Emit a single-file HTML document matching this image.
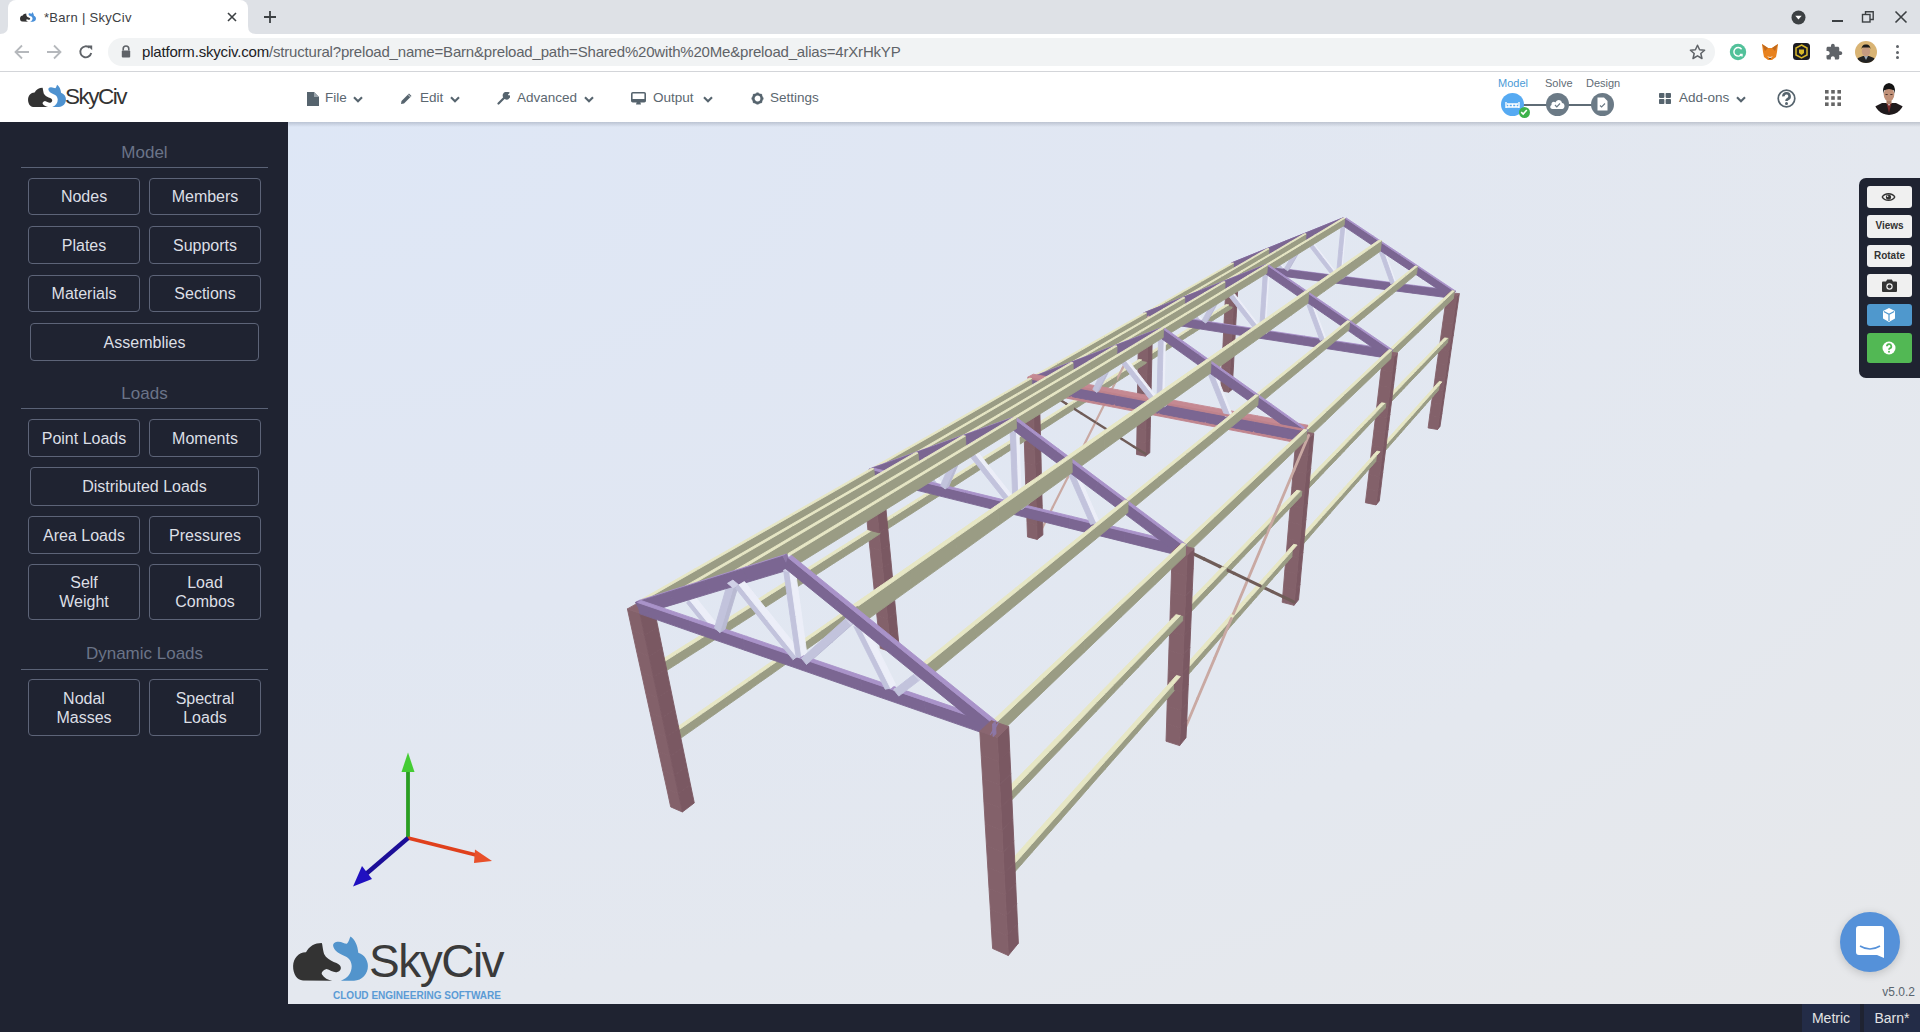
<!DOCTYPE html>
<html><head><meta charset="utf-8"><title>*Barn | SkyCiv</title>
<style>
*{box-sizing:border-box;margin:0;padding:0}
html,body{width:1920px;height:1032px;overflow:hidden;font-family:"Liberation Sans", sans-serif;background:#fff;position:relative}
.abs{position:absolute}
#tabbar{position:absolute;left:0;top:0;width:1920px;height:34px;background:#dee1e6}
#tab{position:absolute;left:8px;top:0;width:240px;height:34px;background:#fff;border-radius:8px 8px 0 0}
#addr{position:absolute;left:0;top:34px;width:1920px;height:37px;background:#fff}
#omni{position:absolute;left:108px;top:38px;width:1607px;height:28px;background:#f1f3f4;border-radius:14px}
#sep{position:absolute;left:0;top:71px;width:1920px;height:1px;background:#d3d5d9}
#hdr{position:absolute;left:0;top:72px;width:1920px;height:50px;background:#fff}
.menu{position:absolute;top:89px;font-size:13.5px;color:#5b6770;line-height:18px;white-space:nowrap}
#side{position:absolute;left:0;top:122px;width:288px;height:882px;background:#1f2331}
.sht{position:absolute;left:21px;width:247px;text-align:center;color:#6b7488;font-size:17px;line-height:22px}
.shl{position:absolute;left:21px;width:247px;height:1px;background:#5a6276}
.btn{position:absolute;border:1px solid #5d6478;border-radius:4px;color:#dcdfe5;font-size:16px;text-align:center;display:flex;align-items:center;justify-content:center;line-height:19px}
#canvas{position:absolute;left:288px;top:122px;width:1632px;height:882px;overflow:hidden;background:radial-gradient(ellipse 2300px 1250px at 0px 0px,#dee7f6 0%,#e1e7f2 40%,#e4e8ef 70%,#e7e8ea 100%)}
#status{position:absolute;left:0;top:1004px;width:1920px;height:28px;background:#1f2331}
.tb{position:absolute;left:1867px;width:45px;background:#f0f0f0;border-radius:3px;font-size:10px;font-weight:bold;color:#333;text-align:center}
</style></head><body>
<div id="tabbar"></div>
<div id="tab"></div>
<svg class="abs" style="left:0;top:26px" width="8" height="8"><path d="M0 8 Q8 8 8 0 L8 8 Z" fill="#fff"/></svg>
<svg class="abs" style="left:248px;top:26px" width="8" height="8"><path d="M8 8 Q0 8 0 0 L0 8 Z" fill="#fff"/></svg>
<!-- favicon --><svg class="abs" style="left:20px;top:12px" width="16" height="10" viewBox="0 0 75 46"><path d="M10,44.5 C4,44.5 0,38 0.1,30.1 C0.3,22 6,16 13,16.2 C16,10 22,7 28.7,6.9 C29.5,8 29.5,12 31.1,18 C33,22 37,24 40.7,25.9 C49,28 50,34 44.3,36.1 C41,37 37,34 33.5,33.1 C30,34 28,37 29,38.5 C31,42 35,44 39.5,44.8 Z" fill="#333"/><path d="M40.1,9.6 C40,7 43,5.5 45.5,5.7 C49,5.8 51,7.5 53.9,7.8 C56,6 56.5,2 57.5,0.6 C62,4 64.5,9 65.3,16.8 C72,19 75,25 74.9,30.1 C75,38 69,44.5 61.1,44.8 L47.9,44.8 C55,42 58.7,37 58.7,30.1 C58.5,24 55,21 50.5,19.4 C45,17.5 40.5,14 40.1,9.6 Z" fill="#4a90d9"/></svg>
<div class="abs" style="left:44px;top:10px;font-size:13px;color:#3c4043;line-height:16px;white-space:nowrap;letter-spacing:0.3px">*Barn | SkyCiv</div>
<svg class="abs" style="left:226px;top:11px" width="12" height="12" viewBox="0 0 12 12"><path d="M2 2 L10 10 M10 2 L2 10" stroke="#3c4043" stroke-width="1.6"/></svg>
<svg class="abs" style="left:263px;top:10px" width="14" height="14" viewBox="0 0 14 14"><path d="M7 1 V13 M1 7 H13" stroke="#3c4043" stroke-width="1.8"/></svg>
<svg class="abs" style="left:1791px;top:10px" width="15" height="15" viewBox="0 0 15 15"><circle cx="7.5" cy="7.5" r="7" fill="#3c4043"/><path d="M4.3 5.8 H10.7 L7.5 9.6 Z" fill="#fff"/></svg>
<div class="abs" style="left:1832px;top:20px;width:11px;height:1.6px;background:#3c4043"></div>
<svg class="abs" style="left:1861px;top:10px" width="14" height="14" viewBox="0 0 14 14"><rect x="1.5" y="4.5" width="7.5" height="7.5" fill="none" stroke="#3c4043" stroke-width="1.4"/><path d="M4.5 4.5 V1.8 H12.2 V9.5 H9" fill="none" stroke="#3c4043" stroke-width="1.4"/></svg>
<svg class="abs" style="left:1894px;top:10px" width="14" height="14" viewBox="0 0 14 14"><path d="M1.5 1.5 L12.5 12.5 M12.5 1.5 L1.5 12.5" stroke="#3c4043" stroke-width="1.6"/></svg>

<div id="addr"></div>
<svg class="abs" style="left:14px;top:44px" width="16" height="16" viewBox="0 0 16 16"><path d="M15 8 H2 M8 1.5 L1.5 8 L8 14.5" fill="none" stroke="#b5b8bc" stroke-width="1.8"/></svg>
<svg class="abs" style="left:46px;top:44px" width="16" height="16" viewBox="0 0 16 16"><path d="M1 8 H14 M8 1.5 L14.5 8 L8 14.5" fill="none" stroke="#b5b8bc" stroke-width="1.8"/></svg>
<svg class="abs" style="left:78px;top:44px" width="16" height="16" viewBox="0 0 16 16"><path d="M13.2 9 A5.5 5.5 0 1 1 11.6 3.8" fill="none" stroke="#5f6368" stroke-width="1.9"/><path d="M9.5 1.5 H14.2 V6.2 Z" fill="#5f6368"/></svg>
<div id="omni"></div>
<svg class="abs" style="left:121px;top:45px" width="10" height="13" viewBox="0 0 10 13"><path d="M2.2 5.5 V3.8 A2.8 2.8 0 0 1 7.8 3.8 V5.5" fill="none" stroke="#5f6368" stroke-width="1.6"/><rect x="0.8" y="5.5" width="8.4" height="7" rx="1" fill="#5f6368"/></svg>
<div class="abs" style="left:142px;top:42px;font-size:15px;line-height:20px;color:#5f6368;white-space:nowrap;letter-spacing:-0.19px"><span style="color:#202124">platform.skyciv.com</span>/structural?preload_name=Barn&amp;preload_path=Shared%20with%20Me&amp;preload_alias=4rXrHkYP</div>
<svg class="abs" style="left:1689px;top:44px" width="17" height="16" viewBox="0 0 17 16"><path d="M8.5 1.2 L10.6 5.8 L15.6 6.2 L11.8 9.5 L13 14.5 L8.5 11.8 L4 14.5 L5.2 9.5 L1.4 6.2 L6.4 5.8 Z" fill="none" stroke="#5f6368" stroke-width="1.5" stroke-linejoin="round"/></svg>
<svg class="abs" style="left:1729px;top:43px" width="18" height="18" viewBox="0 0 18 18"><circle cx="9" cy="9" r="8.2" fill="#52c19a"/><path d="M12.6 6.2 A4.3 4.3 0 1 0 12.8 11.2 M10.8 11.4 H13 V13.5" fill="none" stroke="#fff" stroke-width="1.4"/></svg>
<svg class="abs" style="left:1761px;top:43px" width="18" height="18" viewBox="0 0 18 18"><path d="M1 1 L7 5 H11 L17 1 L16 9 L15 14 L11 17 H7 L3 14 L2 9 Z" fill="#e8821e"/><path d="M1 1 L7 5 L4 8 Z M17 1 L11 5 L14 8 Z" fill="#c0691c"/><path d="M6 13 L9 16 L12 13 L9 14 Z" fill="#f0d8c0"/><path d="M8 15 H10 L9 16.5 Z" fill="#222"/></svg>
<svg class="abs" style="left:1793px;top:43px" width="17" height="17" viewBox="0 0 17 17"><rect x="0" y="0" width="17" height="17" rx="3.5" fill="#1b1c22"/><path d="M8.5 2 L14 5 V12 L8.5 15 L3 12 V5 Z" fill="none" stroke="#d8b82a" stroke-width="1.5"/><path d="M6 6.5 H11 V10 L8.5 12 L6 10 Z" fill="#d8b82a"/></svg>
<svg class="abs" style="left:1825px;top:43px" width="18" height="18" viewBox="0 0 24 24"><path d="M20.5 11H19V7c0-1.1-.9-2-2-2h-4V3.5C13 2.12 11.88 1 10.5 1S8 2.12 8 3.5V5H4c-1.1 0-1.99.9-1.99 2v3.8H3.5c1.49 0 2.7 1.21 2.7 2.7s-1.21 2.7-2.7 2.7H2V20c0 1.1.9 2 2 2h3.8v-1.5c0-1.49 1.21-2.7 2.7-2.7 1.49 0 2.7 1.21 2.7 2.7V22H17c1.1 0 2-.9 2-2v-4h1.5c1.38 0 2.5-1.12 2.5-2.5S21.88 11 20.5 11z" fill="#5f6368"/></svg>
<svg class="abs" style="left:1855px;top:41px" width="22" height="22" viewBox="0 0 22 22"><defs><clipPath id="av1"><circle cx="11" cy="11" r="11"/></clipPath></defs><g clip-path="url(#av1)"><rect width="22" height="22" fill="#d9b474"/><path d="M0 22 L3 17 L8 15 L14 15 L19 17 L22 22 Z" fill="#222"/><path d="M9 15 L11 19 L13 15 Z" fill="#9ab"/><ellipse cx="11" cy="10.5" rx="4.2" ry="5" fill="#c49a80"/><path d="M6.5 8 Q7 3 11 3.5 Q15 3 15.5 8 L14.5 6.5 L7.5 6.5 Z" fill="#1a1a1a"/></g></svg>
<div class="abs" style="left:1896px;top:45px;width:3px;height:3px;border-radius:50%;background:#5f6368"></div>
<div class="abs" style="left:1896px;top:50.5px;width:3px;height:3px;border-radius:50%;background:#5f6368"></div>
<div class="abs" style="left:1896px;top:56px;width:3px;height:3px;border-radius:50%;background:#5f6368"></div>
<div id="sep"></div>

<div id="hdr"></div>
<svg class="abs" style="left:28px;top:84px" width="38" height="24" viewBox="0 0 75 46"><path d="M10,44.5 C4,44.5 0,38 0.1,30.1 C0.3,22 6,16 13,16.2 C16,10 22,7 28.7,6.9 C29.5,8 29.5,12 31.1,18 C33,22 37,24 40.7,25.9 C49,28 50,34 44.3,36.1 C41,37 37,34 33.5,33.1 C30,34 28,37 29,38.5 C31,42 35,44 39.5,44.8 Z" fill="#333"/><path d="M40.1,9.6 C40,7 43,5.5 45.5,5.7 C49,5.8 51,7.5 53.9,7.8 C56,6 56.5,2 57.5,0.6 C62,4 64.5,9 65.3,16.8 C72,19 75,25 74.9,30.1 C75,38 69,44.5 61.1,44.8 L47.9,44.8 C55,42 58.7,37 58.7,30.1 C58.5,24 55,21 50.5,19.4 C45,17.5 40.5,14 40.1,9.6 Z" fill="#4e92d0"/></svg>
<div class="abs" style="left:65px;top:83px;font-size:22.5px;color:#333;line-height:28px;letter-spacing:-1.5px">SkyCiv</div>

<svg class="abs" style="left:307px;top:92px" width="12" height="14" viewBox="0 0 12 14"><path d="M0 0 H7 L12 5 V14 H0 Z" fill="#56646e"/><path d="M7 0 V5 H12" fill="#9aa4ab"/></svg>
<div class="menu" style="left:325px">File</div><svg class="abs" style="left:353px;top:96px" width="10" height="7" viewBox="0 0 10 7"><path d="M1 1.2 L5 5.2 L9 1.2" fill="none" stroke="#56646e" stroke-width="2.1"/></svg>
<svg class="abs" style="left:400px;top:92px" width="13" height="13" viewBox="0 0 13 13"><path d="M1 12 L1.5 9 L9 1.5 L11.5 4 L4 11.5 Z" fill="#56646e"/><path d="M8 2.5 L10.5 5" stroke="#fff" stroke-width="0.8"/></svg>
<div class="menu" style="left:420px">Edit</div><svg class="abs" style="left:450px;top:96px" width="10" height="7" viewBox="0 0 10 7"><path d="M1 1.2 L5 5.2 L9 1.2" fill="none" stroke="#56646e" stroke-width="2.1"/></svg>
<svg class="abs" style="left:497px;top:92px" width="13" height="13" viewBox="0 0 13 13"><path d="M1.5 11.5 L6.5 6.5 M7 2.5 A3 3 0 0 0 10.5 6.5 L12.5 4.5 L10.5 4 L9.5 2.5 L11 1 A3 3 0 0 0 7 2.5" fill="#56646e" stroke="#56646e" stroke-width="2.2" stroke-linecap="round"/></svg>
<div class="menu" style="left:517px">Advanced</div><svg class="abs" style="left:584px;top:96px" width="10" height="7" viewBox="0 0 10 7"><path d="M1 1.2 L5 5.2 L9 1.2" fill="none" stroke="#56646e" stroke-width="2.1"/></svg>
<svg class="abs" style="left:631px;top:92px" width="15" height="13" viewBox="0 0 15 13"><rect x="0.8" y="0.8" width="13.4" height="9" rx="1" fill="none" stroke="#56646e" stroke-width="1.6"/><rect x="0.8" y="7" width="13.4" height="2.8" fill="#56646e"/><path d="M5 12.5 H10 L9.2 9.8 H5.8 Z" fill="#56646e"/></svg>
<div class="menu" style="left:653px">Output</div><svg class="abs" style="left:703px;top:96px" width="10" height="7" viewBox="0 0 10 7"><path d="M1 1.2 L5 5.2 L9 1.2" fill="none" stroke="#56646e" stroke-width="2.1"/></svg>
<svg class="abs" style="left:751px;top:92px" width="13" height="13" viewBox="0 0 13 13"><circle cx="6.5" cy="6.5" r="4.2" fill="none" stroke="#56646e" stroke-width="2.6"/><path d="M6.5 0.5 V3 M6.5 10 V12.5 M0.5 6.5 H3 M10 6.5 H12.5 M2.3 2.3 L4 4 M9 9 L10.7 10.7 M2.3 10.7 L4 9 M9 4 L10.7 2.3" stroke="#56646e" stroke-width="2.2"/></svg>
<div class="menu" style="left:770px">Settings</div>

<div class="abs" style="left:1498px;top:77px;font-size:11px;color:#4a9ad6;line-height:13px">Model</div>
<div class="abs" style="left:1545px;top:77px;font-size:11px;color:#5f6c76;line-height:13px">Solve</div>
<div class="abs" style="left:1586px;top:77px;font-size:11px;color:#5f6c76;line-height:13px">Design</div>
<div class="abs" style="left:1520px;top:103.5px;width:80px;height:2px;background:#5f6c76"></div>
<div class="abs" style="left:1500.5px;top:93px;width:23px;height:23px;border-radius:50%;background:#56aaf2"></div>
<svg class="abs" style="left:1505px;top:99px" width="15" height="11" viewBox="0 0 15 11"><path d="M1 3 V9 M14 3 V9 M1 8 H14 M2 5 H13 M4 5 V8 M7.5 5 V8 M11 5 V8" stroke="#fff" stroke-width="1.4"/></svg>
<div class="abs" style="left:1518.5px;top:106.5px;width:11px;height:11px;border-radius:50%;background:#3cb24a"></div>
<svg class="abs" style="left:1520px;top:108px" width="8" height="8" viewBox="0 0 8 8"><path d="M1.2 4.2 L3.2 6 L6.8 2" fill="none" stroke="#fff" stroke-width="1.6"/></svg>
<div class="abs" style="left:1546px;top:93px;width:23px;height:23px;border-radius:50%;background:#6b7a86"></div>
<svg class="abs" style="left:1549px;top:98px" width="17" height="12" viewBox="0 0 17 12"><path d="M3.5 11 C1 11 0.5 8 2.5 7 C2 4 5 3 6.5 4.5 C7.5 1 12.5 1 13 5 C16 5 16.5 10 13.5 11 Z" fill="#fff"/><path d="M6 7 L7.8 8.8 L11 5.5" fill="none" stroke="#6b7a86" stroke-width="1.2"/></svg>
<div class="abs" style="left:1591px;top:93px;width:23px;height:23px;border-radius:50%;background:#6b7a86"></div>
<svg class="abs" style="left:1597px;top:97px" width="11" height="14" viewBox="0 0 11 14"><path d="M0.5 0.5 H7 L10.5 4 V13.5 H0.5 Z" fill="#fff"/><path d="M3 8.5 L4.6 10 L8 6.5" fill="none" stroke="#6b7a86" stroke-width="1.1"/></svg>

<svg class="abs" style="left:1659px;top:93px" width="12" height="11" viewBox="0 0 12 11"><rect x="0" y="0" width="5.4" height="4.9" rx="0.8" fill="#56646e"/><rect x="6.6" y="0" width="5.4" height="4.9" rx="0.8" fill="#56646e"/><rect x="0" y="6.1" width="5.4" height="4.9" rx="0.8" fill="#56646e"/><rect x="6.6" y="6.1" width="5.4" height="4.9" rx="0.8" fill="#56646e"/></svg>
<div class="menu" style="left:1679px">Add-ons</div><svg class="abs" style="left:1736px;top:96px" width="10" height="7" viewBox="0 0 10 7"><path d="M1 1.2 L5 5.2 L9 1.2" fill="none" stroke="#56646e" stroke-width="2.1"/></svg>
<svg class="abs" style="left:1777px;top:89px" width="19" height="19" viewBox="0 0 19 19"><circle cx="9.5" cy="9.5" r="8.3" fill="none" stroke="#56646e" stroke-width="1.7"/><path d="M6.4 7.4 A3.1 3.1 0 1 1 10.6 10.2 C9.8 10.6 9.5 11 9.5 12" fill="none" stroke="#56646e" stroke-width="2.6"/><circle cx="9.5" cy="14.6" r="1.5" fill="#56646e"/></svg>
<svg class="abs" style="left:1825px;top:90px" width="16" height="16" viewBox="0 0 16 16"><g fill="#666"><rect x="0" y="0" width="3.6" height="3.6"/><rect x="6.2" y="0" width="3.6" height="3.6"/><rect x="12.4" y="0" width="3.6" height="3.6"/><rect x="0" y="6.2" width="3.6" height="3.6"/><rect x="6.2" y="6.2" width="3.6" height="3.6"/><rect x="12.4" y="6.2" width="3.6" height="3.6"/><rect x="0" y="12.4" width="3.6" height="3.6"/><rect x="6.2" y="12.4" width="3.6" height="3.6"/><rect x="12.4" y="12.4" width="3.6" height="3.6"/></g></svg>
<svg class="abs" style="left:1874px;top:82px" width="30" height="33" viewBox="0 0 30 33"><defs><clipPath id="av2"><path d="M0 0 H30 V18 A15 15 0 0 1 0 18 Z"/></clipPath></defs><g clip-path="url(#av2)"><path d="M-1 33 L0 25 L8 21 L22 21 L30 25 L31 33 Z" fill="#1f1a1c"/><path d="M12.5 21 L15 31 L17.5 21 Z" fill="#7a2a2a"/><path d="M13.5 21 L15 24 L16.5 21 Z" fill="#ddd"/><rect x="12.5" y="17" width="5" height="5" fill="#a87c66"/><ellipse cx="15" cy="12.5" rx="5.3" ry="6.8" fill="#c09078"/><path d="M9 12 Q8 1.5 15 1 Q22 1.5 21 12 L20 8.5 Q15 5.5 10 8.5 Z" fill="#141414"/><path d="M11.5 12.5 h2.2 M16.3 12.5 h2.2" stroke="#3a2a24" stroke-width="0.9"/></g></svg>

<div id="side">
</div>
<div class="sht" style="top:142px">Model</div><div class="shl" style="top:167px"></div>
<div class="btn" style="left:28px;top:178px;width:112px;height:37px">Nodes</div>
<div class="btn" style="left:149px;top:178px;width:112px;height:37px">Members</div>
<div class="btn" style="left:28px;top:226px;width:112px;height:38px">Plates</div>
<div class="btn" style="left:149px;top:226px;width:112px;height:38px">Supports</div>
<div class="btn" style="left:28px;top:275px;width:112px;height:37px">Materials</div>
<div class="btn" style="left:149px;top:275px;width:112px;height:37px">Sections</div>
<div class="btn" style="left:30px;top:323px;width:229px;height:38px">Assemblies</div>
<div class="sht" style="top:383px">Loads</div><div class="shl" style="top:408px"></div>
<div class="btn" style="left:28px;top:419px;width:112px;height:38px">Point Loads</div>
<div class="btn" style="left:149px;top:419px;width:112px;height:38px">Moments</div>
<div class="btn" style="left:30px;top:467px;width:229px;height:39px">Distributed Loads</div>
<div class="btn" style="left:28px;top:516px;width:112px;height:38px">Area Loads</div>
<div class="btn" style="left:149px;top:516px;width:112px;height:38px">Pressures</div>
<div class="btn" style="left:28px;top:564px;width:112px;height:56px">Self<br>Weight</div>
<div class="btn" style="left:149px;top:564px;width:112px;height:56px">Load<br>Combos</div>
<div class="sht" style="top:643px">Dynamic Loads</div><div class="shl" style="top:669px"></div>
<div class="btn" style="left:28px;top:679px;width:112px;height:57px">Nodal<br>Masses</div>
<div class="btn" style="left:149px;top:679px;width:112px;height:57px">Spectral<br>Loads</div>

<div id="canvas"><div style="position:absolute;left:0;top:0;width:1632px;height:5px;background:linear-gradient(rgba(60,70,90,0.22),rgba(60,70,90,0))"></div>
<svg width="1632" height="882" viewBox="288 122 1632 882" style="position:absolute;left:0;top:0">
<polygon points="1232.1,389.5 1232.8,377.7 1229.3,380.3 1228.7,392.2" fill="#7a5862" stroke="#7a5862" stroke-width="0.9" stroke-linejoin="round"/>
<polygon points="1228.7,392.2 1229.3,380.3 1221.2,378.9 1220.6,390.7" fill="#83616a" stroke="#83616a" stroke-width="0.9" stroke-linejoin="round"/>
<polygon points="1232.8,377.7 1233.5,365.7 1230.0,368.3 1229.3,380.3" fill="#7a5862" stroke="#7a5862" stroke-width="0.9" stroke-linejoin="round"/>
<polygon points="1229.3,380.3 1230.0,368.3 1221.8,366.9 1221.2,378.9" fill="#83616a" stroke="#83616a" stroke-width="0.9" stroke-linejoin="round"/>
<polygon points="1233.5,365.7 1234.1,353.6 1230.6,356.1 1230.0,368.3" fill="#7a5862" stroke="#7a5862" stroke-width="0.9" stroke-linejoin="round"/>
<polygon points="1230.0,368.3 1230.6,356.1 1222.5,354.8 1221.8,366.9" fill="#83616a" stroke="#83616a" stroke-width="0.9" stroke-linejoin="round"/>
<polygon points="1234.1,353.6 1234.8,341.4 1231.3,343.9 1230.6,356.1" fill="#7a5862" stroke="#7a5862" stroke-width="0.9" stroke-linejoin="round"/>
<polygon points="1230.6,356.1 1231.3,343.9 1223.1,342.6 1222.5,354.8" fill="#83616a" stroke="#83616a" stroke-width="0.9" stroke-linejoin="round"/>
<polygon points="1226.0,353.6 1229.7,351.0 1230.0,345.5 1226.3,348.1" fill="#9a9c84" stroke="#9a9c84" stroke-width="0.9" stroke-linejoin="round"/>
<polygon points="1226.3,348.1 1230.0,345.5 1227.6,345.2 1224.0,347.7" fill="#e7e7c5" stroke="#e7e7c5" stroke-width="0.9" stroke-linejoin="round"/>
<polygon points="1234.8,341.4 1235.5,329.1 1232.0,331.5 1231.3,343.9" fill="#7a5862" stroke="#7a5862" stroke-width="0.9" stroke-linejoin="round"/>
<polygon points="1231.3,343.9 1232.0,331.5 1223.7,330.2 1223.1,342.6" fill="#83616a" stroke="#83616a" stroke-width="0.9" stroke-linejoin="round"/>
<polygon points="1235.5,329.1 1236.2,316.6 1232.6,319.0 1232.0,331.5" fill="#7a5862" stroke="#7a5862" stroke-width="0.9" stroke-linejoin="round"/>
<polygon points="1232.0,331.5 1232.6,319.0 1224.3,317.7 1223.7,330.2" fill="#83616a" stroke="#83616a" stroke-width="0.9" stroke-linejoin="round"/>
<polygon points="1222.3,356.2 1226.0,353.6 1226.3,348.1 1222.6,350.7" fill="#9a9c84" stroke="#9a9c84" stroke-width="0.9" stroke-linejoin="round"/>
<polygon points="1222.6,350.7 1226.3,348.1 1224.0,347.7 1220.3,350.3" fill="#e7e7c5" stroke="#e7e7c5" stroke-width="0.9" stroke-linejoin="round"/>
<polygon points="1236.2,316.6 1236.9,304.0 1233.3,306.3 1232.6,319.0" fill="#7a5862" stroke="#7a5862" stroke-width="0.9" stroke-linejoin="round"/>
<polygon points="1232.6,319.0 1233.3,306.3 1225.0,305.1 1224.3,317.7" fill="#83616a" stroke="#83616a" stroke-width="0.9" stroke-linejoin="round"/>
<polygon points="1236.9,304.0 1237.6,291.3 1234.0,293.6 1233.3,306.3" fill="#7a5862" stroke="#7a5862" stroke-width="0.9" stroke-linejoin="round"/>
<polygon points="1228.3,310.6 1232.0,308.2 1232.3,302.5 1228.6,304.9" fill="#9a9c84" stroke="#9a9c84" stroke-width="0.9" stroke-linejoin="round"/>
<polygon points="1228.6,304.9 1232.3,302.5 1229.9,302.2 1226.2,304.5" fill="#e7e7c5" stroke="#e7e7c5" stroke-width="0.9" stroke-linejoin="round"/>
<polygon points="1233.3,306.3 1234.0,293.6 1225.6,292.4 1225.0,305.1" fill="#83616a" stroke="#83616a" stroke-width="0.9" stroke-linejoin="round"/>
<polygon points="1237.6,291.3 1238.3,278.5 1234.7,280.6 1234.0,293.6" fill="#7a5862" stroke="#7a5862" stroke-width="0.9" stroke-linejoin="round"/>
<polygon points="1218.6,358.8 1222.3,356.2 1222.6,350.7 1218.9,353.3" fill="#9a9c84" stroke="#9a9c84" stroke-width="0.9" stroke-linejoin="round"/>
<polygon points="1218.9,353.3 1222.6,350.7 1220.3,350.3 1216.5,352.9" fill="#e7e7c5" stroke="#e7e7c5" stroke-width="0.9" stroke-linejoin="round"/>
<polygon points="1234.0,293.6 1234.7,280.6 1226.3,279.5 1225.6,292.4" fill="#83616a" stroke="#83616a" stroke-width="0.9" stroke-linejoin="round"/>
<polygon points="1239.1,265.5 1235.4,267.6 1227.0,266.5 1230.6,264.4" fill="#8a6670" stroke="#8a6670" stroke-width="0.9" stroke-linejoin="round"/>
<polygon points="1238.3,278.5 1239.1,265.5 1235.4,267.6 1234.7,280.6" fill="#7a5862" stroke="#7a5862" stroke-width="0.9" stroke-linejoin="round"/>
<polygon points="1224.5,313.0 1228.3,310.6 1228.6,304.9 1224.8,307.2" fill="#9a9c84" stroke="#9a9c84" stroke-width="0.9" stroke-linejoin="round"/>
<polygon points="1234.7,280.6 1235.4,267.6 1227.0,266.5 1226.3,279.5" fill="#83616a" stroke="#83616a" stroke-width="0.9" stroke-linejoin="round"/>
<polygon points="1224.8,307.2 1228.6,304.9 1226.2,304.5 1222.4,306.9" fill="#e7e7c5" stroke="#e7e7c5" stroke-width="0.9" stroke-linejoin="round"/>
<polygon points="1214.9,361.5 1218.6,358.8 1218.9,353.3 1215.1,355.9" fill="#9a9c84" stroke="#9a9c84" stroke-width="0.9" stroke-linejoin="round"/>
<polygon points="1215.1,355.9 1218.9,353.3 1216.5,352.9 1212.8,355.5" fill="#e7e7c5" stroke="#e7e7c5" stroke-width="0.9" stroke-linejoin="round"/>
<polygon points="1232.2,262.5 1258.7,251.8 1257.7,252.4 1231.3,263.1" fill="#a993c9" stroke="#a993c9" stroke-width="0.9" stroke-linejoin="round"/>
<polygon points="1233.7,262.3 1267.9,266.7 1267.0,267.2 1232.7,262.9" fill="#a993c9" stroke="#a993c9" stroke-width="0.9" stroke-linejoin="round"/>
<polygon points="1232.7,262.9 1267.0,267.2 1266.5,274.1 1232.4,269.7" fill="#7b6692" stroke="#7b6692" stroke-width="0.9" stroke-linejoin="round"/>
<polygon points="1231.3,263.1 1257.7,252.4 1260.2,258.9 1233.8,269.5" fill="#7b6692" stroke="#7b6692" stroke-width="0.9" stroke-linejoin="round"/>
<polygon points="1220.8,315.4 1224.5,313.0 1224.8,307.2 1221.1,309.6" fill="#9a9c84" stroke="#9a9c84" stroke-width="0.9" stroke-linejoin="round"/>
<polygon points="1221.1,309.6 1224.8,307.2 1222.4,306.9 1218.6,309.3" fill="#e7e7c5" stroke="#e7e7c5" stroke-width="0.9" stroke-linejoin="round"/>
<polygon points="1211.1,364.2 1214.9,361.5 1215.1,355.9 1211.3,358.5" fill="#9a9c84" stroke="#9a9c84" stroke-width="0.9" stroke-linejoin="round"/>
<polygon points="1211.3,358.5 1215.1,355.9 1212.8,355.5 1208.9,358.1" fill="#e7e7c5" stroke="#e7e7c5" stroke-width="0.9" stroke-linejoin="round"/>
<polygon points="1217.4,278.8 1233.1,269.7 1233.5,263.2 1217.8,272.1" fill="#9a9c84" stroke="#9a9c84" stroke-width="0.9" stroke-linejoin="round"/>
<polygon points="1216.9,317.9 1220.8,315.4 1221.1,309.6 1217.2,312.0" fill="#9a9c84" stroke="#9a9c84" stroke-width="0.9" stroke-linejoin="round"/>
<polygon points="1284.1,267.8 1282.8,268.6 1280.1,270.9 1281.4,270.1" fill="#d0d0e6" stroke="#d0d0e6" stroke-width="0.9" stroke-linejoin="round"/>
<polygon points="1217.2,312.0 1221.1,309.6 1218.6,309.3 1214.8,311.7" fill="#e7e7c5" stroke="#e7e7c5" stroke-width="0.9" stroke-linejoin="round"/>
<polygon points="1273.0,253.5 1284.1,267.8 1282.8,268.6 1271.6,254.3" fill="#eceef8" stroke="#eceef8" stroke-width="0.9" stroke-linejoin="round"/>
<polygon points="1217.8,272.1 1233.5,263.2 1231.8,263.0 1216.0,271.9" fill="#e7e7c5" stroke="#e7e7c5" stroke-width="0.9" stroke-linejoin="round"/>
<polygon points="1258.7,251.8 1285.9,240.8 1285.0,241.3 1257.7,252.4" fill="#a993c9" stroke="#a993c9" stroke-width="0.9" stroke-linejoin="round"/>
<polygon points="1267.9,266.7 1303.0,271.2 1302.2,271.7 1267.0,267.2" fill="#a993c9" stroke="#a993c9" stroke-width="0.9" stroke-linejoin="round"/>
<polygon points="1271.6,254.3 1282.8,268.6 1280.1,270.9 1269.0,256.7" fill="#c2c3dc" stroke="#c2c3dc" stroke-width="0.9" stroke-linejoin="round"/>
<polygon points="1267.0,267.2 1302.2,271.7 1301.6,278.7 1266.5,274.1" fill="#7b6692" stroke="#7b6692" stroke-width="0.9" stroke-linejoin="round"/>
<polygon points="1257.7,252.4 1285.0,241.3 1287.6,248.0 1260.2,258.9" fill="#7b6692" stroke="#7b6692" stroke-width="0.9" stroke-linejoin="round"/>
<polygon points="1207.2,366.9 1211.1,364.2 1211.3,358.5 1207.5,361.2" fill="#9a9c84" stroke="#9a9c84" stroke-width="0.9" stroke-linejoin="round"/>
<polygon points="1207.5,361.2 1211.3,358.5 1208.9,358.1 1205.1,360.8" fill="#e7e7c5" stroke="#e7e7c5" stroke-width="0.9" stroke-linejoin="round"/>
<polygon points="1440.0,426.4 1441.9,413.8 1439.3,416.9 1437.5,429.5" fill="#7a5862" stroke="#7a5862" stroke-width="0.9" stroke-linejoin="round"/>
<polygon points="1213.1,320.3 1216.9,317.9 1217.2,312.0 1213.4,314.5" fill="#9a9c84" stroke="#9a9c84" stroke-width="0.9" stroke-linejoin="round"/>
<polygon points="1304.2,242.0 1287.5,270.6 1288.9,269.8 1305.5,241.2" fill="#b9bad2" stroke="#b9bad2" stroke-width="0.9" stroke-linejoin="round"/>
<polygon points="1213.4,314.5 1217.2,312.0 1214.8,311.7 1210.9,314.1" fill="#e7e7c5" stroke="#e7e7c5" stroke-width="0.9" stroke-linejoin="round"/>
<polygon points="1301.1,239.9 1284.5,268.6 1287.5,270.6 1304.2,242.0" fill="#c2c3dc" stroke="#c2c3dc" stroke-width="0.9" stroke-linejoin="round"/>
<polygon points="1437.5,429.5 1439.3,416.9 1429.8,415.2 1428.1,427.9" fill="#83616a" stroke="#83616a" stroke-width="0.9" stroke-linejoin="round"/>
<polygon points="1203.3,369.6 1207.2,366.9 1207.5,361.2 1203.6,364.0" fill="#9a9c84" stroke="#9a9c84" stroke-width="0.9" stroke-linejoin="round"/>
<polygon points="1203.6,364.0 1207.5,361.2 1205.1,360.8 1201.1,363.5" fill="#e7e7c5" stroke="#e7e7c5" stroke-width="0.9" stroke-linejoin="round"/>
<polygon points="1441.9,413.8 1443.7,401.0 1441.2,404.0 1439.3,416.9" fill="#7a5862" stroke="#7a5862" stroke-width="0.9" stroke-linejoin="round"/>
<polygon points="1303.0,271.2 1339.2,275.8 1338.4,276.3 1302.2,271.7" fill="#a993c9" stroke="#a993c9" stroke-width="0.9" stroke-linejoin="round"/>
<polygon points="1302.2,271.7 1338.4,276.3 1337.7,283.4 1301.6,278.7" fill="#7b6692" stroke="#7b6692" stroke-width="0.9" stroke-linejoin="round"/>
<polygon points="1285.9,240.8 1314.1,229.5 1313.2,230.0 1285.0,241.3" fill="#a993c9" stroke="#a993c9" stroke-width="0.9" stroke-linejoin="round"/>
<polygon points="1302.4,239.1 1301.1,239.9 1304.2,242.0 1305.5,241.2" fill="#d0d0e6" stroke="#d0d0e6" stroke-width="0.9" stroke-linejoin="round"/>
<polygon points="1285.0,241.3 1313.2,230.0 1315.7,236.8 1287.6,248.0" fill="#7b6692" stroke="#7b6692" stroke-width="0.9" stroke-linejoin="round"/>
<polygon points="1439.3,416.9 1441.2,404.0 1431.6,402.4 1429.8,415.2" fill="#83616a" stroke="#83616a" stroke-width="0.9" stroke-linejoin="round"/>
<polygon points="1443.7,401.0 1445.6,388.1 1443.0,391.1 1441.2,404.0" fill="#7a5862" stroke="#7a5862" stroke-width="0.9" stroke-linejoin="round"/>
<polygon points="1209.2,322.8 1213.1,320.3 1213.4,314.5 1209.4,317.0" fill="#9a9c84" stroke="#9a9c84" stroke-width="0.9" stroke-linejoin="round"/>
<polygon points="1310.1,238.7 1324.0,256.6 1322.7,257.5 1308.8,239.5" fill="#eceef8" stroke="#eceef8" stroke-width="0.9" stroke-linejoin="round"/>
<polygon points="1209.4,317.0 1213.4,314.5 1210.9,314.1 1207.0,316.6" fill="#e7e7c5" stroke="#e7e7c5" stroke-width="0.9" stroke-linejoin="round"/>
<polygon points="1337.9,274.6 1336.6,275.5 1333.8,277.8 1335.1,276.9" fill="#d0d0e6" stroke="#d0d0e6" stroke-width="0.9" stroke-linejoin="round"/>
<polygon points="1253.4,264.5 1268.6,255.6 1269.0,248.8 1253.9,257.6" fill="#9a9c84" stroke="#9a9c84" stroke-width="0.9" stroke-linejoin="round"/>
<polygon points="1308.8,239.5 1322.7,257.5 1319.9,259.9 1306.0,241.9" fill="#c2c3dc" stroke="#c2c3dc" stroke-width="0.9" stroke-linejoin="round"/>
<polygon points="1324.0,256.6 1337.9,274.6 1336.6,275.5 1322.7,257.5" fill="#eceef8" stroke="#eceef8" stroke-width="0.9" stroke-linejoin="round"/>
<polygon points="1253.9,257.6 1269.0,248.8 1267.2,248.6 1252.1,257.4" fill="#e7e7c5" stroke="#e7e7c5" stroke-width="0.9" stroke-linejoin="round"/>
<polygon points="1322.7,257.5 1336.6,275.5 1333.8,277.8 1319.9,259.9" fill="#c2c3dc" stroke="#c2c3dc" stroke-width="0.9" stroke-linejoin="round"/>
<polygon points="1199.4,372.4 1203.3,369.6 1203.6,364.0 1199.6,366.7" fill="#9a9c84" stroke="#9a9c84" stroke-width="0.9" stroke-linejoin="round"/>
<polygon points="1199.6,366.7 1203.6,364.0 1201.1,363.5 1197.2,366.3" fill="#e7e7c5" stroke="#e7e7c5" stroke-width="0.9" stroke-linejoin="round"/>
<polygon points="1441.2,404.0 1443.0,391.1 1433.5,389.5 1431.6,402.4" fill="#83616a" stroke="#83616a" stroke-width="0.9" stroke-linejoin="round"/>
<polygon points="1445.6,388.1 1447.5,375.1 1444.9,378.0 1443.0,391.1" fill="#7a5862" stroke="#7a5862" stroke-width="0.9" stroke-linejoin="round"/>
<polygon points="1343.7,250.6 1341.3,275.1 1340.1,276.0 1342.4,251.5" fill="#eceef8" stroke="#eceef8" stroke-width="0.9" stroke-linejoin="round"/>
<polygon points="1342.4,251.5 1340.1,276.0 1336.4,275.6 1338.7,251.0" fill="#c2c3dc" stroke="#c2c3dc" stroke-width="0.9" stroke-linejoin="round"/>
<polygon points="1342.2,278.9 1359.4,264.7 1360.7,263.8 1343.4,278.0" fill="#b9bad2" stroke="#b9bad2" stroke-width="0.9" stroke-linejoin="round"/>
<polygon points="1339.2,275.8 1376.3,280.5 1375.6,281.1 1338.4,276.3" fill="#a993c9" stroke="#a993c9" stroke-width="0.9" stroke-linejoin="round"/>
<polygon points="1438.5,390.1 1441.2,387.1 1441.9,381.9 1439.3,384.9" fill="#9a9c84" stroke="#9a9c84" stroke-width="0.9" stroke-linejoin="round"/>
<polygon points="1338.4,276.3 1375.6,281.1 1374.8,288.2 1337.7,283.4" fill="#7b6692" stroke="#7b6692" stroke-width="0.9" stroke-linejoin="round"/>
<polygon points="1443.0,391.1 1444.9,378.0 1435.3,376.4 1433.5,389.5" fill="#83616a" stroke="#83616a" stroke-width="0.9" stroke-linejoin="round"/>
<polygon points="1439.3,384.9 1441.9,381.9 1439.2,381.4 1436.5,384.4" fill="#e7e7c5" stroke="#e7e7c5" stroke-width="0.9" stroke-linejoin="round"/>
<polygon points="1205.2,325.4 1209.2,322.8 1209.4,317.0 1205.5,319.5" fill="#9a9c84" stroke="#9a9c84" stroke-width="0.9" stroke-linejoin="round"/>
<polygon points="1339.8,275.9 1357.1,261.7 1359.4,264.7 1342.2,278.9" fill="#c2c3dc" stroke="#c2c3dc" stroke-width="0.9" stroke-linejoin="round"/>
<polygon points="1447.5,375.1 1449.4,361.9 1446.8,364.7 1444.9,378.0" fill="#7a5862" stroke="#7a5862" stroke-width="0.9" stroke-linejoin="round"/>
<polygon points="1205.5,319.5 1209.4,317.0 1207.0,316.6 1203.0,319.1" fill="#e7e7c5" stroke="#e7e7c5" stroke-width="0.9" stroke-linejoin="round"/>
<polygon points="1314.1,229.5 1343.2,217.7 1342.4,218.2 1313.2,230.0" fill="#a993c9" stroke="#a993c9" stroke-width="0.9" stroke-linejoin="round"/>
<polygon points="1313.2,230.0 1342.4,218.2 1344.9,225.1 1315.7,236.8" fill="#7b6692" stroke="#7b6692" stroke-width="0.9" stroke-linejoin="round"/>
<polygon points="1195.4,375.2 1199.4,372.4 1199.6,366.7 1195.6,369.5" fill="#9a9c84" stroke="#9a9c84" stroke-width="0.9" stroke-linejoin="round"/>
<polygon points="1195.6,369.5 1199.6,366.7 1197.2,366.3 1193.2,369.1" fill="#e7e7c5" stroke="#e7e7c5" stroke-width="0.9" stroke-linejoin="round"/>
<polygon points="1346.1,225.6 1343.7,250.6 1342.4,251.5 1344.8,226.4" fill="#eceef8" stroke="#eceef8" stroke-width="0.9" stroke-linejoin="round"/>
<polygon points="1444.9,378.0 1446.8,364.7 1437.1,363.2 1435.3,376.4" fill="#83616a" stroke="#83616a" stroke-width="0.9" stroke-linejoin="round"/>
<polygon points="1344.8,226.4 1342.4,251.5 1338.7,251.0 1341.1,226.0" fill="#c2c3dc" stroke="#c2c3dc" stroke-width="0.9" stroke-linejoin="round"/>
<polygon points="1449.4,361.9 1451.3,348.6 1448.8,351.3 1446.8,364.7" fill="#7a5862" stroke="#7a5862" stroke-width="0.9" stroke-linejoin="round"/>
<polygon points="1346.1,225.6 1344.8,226.4 1341.1,226.0 1342.4,225.2" fill="#d0d0e6" stroke="#d0d0e6" stroke-width="0.9" stroke-linejoin="round"/>
<polygon points="1343.2,217.7 1342.4,218.2 1344.9,225.1 1345.7,224.6" fill="#8c77a6" stroke="#8c77a6" stroke-width="0.9" stroke-linejoin="round"/>
<polygon points="1359.4,264.7 1377.1,250.2 1378.3,249.3 1360.7,263.8" fill="#b9bad2" stroke="#b9bad2" stroke-width="0.9" stroke-linejoin="round"/>
<polygon points="1435.9,393.1 1438.5,390.1 1439.3,384.9 1436.6,387.9" fill="#9a9c84" stroke="#9a9c84" stroke-width="0.9" stroke-linejoin="round"/>
<polygon points="1446.8,364.7 1448.8,351.3 1439.0,349.9 1437.1,363.2" fill="#83616a" stroke="#83616a" stroke-width="0.9" stroke-linejoin="round"/>
<polygon points="1201.2,327.9 1205.2,325.4 1205.5,319.5 1201.5,322.0" fill="#9a9c84" stroke="#9a9c84" stroke-width="0.9" stroke-linejoin="round"/>
<polygon points="1436.6,387.9 1439.3,384.9 1436.5,384.4 1433.8,387.4" fill="#e7e7c5" stroke="#e7e7c5" stroke-width="0.9" stroke-linejoin="round"/>
<polygon points="1357.1,261.7 1374.7,247.1 1377.1,250.2 1359.4,264.7" fill="#c2c3dc" stroke="#c2c3dc" stroke-width="0.9" stroke-linejoin="round"/>
<polygon points="1451.3,348.6 1453.3,335.1 1450.7,337.8 1448.8,351.3" fill="#7a5862" stroke="#7a5862" stroke-width="0.9" stroke-linejoin="round"/>
<polygon points="1201.5,322.0 1205.5,319.5 1203.0,319.1 1199.0,321.6" fill="#e7e7c5" stroke="#e7e7c5" stroke-width="0.9" stroke-linejoin="round"/>
<polygon points="1376.3,280.5 1414.6,285.4 1413.8,286.0 1375.6,281.1" fill="#a993c9" stroke="#a993c9" stroke-width="0.9" stroke-linejoin="round"/>
<polygon points="1375.6,281.1 1413.8,286.0 1412.9,293.2 1374.8,288.2" fill="#7b6692" stroke="#7b6692" stroke-width="0.9" stroke-linejoin="round"/>
<polygon points="1201.0,288.4 1217.4,278.8 1217.8,272.1 1201.3,281.6" fill="#9a9c84" stroke="#9a9c84" stroke-width="0.9" stroke-linejoin="round"/>
<polygon points="1345.5,218.5 1372.4,236.5 1368.5,242.8 1341.7,224.8" fill="#7b6692" stroke="#7b6692" stroke-width="0.9" stroke-linejoin="round"/>
<polygon points="1346.3,218.0 1373.2,236.0 1372.4,236.5 1345.5,218.5" fill="#a993c9" stroke="#a993c9" stroke-width="0.9" stroke-linejoin="round"/>
<polygon points="1291.0,249.6 1305.5,240.8 1306.1,233.9 1291.6,242.5" fill="#9a9c84" stroke="#9a9c84" stroke-width="0.9" stroke-linejoin="round"/>
<polygon points="1201.3,281.6 1217.8,272.1 1216.0,271.9 1199.5,281.3" fill="#e7e7c5" stroke="#e7e7c5" stroke-width="0.9" stroke-linejoin="round"/>
<polygon points="1291.6,242.5 1306.1,233.9 1304.3,233.7 1289.7,242.3" fill="#e7e7c5" stroke="#e7e7c5" stroke-width="0.9" stroke-linejoin="round"/>
<polygon points="1191.3,378.1 1195.4,375.2 1195.6,369.5 1191.6,372.3" fill="#9a9c84" stroke="#9a9c84" stroke-width="0.9" stroke-linejoin="round"/>
<polygon points="1375.9,246.2 1374.7,247.1 1377.1,250.2 1378.3,249.3" fill="#d0d0e6" stroke="#d0d0e6" stroke-width="0.9" stroke-linejoin="round"/>
<polygon points="1383.8,248.5 1395.5,281.6 1394.3,282.5 1382.6,249.3" fill="#eceef8" stroke="#eceef8" stroke-width="0.9" stroke-linejoin="round"/>
<polygon points="1191.6,372.3 1195.6,369.5 1193.2,369.1 1189.1,371.9" fill="#e7e7c5" stroke="#e7e7c5" stroke-width="0.9" stroke-linejoin="round"/>
<polygon points="1383.8,248.5 1382.6,249.3 1378.9,250.7 1380.1,249.8" fill="#d0d0e6" stroke="#d0d0e6" stroke-width="0.9" stroke-linejoin="round"/>
<polygon points="1448.8,351.3 1450.7,337.8 1440.9,336.4 1439.0,349.9" fill="#83616a" stroke="#83616a" stroke-width="0.9" stroke-linejoin="round"/>
<polygon points="1382.6,249.3 1394.3,282.5 1390.7,283.8 1378.9,250.7" fill="#c2c3dc" stroke="#c2c3dc" stroke-width="0.9" stroke-linejoin="round"/>
<polygon points="1453.3,335.1 1455.3,321.5 1452.7,324.1 1450.7,337.8" fill="#7a5862" stroke="#7a5862" stroke-width="0.9" stroke-linejoin="round"/>
<polygon points="1397.3,282.1 1412.1,270.4 1411.0,271.3 1396.1,283.1" fill="#eceef8" stroke="#eceef8" stroke-width="0.9" stroke-linejoin="round"/>
<polygon points="1444.9,345.5 1447.5,342.7 1448.3,337.3 1445.7,340.0" fill="#9a9c84" stroke="#9a9c84" stroke-width="0.9" stroke-linejoin="round"/>
<polygon points="1445.7,340.0 1448.3,337.3 1445.5,336.9 1442.9,339.6" fill="#e7e7c5" stroke="#e7e7c5" stroke-width="0.9" stroke-linejoin="round"/>
<polygon points="1372.4,236.5 1399.6,254.7 1395.6,260.9 1368.5,242.8" fill="#7b6692" stroke="#7b6692" stroke-width="0.9" stroke-linejoin="round"/>
<polygon points="1373.2,236.0 1400.4,254.1 1399.6,254.7 1372.4,236.5" fill="#a993c9" stroke="#a993c9" stroke-width="0.9" stroke-linejoin="round"/>
<polygon points="1396.1,283.1 1411.0,271.3 1413.4,274.5 1398.5,286.1" fill="#c2c3dc" stroke="#c2c3dc" stroke-width="0.9" stroke-linejoin="round"/>
<polygon points="1412.1,270.4 1411.0,271.3 1413.4,274.5 1414.5,273.5" fill="#d0d0e6" stroke="#d0d0e6" stroke-width="0.9" stroke-linejoin="round"/>
<polygon points="1450.7,337.8 1452.7,324.1 1442.8,322.7 1440.9,336.4" fill="#83616a" stroke="#83616a" stroke-width="0.9" stroke-linejoin="round"/>
<polygon points="1455.3,321.5 1457.3,307.7 1454.7,310.2 1452.7,324.1" fill="#7a5862" stroke="#7a5862" stroke-width="0.9" stroke-linejoin="round"/>
<polygon points="1433.2,396.2 1435.9,393.1 1436.6,387.9 1433.9,390.9" fill="#9a9c84" stroke="#9a9c84" stroke-width="0.9" stroke-linejoin="round"/>
<polygon points="1197.2,330.5 1201.2,327.9 1201.5,322.0 1197.4,324.6" fill="#9a9c84" stroke="#9a9c84" stroke-width="0.9" stroke-linejoin="round"/>
<polygon points="1197.4,324.6 1201.5,322.0 1199.0,321.6 1194.9,324.2" fill="#e7e7c5" stroke="#e7e7c5" stroke-width="0.9" stroke-linejoin="round"/>
<polygon points="1433.9,390.9 1436.6,387.9 1433.8,387.4 1431.1,390.5" fill="#e7e7c5" stroke="#e7e7c5" stroke-width="0.9" stroke-linejoin="round"/>
<polygon points="1414.6,285.4 1453.9,290.4 1453.2,291.0 1413.8,286.0" fill="#a993c9" stroke="#a993c9" stroke-width="0.9" stroke-linejoin="round"/>
<polygon points="1399.6,254.7 1427.1,273.1 1423.0,279.2 1395.6,260.9" fill="#7b6692" stroke="#7b6692" stroke-width="0.9" stroke-linejoin="round"/>
<polygon points="1400.4,254.1 1427.8,272.5 1427.1,273.1 1399.6,254.7" fill="#a993c9" stroke="#a993c9" stroke-width="0.9" stroke-linejoin="round"/>
<polygon points="1413.8,286.0 1453.2,291.0 1452.2,298.3 1412.9,293.2" fill="#7b6692" stroke="#7b6692" stroke-width="0.9" stroke-linejoin="round"/>
<polygon points="1187.3,381.0 1191.3,378.1 1191.6,372.3 1187.5,375.2" fill="#9a9c84" stroke="#9a9c84" stroke-width="0.9" stroke-linejoin="round"/>
<polygon points="1187.5,375.2 1191.6,372.3 1189.1,371.9 1185.0,374.7" fill="#e7e7c5" stroke="#e7e7c5" stroke-width="0.9" stroke-linejoin="round"/>
<polygon points="1452.7,324.1 1454.7,310.2 1444.8,308.9 1442.8,322.7" fill="#83616a" stroke="#83616a" stroke-width="0.9" stroke-linejoin="round"/>
<polygon points="1457.3,307.7 1459.3,293.7 1456.8,296.2 1454.7,310.2" fill="#7a5862" stroke="#7a5862" stroke-width="0.9" stroke-linejoin="round"/>
<polygon points="1427.1,273.1 1454.8,291.6 1450.6,297.7 1423.0,279.2" fill="#7b6692" stroke="#7b6692" stroke-width="0.9" stroke-linejoin="round"/>
<polygon points="1427.8,272.5 1455.5,291.0 1454.8,291.6 1427.1,273.1" fill="#a993c9" stroke="#a993c9" stroke-width="0.9" stroke-linejoin="round"/>
<polygon points="1459.3,293.7 1456.8,296.2 1446.7,294.9 1449.4,292.5" fill="#8a6670" stroke="#8a6670" stroke-width="0.9" stroke-linejoin="round"/>
<polygon points="1455.5,291.0 1454.8,291.6 1450.6,297.7 1451.2,297.1" fill="#8c77a6" stroke="#8c77a6" stroke-width="0.9" stroke-linejoin="round"/>
<polygon points="1453.9,290.4 1453.2,291.0 1452.2,298.3 1452.8,297.7" fill="#8c77a6" stroke="#8c77a6" stroke-width="0.9" stroke-linejoin="round"/>
<polygon points="1442.2,348.3 1444.9,345.5 1445.7,340.0 1443.0,342.8" fill="#9a9c84" stroke="#9a9c84" stroke-width="0.9" stroke-linejoin="round"/>
<polygon points="1443.0,342.8 1445.7,340.0 1442.9,339.6 1440.2,342.4" fill="#e7e7c5" stroke="#e7e7c5" stroke-width="0.9" stroke-linejoin="round"/>
<polygon points="1454.7,310.2 1456.8,296.2 1446.7,294.9 1444.8,308.9" fill="#83616a" stroke="#83616a" stroke-width="0.9" stroke-linejoin="round"/>
<polygon points="1193.1,333.2 1197.2,330.5 1197.4,324.6 1193.3,327.2" fill="#9a9c84" stroke="#9a9c84" stroke-width="0.9" stroke-linejoin="round"/>
<polygon points="1193.3,327.2 1197.4,324.6 1194.9,324.2 1190.8,326.8" fill="#e7e7c5" stroke="#e7e7c5" stroke-width="0.9" stroke-linejoin="round"/>
<polygon points="1430.4,399.3 1433.2,396.2 1433.9,390.9 1431.2,394.0" fill="#9a9c84" stroke="#9a9c84" stroke-width="0.9" stroke-linejoin="round"/>
<polygon points="1330.3,233.9 1344.1,225.4 1344.8,218.3 1331.0,226.7" fill="#9a9c84" stroke="#9a9c84" stroke-width="0.9" stroke-linejoin="round"/>
<polygon points="1431.2,394.0 1433.9,390.9 1431.1,390.5 1428.4,393.5" fill="#e7e7c5" stroke="#e7e7c5" stroke-width="0.9" stroke-linejoin="round"/>
<polygon points="1331.0,226.7 1344.8,218.3 1342.9,218.1 1329.0,226.5" fill="#e7e7c5" stroke="#e7e7c5" stroke-width="0.9" stroke-linejoin="round"/>
<polygon points="1183.1,383.9 1187.3,381.0 1187.5,375.2 1183.3,378.1" fill="#9a9c84" stroke="#9a9c84" stroke-width="0.9" stroke-linejoin="round"/>
<polygon points="1183.3,378.1 1187.5,375.2 1185.0,374.7 1180.9,377.6" fill="#e7e7c5" stroke="#e7e7c5" stroke-width="0.9" stroke-linejoin="round"/>
<polygon points="1237.5,273.9 1253.4,264.5 1253.9,257.6 1237.9,266.9" fill="#9a9c84" stroke="#9a9c84" stroke-width="0.9" stroke-linejoin="round"/>
<polygon points="1237.9,266.9 1253.9,257.6 1252.1,257.4 1236.1,266.7" fill="#e7e7c5" stroke="#e7e7c5" stroke-width="0.9" stroke-linejoin="round"/>
<polygon points="1439.5,351.1 1442.2,348.3 1443.0,342.8 1440.3,345.6" fill="#9a9c84" stroke="#9a9c84" stroke-width="0.9" stroke-linejoin="round"/>
<polygon points="1440.3,345.6 1443.0,342.8 1440.2,342.4 1437.4,345.2" fill="#e7e7c5" stroke="#e7e7c5" stroke-width="0.9" stroke-linejoin="round"/>
<polygon points="1367.3,260.5 1380.3,251.2 1381.5,240.6 1368.5,249.6" fill="#9a9c84" stroke="#9a9c84" stroke-width="0.9" stroke-linejoin="round"/>
<polygon points="1368.5,249.6 1381.5,240.6 1378.6,240.3 1365.5,249.3" fill="#e7e7c5" stroke="#e7e7c5" stroke-width="0.9" stroke-linejoin="round"/>
<polygon points="1188.9,335.8 1193.1,333.2 1193.3,327.2 1189.1,329.8" fill="#9a9c84" stroke="#9a9c84" stroke-width="0.9" stroke-linejoin="round"/>
<polygon points="1189.1,329.8 1193.3,327.2 1190.8,326.8 1186.6,329.4" fill="#e7e7c5" stroke="#e7e7c5" stroke-width="0.9" stroke-linejoin="round"/>
<polygon points="1427.6,402.5 1430.4,399.3 1431.2,394.0 1428.4,397.1" fill="#9a9c84" stroke="#9a9c84" stroke-width="0.9" stroke-linejoin="round"/>
<polygon points="1428.4,397.1 1431.2,394.0 1428.4,393.5 1425.6,396.7" fill="#e7e7c5" stroke="#e7e7c5" stroke-width="0.9" stroke-linejoin="round"/>
<polygon points="1178.9,386.8 1183.1,383.9 1183.3,378.1 1179.1,381.0" fill="#9a9c84" stroke="#9a9c84" stroke-width="0.9" stroke-linejoin="round"/>
<polygon points="1179.1,381.0 1183.3,378.1 1180.9,377.6 1176.7,380.5" fill="#e7e7c5" stroke="#e7e7c5" stroke-width="0.9" stroke-linejoin="round"/>
<polygon points="1404.4,284.1 1416.5,274.1 1417.5,266.3 1405.4,276.1" fill="#9a9c84" stroke="#9a9c84" stroke-width="0.9" stroke-linejoin="round"/>
<polygon points="1405.4,276.1 1417.5,266.3 1415.1,266.0 1402.9,275.8" fill="#e7e7c5" stroke="#e7e7c5" stroke-width="0.9" stroke-linejoin="round"/>
<polygon points="1436.8,354.0 1439.5,351.1 1440.3,345.6 1437.5,348.5" fill="#9a9c84" stroke="#9a9c84" stroke-width="0.9" stroke-linejoin="round"/>
<polygon points="1437.5,348.5 1440.3,345.6 1437.4,345.2 1434.7,348.1" fill="#e7e7c5" stroke="#e7e7c5" stroke-width="0.9" stroke-linejoin="round"/>
<polygon points="1442.1,309.4 1453.3,298.7 1454.4,291.0 1443.2,301.5" fill="#9a9c84" stroke="#9a9c84" stroke-width="0.9" stroke-linejoin="round"/>
<polygon points="1443.2,301.5 1454.4,291.0 1452.0,290.7 1440.7,301.2" fill="#e7e7c5" stroke="#e7e7c5" stroke-width="0.9" stroke-linejoin="round"/>
<polygon points="1184.7,338.5 1188.9,335.8 1189.1,329.8 1184.9,332.5" fill="#9a9c84" stroke="#9a9c84" stroke-width="0.9" stroke-linejoin="round"/>
<polygon points="1184.9,332.5 1189.1,329.8 1186.6,329.4 1182.4,332.1" fill="#e7e7c5" stroke="#e7e7c5" stroke-width="0.9" stroke-linejoin="round"/>
<polygon points="1424.8,405.7 1427.6,402.5 1428.4,397.1 1425.6,400.3" fill="#9a9c84" stroke="#9a9c84" stroke-width="0.9" stroke-linejoin="round"/>
<polygon points="1174.7,389.8 1178.9,386.8 1179.1,381.0 1174.9,383.9" fill="#9a9c84" stroke="#9a9c84" stroke-width="0.9" stroke-linejoin="round"/>
<polygon points="1425.6,400.3 1428.4,397.1 1425.6,396.7 1422.8,399.8" fill="#e7e7c5" stroke="#e7e7c5" stroke-width="0.9" stroke-linejoin="round"/>
<polygon points="1174.9,383.9 1179.1,381.0 1176.7,380.5 1172.4,383.5" fill="#e7e7c5" stroke="#e7e7c5" stroke-width="0.9" stroke-linejoin="round"/>
<polygon points="1183.7,298.5 1201.0,288.4 1201.3,281.6 1183.9,291.5" fill="#9a9c84" stroke="#9a9c84" stroke-width="0.9" stroke-linejoin="round"/>
<polygon points="1183.9,291.5 1201.3,281.6 1199.5,281.3 1182.1,291.2" fill="#e7e7c5" stroke="#e7e7c5" stroke-width="0.9" stroke-linejoin="round"/>
<polygon points="1275.8,258.8 1291.0,249.6 1291.6,242.5 1276.3,251.6" fill="#9a9c84" stroke="#9a9c84" stroke-width="0.9" stroke-linejoin="round"/>
<polygon points="1276.3,251.6 1291.6,242.5 1289.7,242.3 1274.4,251.4" fill="#e7e7c5" stroke="#e7e7c5" stroke-width="0.9" stroke-linejoin="round"/>
<polygon points="1434.0,357.0 1436.8,354.0 1437.5,348.5 1434.7,351.4" fill="#9a9c84" stroke="#9a9c84" stroke-width="0.9" stroke-linejoin="round"/>
<polygon points="1434.7,351.4 1437.5,348.5 1434.7,348.1 1431.9,351.0" fill="#e7e7c5" stroke="#e7e7c5" stroke-width="0.9" stroke-linejoin="round"/>
<polygon points="1180.5,341.2 1184.7,338.5 1184.9,332.5 1180.7,335.2" fill="#9a9c84" stroke="#9a9c84" stroke-width="0.9" stroke-linejoin="round"/>
<polygon points="1180.7,335.2 1184.9,332.5 1182.4,332.1 1178.1,334.8" fill="#e7e7c5" stroke="#e7e7c5" stroke-width="0.9" stroke-linejoin="round"/>
<polygon points="1170.4,392.8 1174.7,389.8 1174.9,383.9 1170.6,386.9" fill="#9a9c84" stroke="#9a9c84" stroke-width="0.9" stroke-linejoin="round"/>
<polygon points="1422.0,408.9 1424.8,405.7 1425.6,400.3 1422.7,403.5" fill="#9a9c84" stroke="#9a9c84" stroke-width="0.9" stroke-linejoin="round"/>
<polygon points="1170.6,386.9 1174.9,383.9 1172.4,383.5 1168.1,386.5" fill="#e7e7c5" stroke="#e7e7c5" stroke-width="0.9" stroke-linejoin="round"/>
<polygon points="1422.7,403.5 1425.6,400.3 1422.8,399.8 1419.9,403.0" fill="#e7e7c5" stroke="#e7e7c5" stroke-width="0.9" stroke-linejoin="round"/>
<polygon points="1431.1,359.9 1434.0,357.0 1434.7,351.4 1431.9,354.3" fill="#9a9c84" stroke="#9a9c84" stroke-width="0.9" stroke-linejoin="round"/>
<polygon points="1431.9,354.3 1434.7,351.4 1431.9,351.0 1429.0,353.9" fill="#e7e7c5" stroke="#e7e7c5" stroke-width="0.9" stroke-linejoin="round"/>
<polygon points="1176.1,344.0 1180.5,341.2 1180.7,335.2 1176.3,337.9" fill="#9a9c84" stroke="#9a9c84" stroke-width="0.9" stroke-linejoin="round"/>
<polygon points="1176.3,337.9 1180.7,335.2 1178.1,334.8 1173.8,337.5" fill="#e7e7c5" stroke="#e7e7c5" stroke-width="0.9" stroke-linejoin="round"/>
<polygon points="1166.1,395.9 1170.4,392.8 1170.6,386.9 1166.2,390.0" fill="#9a9c84" stroke="#9a9c84" stroke-width="0.9" stroke-linejoin="round"/>
<polygon points="1166.2,390.0 1170.6,386.9 1168.1,386.5 1163.7,389.5" fill="#e7e7c5" stroke="#e7e7c5" stroke-width="0.9" stroke-linejoin="round"/>
<polygon points="1419.1,412.2 1422.0,408.9 1422.7,403.5 1419.9,406.8" fill="#9a9c84" stroke="#9a9c84" stroke-width="0.9" stroke-linejoin="round"/>
<polygon points="1419.9,406.8 1422.7,403.5 1419.9,403.0 1417.0,406.3" fill="#e7e7c5" stroke="#e7e7c5" stroke-width="0.9" stroke-linejoin="round"/>
<polygon points="1315.7,243.0 1330.3,233.9 1331.0,226.7 1316.4,235.5" fill="#9a9c84" stroke="#9a9c84" stroke-width="0.9" stroke-linejoin="round"/>
<polygon points="1316.4,235.5 1331.0,226.7 1329.0,226.5 1314.4,235.3" fill="#e7e7c5" stroke="#e7e7c5" stroke-width="0.9" stroke-linejoin="round"/>
<polygon points="1220.8,283.8 1237.5,273.9 1237.9,266.9 1221.2,276.7" fill="#9a9c84" stroke="#9a9c84" stroke-width="0.9" stroke-linejoin="round"/>
<polygon points="1221.2,276.7 1237.9,266.9 1236.1,266.7 1219.3,276.4" fill="#e7e7c5" stroke="#e7e7c5" stroke-width="0.9" stroke-linejoin="round"/>
<polygon points="1428.3,362.9 1431.1,359.9 1431.9,354.3 1429.1,357.3" fill="#9a9c84" stroke="#9a9c84" stroke-width="0.9" stroke-linejoin="round"/>
<polygon points="1171.8,346.8 1176.1,344.0 1176.3,337.9 1172.0,340.7" fill="#9a9c84" stroke="#9a9c84" stroke-width="0.9" stroke-linejoin="round"/>
<polygon points="1172.0,340.7 1176.3,337.9 1173.8,337.5 1169.4,340.2" fill="#e7e7c5" stroke="#e7e7c5" stroke-width="0.9" stroke-linejoin="round"/>
<polygon points="1429.1,357.3 1431.9,354.3 1429.0,353.9 1426.1,356.9" fill="#e7e7c5" stroke="#e7e7c5" stroke-width="0.9" stroke-linejoin="round"/>
<polygon points="1161.7,399.0 1166.1,395.9 1166.2,390.0 1161.8,393.0" fill="#9a9c84" stroke="#9a9c84" stroke-width="0.9" stroke-linejoin="round"/>
<polygon points="1161.8,393.0 1166.2,390.0 1163.7,389.5 1159.3,392.6" fill="#e7e7c5" stroke="#e7e7c5" stroke-width="0.9" stroke-linejoin="round"/>
<polygon points="1353.7,270.3 1367.3,260.5 1368.5,249.6 1354.8,259.2" fill="#9a9c84" stroke="#9a9c84" stroke-width="0.9" stroke-linejoin="round"/>
<polygon points="1416.2,415.5 1419.1,412.2 1419.9,406.8 1416.9,410.0" fill="#9a9c84" stroke="#9a9c84" stroke-width="0.9" stroke-linejoin="round"/>
<polygon points="1354.8,259.2 1368.5,249.6 1365.5,249.3 1351.8,258.8" fill="#e7e7c5" stroke="#e7e7c5" stroke-width="0.9" stroke-linejoin="round"/>
<polygon points="1416.9,410.0 1419.9,406.8 1417.0,406.3 1414.1,409.5" fill="#e7e7c5" stroke="#e7e7c5" stroke-width="0.9" stroke-linejoin="round"/>
<polygon points="1391.7,294.6 1404.4,284.1 1405.4,276.1 1392.6,286.5" fill="#9a9c84" stroke="#9a9c84" stroke-width="0.9" stroke-linejoin="round"/>
<polygon points="1167.4,349.6 1171.8,346.8 1172.0,340.7 1167.5,343.5" fill="#9a9c84" stroke="#9a9c84" stroke-width="0.9" stroke-linejoin="round"/>
<polygon points="1392.6,286.5 1405.4,276.1 1402.9,275.8 1390.1,286.1" fill="#e7e7c5" stroke="#e7e7c5" stroke-width="0.9" stroke-linejoin="round"/>
<polygon points="1167.5,343.5 1172.0,340.7 1169.4,340.2 1165.0,343.0" fill="#e7e7c5" stroke="#e7e7c5" stroke-width="0.9" stroke-linejoin="round"/>
<polygon points="1425.4,366.0 1428.3,362.9 1429.1,357.3 1426.2,360.3" fill="#9a9c84" stroke="#9a9c84" stroke-width="0.9" stroke-linejoin="round"/>
<polygon points="1157.2,402.1 1161.7,399.0 1161.8,393.0 1157.4,396.1" fill="#9a9c84" stroke="#9a9c84" stroke-width="0.9" stroke-linejoin="round"/>
<polygon points="1426.2,360.3 1429.1,357.3 1426.1,356.9 1423.2,359.9" fill="#e7e7c5" stroke="#e7e7c5" stroke-width="0.9" stroke-linejoin="round"/>
<polygon points="1157.4,396.1 1161.8,393.0 1159.3,392.6 1154.8,395.7" fill="#e7e7c5" stroke="#e7e7c5" stroke-width="0.9" stroke-linejoin="round"/>
<polygon points="1430.3,320.7 1442.1,309.4 1443.2,301.5 1431.4,312.6" fill="#9a9c84" stroke="#9a9c84" stroke-width="0.9" stroke-linejoin="round"/>
<polygon points="1413.2,418.9 1416.2,415.5 1416.9,410.0 1414.0,413.4" fill="#9a9c84" stroke="#9a9c84" stroke-width="0.9" stroke-linejoin="round"/>
<polygon points="1431.4,312.6 1443.2,301.5 1440.7,301.2 1428.9,312.3" fill="#e7e7c5" stroke="#e7e7c5" stroke-width="0.9" stroke-linejoin="round"/>
<polygon points="1165.4,309.1 1183.7,298.5 1183.9,291.5 1165.6,301.9" fill="#9a9c84" stroke="#9a9c84" stroke-width="0.9" stroke-linejoin="round"/>
<polygon points="1414.0,413.4 1416.9,410.0 1414.1,409.5 1411.1,412.9" fill="#e7e7c5" stroke="#e7e7c5" stroke-width="0.9" stroke-linejoin="round"/>
<polygon points="1165.6,301.9 1183.9,291.5 1182.1,291.2 1163.8,301.7" fill="#e7e7c5" stroke="#e7e7c5" stroke-width="0.9" stroke-linejoin="round"/>
<polygon points="1259.7,268.5 1275.8,258.8 1276.3,251.6 1260.1,261.1" fill="#9a9c84" stroke="#9a9c84" stroke-width="0.9" stroke-linejoin="round"/>
<polygon points="1260.1,261.1 1276.3,251.6 1274.4,251.4 1258.2,260.9" fill="#e7e7c5" stroke="#e7e7c5" stroke-width="0.9" stroke-linejoin="round"/>
<polygon points="1162.9,352.5 1167.4,349.6 1167.5,343.5 1163.1,346.3" fill="#9a9c84" stroke="#9a9c84" stroke-width="0.9" stroke-linejoin="round"/>
<polygon points="1163.1,346.3 1167.5,343.5 1165.0,343.0 1160.5,345.9" fill="#e7e7c5" stroke="#e7e7c5" stroke-width="0.9" stroke-linejoin="round"/>
<polygon points="1152.7,405.3 1157.2,402.1 1157.4,396.1 1152.9,399.3" fill="#9a9c84" stroke="#9a9c84" stroke-width="0.9" stroke-linejoin="round"/>
<polygon points="1422.5,369.0 1425.4,366.0 1426.2,360.3 1423.2,363.4" fill="#9a9c84" stroke="#9a9c84" stroke-width="0.9" stroke-linejoin="round"/>
<polygon points="1152.9,399.3 1157.4,396.1 1154.8,395.7 1150.3,398.8" fill="#e7e7c5" stroke="#e7e7c5" stroke-width="0.9" stroke-linejoin="round"/>
<polygon points="1423.2,363.4 1426.2,360.3 1423.2,359.9 1420.3,362.9" fill="#e7e7c5" stroke="#e7e7c5" stroke-width="0.9" stroke-linejoin="round"/>
<polygon points="1410.2,422.3 1413.2,418.9 1414.0,413.4 1411.0,416.8" fill="#9a9c84" stroke="#9a9c84" stroke-width="0.9" stroke-linejoin="round"/>
<polygon points="1149.8,452.8 1150.0,439.8 1145.6,443.1 1145.3,456.2" fill="#7a5862" stroke="#7a5862" stroke-width="0.9" stroke-linejoin="round"/>
<polygon points="1411.0,416.8 1414.0,413.4 1411.1,412.9 1408.1,416.2" fill="#e7e7c5" stroke="#e7e7c5" stroke-width="0.9" stroke-linejoin="round"/>
<polygon points="1145.3,456.2 1145.6,443.1 1136.8,441.3 1136.5,454.4" fill="#83616a" stroke="#83616a" stroke-width="0.9" stroke-linejoin="round"/>
<polygon points="1158.4,355.4 1162.9,352.5 1163.1,346.3 1158.5,349.2" fill="#9a9c84" stroke="#9a9c84" stroke-width="0.9" stroke-linejoin="round"/>
<polygon points="1158.5,349.2 1163.1,346.3 1160.5,345.9 1155.9,348.7" fill="#e7e7c5" stroke="#e7e7c5" stroke-width="0.9" stroke-linejoin="round"/>
<polygon points="1148.2,408.5 1152.7,405.3 1152.9,399.3 1148.3,402.5" fill="#9a9c84" stroke="#9a9c84" stroke-width="0.9" stroke-linejoin="round"/>
<polygon points="1148.3,402.5 1152.9,399.3 1150.3,398.8 1145.7,402.0" fill="#e7e7c5" stroke="#e7e7c5" stroke-width="0.9" stroke-linejoin="round"/>
<polygon points="1150.0,439.8 1150.3,426.6 1145.8,429.9 1145.6,443.1" fill="#7a5862" stroke="#7a5862" stroke-width="0.9" stroke-linejoin="round"/>
<polygon points="1419.5,372.2 1422.5,369.0 1423.2,363.4 1420.2,366.4" fill="#9a9c84" stroke="#9a9c84" stroke-width="0.9" stroke-linejoin="round"/>
<polygon points="1420.2,366.4 1423.2,363.4 1420.3,362.9 1417.3,366.0" fill="#e7e7c5" stroke="#e7e7c5" stroke-width="0.9" stroke-linejoin="round"/>
<polygon points="1145.6,443.1 1145.8,429.9 1137.0,428.1 1136.8,441.3" fill="#83616a" stroke="#83616a" stroke-width="0.9" stroke-linejoin="round"/>
<polygon points="1407.2,425.7 1410.2,422.3 1411.0,416.8 1407.9,420.2" fill="#9a9c84" stroke="#9a9c84" stroke-width="0.9" stroke-linejoin="round"/>
<polygon points="1407.9,420.2 1411.0,416.8 1408.1,416.2 1405.0,419.7" fill="#e7e7c5" stroke="#e7e7c5" stroke-width="0.9" stroke-linejoin="round"/>
<line x1="1134.0" y1="446.7" x2="1145.7" y2="454.1" stroke="#6f5c58" stroke-width="2.4" stroke-linecap="round"/>
<polygon points="1150.3,426.6 1150.6,413.3 1146.1,416.5 1145.8,429.9" fill="#7a5862" stroke="#7a5862" stroke-width="0.9" stroke-linejoin="round"/>
<polygon points="1203.2,294.3 1220.8,283.8 1221.2,276.7 1203.5,287.0" fill="#9a9c84" stroke="#9a9c84" stroke-width="0.9" stroke-linejoin="round"/>
<polygon points="1300.4,252.5 1315.7,243.0 1316.4,235.5 1301.0,244.9" fill="#9a9c84" stroke="#9a9c84" stroke-width="0.9" stroke-linejoin="round"/>
<polygon points="1203.5,287.0 1221.2,276.7 1219.3,276.4 1201.6,286.7" fill="#e7e7c5" stroke="#e7e7c5" stroke-width="0.9" stroke-linejoin="round"/>
<polygon points="1301.0,244.9 1316.4,235.5 1314.4,235.3 1299.0,244.6" fill="#e7e7c5" stroke="#e7e7c5" stroke-width="0.9" stroke-linejoin="round"/>
<polygon points="1153.8,358.3 1158.4,355.4 1158.5,349.2 1153.9,352.1" fill="#9a9c84" stroke="#9a9c84" stroke-width="0.9" stroke-linejoin="round"/>
<polygon points="1145.8,429.9 1146.1,416.5 1137.2,414.8 1137.0,428.1" fill="#83616a" stroke="#83616a" stroke-width="0.9" stroke-linejoin="round"/>
<polygon points="1153.9,352.1 1158.5,349.2 1155.9,348.7 1151.3,351.6" fill="#e7e7c5" stroke="#e7e7c5" stroke-width="0.9" stroke-linejoin="round"/>
<polygon points="1416.5,375.3 1419.5,372.2 1420.2,366.4 1417.2,369.6" fill="#9a9c84" stroke="#9a9c84" stroke-width="0.9" stroke-linejoin="round"/>
<polygon points="1150.6,413.3 1150.9,399.8 1146.4,403.0 1146.1,416.5" fill="#7a5862" stroke="#7a5862" stroke-width="0.9" stroke-linejoin="round"/>
<polygon points="1417.2,369.6 1420.2,366.4 1417.3,366.0 1414.3,369.1" fill="#e7e7c5" stroke="#e7e7c5" stroke-width="0.9" stroke-linejoin="round"/>
<polygon points="1404.1,429.2 1407.2,425.7 1407.9,420.2 1404.9,423.6" fill="#9a9c84" stroke="#9a9c84" stroke-width="0.9" stroke-linejoin="round"/>
<polygon points="1146.1,416.5 1146.4,403.0 1137.4,401.3 1137.2,414.8" fill="#83616a" stroke="#83616a" stroke-width="0.9" stroke-linejoin="round"/>
<polygon points="1404.9,423.6 1407.9,420.2 1405.0,419.7 1401.9,423.1" fill="#e7e7c5" stroke="#e7e7c5" stroke-width="0.9" stroke-linejoin="round"/>
<polygon points="1140.6,413.9 1145.2,410.6 1145.4,404.5 1140.7,407.8" fill="#9a9c84" stroke="#9a9c84" stroke-width="0.9" stroke-linejoin="round"/>
<polygon points="1140.7,407.8 1145.4,404.5 1142.8,404.0 1138.1,407.3" fill="#e7e7c5" stroke="#e7e7c5" stroke-width="0.9" stroke-linejoin="round"/>
<polygon points="1339.3,280.7 1353.7,270.3 1354.8,259.2 1340.4,269.3" fill="#9a9c84" stroke="#9a9c84" stroke-width="0.9" stroke-linejoin="round"/>
<polygon points="1340.4,269.3 1354.8,259.2 1351.8,258.8 1337.3,268.9" fill="#e7e7c5" stroke="#e7e7c5" stroke-width="0.9" stroke-linejoin="round"/>
<polygon points="1150.9,399.8 1151.2,386.2 1146.6,389.3 1146.4,403.0" fill="#7a5862" stroke="#7a5862" stroke-width="0.9" stroke-linejoin="round"/>
<polygon points="1149.1,361.3 1153.8,358.3 1153.9,352.1 1149.2,355.0" fill="#9a9c84" stroke="#9a9c84" stroke-width="0.9" stroke-linejoin="round"/>
<polygon points="1149.2,355.0 1153.9,352.1 1151.3,351.6 1146.6,354.6" fill="#e7e7c5" stroke="#e7e7c5" stroke-width="0.9" stroke-linejoin="round"/>
<polygon points="1146.4,403.0 1146.6,389.3 1137.6,387.6 1137.4,401.3" fill="#83616a" stroke="#83616a" stroke-width="0.9" stroke-linejoin="round"/>
<polygon points="1413.4,378.5 1416.5,375.3 1417.2,369.6 1414.2,372.8" fill="#9a9c84" stroke="#9a9c84" stroke-width="0.9" stroke-linejoin="round"/>
<polygon points="1378.2,305.7 1391.7,294.6 1392.6,286.5 1379.2,297.4" fill="#9a9c84" stroke="#9a9c84" stroke-width="0.9" stroke-linejoin="round"/>
<polygon points="1414.2,372.8 1417.2,369.6 1414.3,369.1 1411.2,372.3" fill="#e7e7c5" stroke="#e7e7c5" stroke-width="0.9" stroke-linejoin="round"/>
<polygon points="1379.2,297.4 1392.6,286.5 1390.1,286.1 1376.6,297.0" fill="#e7e7c5" stroke="#e7e7c5" stroke-width="0.9" stroke-linejoin="round"/>
<polygon points="1151.2,386.2 1151.5,372.4 1146.9,375.4 1146.6,389.3" fill="#7a5862" stroke="#7a5862" stroke-width="0.9" stroke-linejoin="round"/>
<polygon points="1146.2,320.2 1165.4,309.1 1165.6,301.9 1146.4,313.0" fill="#9a9c84" stroke="#9a9c84" stroke-width="0.9" stroke-linejoin="round"/>
<polygon points="1401.0,432.8 1404.1,429.2 1404.9,423.6 1401.7,427.2" fill="#9a9c84" stroke="#9a9c84" stroke-width="0.9" stroke-linejoin="round"/>
<polygon points="1135.9,417.2 1140.6,413.9 1140.7,407.8 1136.0,411.1" fill="#9a9c84" stroke="#9a9c84" stroke-width="0.9" stroke-linejoin="round"/>
<polygon points="1146.4,313.0 1165.6,301.9 1163.8,301.7 1144.5,312.7" fill="#e7e7c5" stroke="#e7e7c5" stroke-width="0.9" stroke-linejoin="round"/>
<polygon points="1401.7,427.2 1404.9,423.6 1401.9,423.1 1398.8,426.6" fill="#e7e7c5" stroke="#e7e7c5" stroke-width="0.9" stroke-linejoin="round"/>
<polygon points="1136.0,411.1 1140.7,407.8 1138.1,407.3 1133.4,410.6" fill="#e7e7c5" stroke="#e7e7c5" stroke-width="0.9" stroke-linejoin="round"/>
<polygon points="1146.6,389.3 1146.9,375.4 1137.8,373.8 1137.6,387.6" fill="#83616a" stroke="#83616a" stroke-width="0.9" stroke-linejoin="round"/>
<polygon points="1417.9,332.7 1430.3,320.7 1431.4,312.6 1419.0,324.4" fill="#9a9c84" stroke="#9a9c84" stroke-width="0.9" stroke-linejoin="round"/>
<polygon points="1419.0,324.4 1431.4,312.6 1428.9,312.3 1416.4,324.0" fill="#e7e7c5" stroke="#e7e7c5" stroke-width="0.9" stroke-linejoin="round"/>
<polygon points="1151.5,372.4 1151.8,358.5 1147.2,361.4 1146.9,375.4" fill="#7a5862" stroke="#7a5862" stroke-width="0.9" stroke-linejoin="round"/>
<polygon points="1242.7,278.8 1259.7,268.5 1260.1,261.1 1243.1,271.2" fill="#9a9c84" stroke="#9a9c84" stroke-width="0.9" stroke-linejoin="round"/>
<polygon points="1243.1,271.2 1260.1,261.1 1258.2,260.9 1241.1,271.0" fill="#e7e7c5" stroke="#e7e7c5" stroke-width="0.9" stroke-linejoin="round"/>
<polygon points="1146.9,375.4 1147.2,361.4 1138.0,359.8 1137.8,373.8" fill="#83616a" stroke="#83616a" stroke-width="0.9" stroke-linejoin="round"/>
<polygon points="1410.3,381.8 1413.4,378.5 1414.2,372.8 1411.1,376.0" fill="#9a9c84" stroke="#9a9c84" stroke-width="0.9" stroke-linejoin="round"/>
<polygon points="1411.1,376.0 1414.2,372.8 1411.2,372.3 1408.1,375.5" fill="#e7e7c5" stroke="#e7e7c5" stroke-width="0.9" stroke-linejoin="round"/>
<polygon points="1151.8,358.5 1152.1,344.3 1147.5,347.2 1147.2,361.4" fill="#7a5862" stroke="#7a5862" stroke-width="0.9" stroke-linejoin="round"/>
<polygon points="1141.4,366.3 1146.2,363.2 1146.3,356.9 1141.5,359.9" fill="#9a9c84" stroke="#9a9c84" stroke-width="0.9" stroke-linejoin="round"/>
<polygon points="1131.1,420.6 1135.9,417.2 1136.0,411.1 1131.2,414.4" fill="#9a9c84" stroke="#9a9c84" stroke-width="0.9" stroke-linejoin="round"/>
<polygon points="1141.5,359.9 1146.3,356.9 1143.7,356.5 1138.9,359.5" fill="#e7e7c5" stroke="#e7e7c5" stroke-width="0.9" stroke-linejoin="round"/>
<polygon points="1131.2,414.4 1136.0,411.1 1133.4,410.6 1128.6,413.9" fill="#e7e7c5" stroke="#e7e7c5" stroke-width="0.9" stroke-linejoin="round"/>
<polygon points="1397.9,436.3 1401.0,432.8 1401.7,427.2 1398.6,430.7" fill="#9a9c84" stroke="#9a9c84" stroke-width="0.9" stroke-linejoin="round"/>
<polygon points="1398.6,430.7 1401.7,427.2 1398.8,426.6 1395.6,430.2" fill="#e7e7c5" stroke="#e7e7c5" stroke-width="0.9" stroke-linejoin="round"/>
<polygon points="1147.2,361.4 1147.5,347.2 1138.3,345.7 1138.0,359.8" fill="#83616a" stroke="#83616a" stroke-width="0.9" stroke-linejoin="round"/>
<line x1="1121.8" y1="438.9" x2="1134.0" y2="446.7" stroke="#6f5c58" stroke-width="2.4" stroke-linecap="round"/>
<polygon points="1152.1,344.3 1152.4,330.1 1147.7,332.9 1147.5,347.2" fill="#7a5862" stroke="#7a5862" stroke-width="0.9" stroke-linejoin="round"/>
<polygon points="1147.5,347.2 1147.7,332.9 1138.5,331.4 1138.3,345.7" fill="#83616a" stroke="#83616a" stroke-width="0.9" stroke-linejoin="round"/>
<polygon points="1407.2,385.1 1410.3,381.8 1411.1,376.0 1407.9,379.2" fill="#9a9c84" stroke="#9a9c84" stroke-width="0.9" stroke-linejoin="round"/>
<polygon points="1152.7,315.6 1148.0,318.3 1138.7,316.9 1143.5,314.2" fill="#8a6670" stroke="#8a6670" stroke-width="0.9" stroke-linejoin="round"/>
<polygon points="1152.4,330.1 1152.7,315.6 1148.0,318.3 1147.7,332.9" fill="#7a5862" stroke="#7a5862" stroke-width="0.9" stroke-linejoin="round"/>
<polygon points="1136.6,369.3 1141.4,366.3 1141.5,359.9 1136.7,363.0" fill="#9a9c84" stroke="#9a9c84" stroke-width="0.9" stroke-linejoin="round"/>
<polygon points="1126.2,424.0 1131.1,420.6 1131.2,414.4 1126.3,417.8" fill="#9a9c84" stroke="#9a9c84" stroke-width="0.9" stroke-linejoin="round"/>
<polygon points="1407.9,379.2 1411.1,376.0 1408.1,375.5 1404.9,378.7" fill="#e7e7c5" stroke="#e7e7c5" stroke-width="0.9" stroke-linejoin="round"/>
<polygon points="1136.7,363.0 1141.5,359.9 1138.9,359.5 1134.1,362.5" fill="#e7e7c5" stroke="#e7e7c5" stroke-width="0.9" stroke-linejoin="round"/>
<polygon points="1126.3,417.8 1131.2,414.4 1128.6,413.9 1123.7,417.3" fill="#e7e7c5" stroke="#e7e7c5" stroke-width="0.9" stroke-linejoin="round"/>
<polygon points="1394.7,440.0 1397.9,436.3 1398.6,430.7 1395.4,434.3" fill="#9a9c84" stroke="#9a9c84" stroke-width="0.9" stroke-linejoin="round"/>
<polygon points="1147.7,332.9 1148.0,318.3 1138.7,316.9 1138.5,331.4" fill="#83616a" stroke="#83616a" stroke-width="0.9" stroke-linejoin="round"/>
<polygon points="1395.4,434.3 1398.6,430.7 1395.6,430.2 1392.4,433.8" fill="#e7e7c5" stroke="#e7e7c5" stroke-width="0.9" stroke-linejoin="round"/>
<polygon points="1184.5,305.3 1203.2,294.3 1203.5,287.0 1184.8,297.8" fill="#9a9c84" stroke="#9a9c84" stroke-width="0.9" stroke-linejoin="round"/>
<polygon points="1184.8,297.8 1203.5,287.0 1201.6,286.7 1182.9,297.5" fill="#e7e7c5" stroke="#e7e7c5" stroke-width="0.9" stroke-linejoin="round"/>
<polygon points="1284.1,262.6 1300.4,252.5 1301.0,244.9 1284.7,254.8" fill="#9a9c84" stroke="#9a9c84" stroke-width="0.9" stroke-linejoin="round"/>
<polygon points="1284.7,254.8 1301.0,244.9 1299.0,244.6 1282.7,254.5" fill="#e7e7c5" stroke="#e7e7c5" stroke-width="0.9" stroke-linejoin="round"/>
<polygon points="1144.9,312.3 1173.4,301.0 1172.2,301.7 1143.6,313.0" fill="#a993c9" stroke="#a993c9" stroke-width="0.9" stroke-linejoin="round"/>
<polygon points="1121.3,427.5 1126.2,424.0 1126.3,417.8 1121.4,421.2" fill="#9a9c84" stroke="#9a9c84" stroke-width="0.9" stroke-linejoin="round"/>
<polygon points="1131.7,372.5 1136.6,369.3 1136.7,363.0 1131.8,366.1" fill="#9a9c84" stroke="#9a9c84" stroke-width="0.9" stroke-linejoin="round"/>
<polygon points="1404.0,388.4 1407.2,385.1 1407.9,379.2 1404.8,382.5" fill="#9a9c84" stroke="#9a9c84" stroke-width="0.9" stroke-linejoin="round"/>
<polygon points="1121.4,421.2 1126.3,417.8 1123.7,417.3 1118.8,420.7" fill="#e7e7c5" stroke="#e7e7c5" stroke-width="0.9" stroke-linejoin="round"/>
<polygon points="1131.8,366.1 1136.7,363.0 1134.1,362.5 1129.2,365.6" fill="#e7e7c5" stroke="#e7e7c5" stroke-width="0.9" stroke-linejoin="round"/>
<polygon points="1146.4,312.1 1184.1,317.8 1182.9,318.6 1145.2,312.8" fill="#a993c9" stroke="#a993c9" stroke-width="0.9" stroke-linejoin="round"/>
<polygon points="1145.2,312.8 1182.9,318.6 1182.6,326.2 1145.1,320.4" fill="#7b6692" stroke="#7b6692" stroke-width="0.9" stroke-linejoin="round"/>
<polygon points="1143.6,313.0 1172.2,301.7 1175.2,309.1 1146.6,320.2" fill="#7b6692" stroke="#7b6692" stroke-width="0.9" stroke-linejoin="round"/>
<polygon points="1404.8,382.5 1407.9,379.2 1404.9,378.7 1401.7,382.0" fill="#e7e7c5" stroke="#e7e7c5" stroke-width="0.9" stroke-linejoin="round"/>
<line x1="1148.4" y1="316.7" x2="1135.5" y2="342.3" stroke="#c9a9a3" stroke-width="2.2" stroke-linecap="round"/>
<polygon points="1391.4,443.7 1394.7,440.0 1395.4,434.3 1392.1,438.0" fill="#9a9c84" stroke="#9a9c84" stroke-width="0.9" stroke-linejoin="round"/>
<polygon points="1392.1,438.0 1395.4,434.3 1392.4,433.8 1389.1,437.4" fill="#e7e7c5" stroke="#e7e7c5" stroke-width="0.9" stroke-linejoin="round"/>
<polygon points="1324.0,291.6 1339.3,280.7 1340.4,269.3 1325.1,280.0" fill="#9a9c84" stroke="#9a9c84" stroke-width="0.9" stroke-linejoin="round"/>
<polygon points="1325.1,280.0 1340.4,269.3 1337.3,268.9 1321.9,279.6" fill="#e7e7c5" stroke="#e7e7c5" stroke-width="0.9" stroke-linejoin="round"/>
<polygon points="1116.4,431.0 1121.3,427.5 1121.4,421.2 1116.4,424.7" fill="#9a9c84" stroke="#9a9c84" stroke-width="0.9" stroke-linejoin="round"/>
<polygon points="1126.8,375.6 1131.7,372.5 1131.8,366.1 1126.9,369.2" fill="#9a9c84" stroke="#9a9c84" stroke-width="0.9" stroke-linejoin="round"/>
<polygon points="1116.4,424.7 1121.4,421.2 1118.8,420.7 1113.8,424.2" fill="#e7e7c5" stroke="#e7e7c5" stroke-width="0.9" stroke-linejoin="round"/>
<polygon points="1126.9,369.2 1131.8,366.1 1129.2,365.6 1124.2,368.7" fill="#e7e7c5" stroke="#e7e7c5" stroke-width="0.9" stroke-linejoin="round"/>
<polygon points="1400.8,391.8 1404.0,388.4 1404.8,382.5 1401.5,385.9" fill="#9a9c84" stroke="#9a9c84" stroke-width="0.9" stroke-linejoin="round"/>
<polygon points="1125.9,332.0 1146.2,320.2 1146.4,313.0 1126.0,324.6" fill="#9a9c84" stroke="#9a9c84" stroke-width="0.9" stroke-linejoin="round"/>
<polygon points="1401.5,385.9 1404.8,382.5 1401.7,382.0 1398.5,385.4" fill="#e7e7c5" stroke="#e7e7c5" stroke-width="0.9" stroke-linejoin="round"/>
<polygon points="1126.0,324.6 1146.4,313.0 1144.5,312.7 1124.1,324.3" fill="#e7e7c5" stroke="#e7e7c5" stroke-width="0.9" stroke-linejoin="round"/>
<polygon points="1364.0,317.4 1378.2,305.7 1379.2,297.4 1364.9,308.9" fill="#9a9c84" stroke="#9a9c84" stroke-width="0.9" stroke-linejoin="round"/>
<polygon points="1388.1,447.4 1391.4,443.7 1392.1,438.0 1388.8,441.7" fill="#9a9c84" stroke="#9a9c84" stroke-width="0.9" stroke-linejoin="round"/>
<polygon points="1364.9,308.9 1379.2,297.4 1376.6,297.0 1362.3,308.6" fill="#e7e7c5" stroke="#e7e7c5" stroke-width="0.9" stroke-linejoin="round"/>
<polygon points="1388.8,441.7 1392.1,438.0 1389.1,437.4 1385.8,441.1" fill="#e7e7c5" stroke="#e7e7c5" stroke-width="0.9" stroke-linejoin="round"/>
<line x1="1108.9" y1="430.8" x2="1121.8" y2="438.9" stroke="#6f5c58" stroke-width="2.4" stroke-linecap="round"/>
<polygon points="1202.0,319.4 1200.2,320.5 1197.3,323.1 1199.1,321.9" fill="#d0d0e6" stroke="#d0d0e6" stroke-width="0.9" stroke-linejoin="round"/>
<polygon points="1404.7,345.3 1417.9,332.7 1419.0,324.4 1405.8,336.8" fill="#9a9c84" stroke="#9a9c84" stroke-width="0.9" stroke-linejoin="round"/>
<polygon points="1189.3,303.2 1202.0,319.4 1200.2,320.5 1187.5,304.2" fill="#eceef8" stroke="#eceef8" stroke-width="0.9" stroke-linejoin="round"/>
<polygon points="1405.8,336.8 1419.0,324.4 1416.4,324.0 1403.1,336.4" fill="#e7e7c5" stroke="#e7e7c5" stroke-width="0.9" stroke-linejoin="round"/>
<polygon points="1187.5,304.2 1200.2,320.5 1197.3,323.1 1184.6,306.8" fill="#c2c3dc" stroke="#c2c3dc" stroke-width="0.9" stroke-linejoin="round"/>
<polygon points="1173.4,301.0 1203.0,289.3 1201.8,290.0 1172.2,301.7" fill="#a993c9" stroke="#a993c9" stroke-width="0.9" stroke-linejoin="round"/>
<polygon points="1184.1,317.8 1222.9,323.7 1221.8,324.5 1182.9,318.6" fill="#a993c9" stroke="#a993c9" stroke-width="0.9" stroke-linejoin="round"/>
<polygon points="1182.9,318.6 1221.8,324.5 1221.4,332.3 1182.6,326.2" fill="#7b6692" stroke="#7b6692" stroke-width="0.9" stroke-linejoin="round"/>
<polygon points="1111.3,434.5 1116.4,431.0 1116.4,424.7 1111.3,428.2" fill="#9a9c84" stroke="#9a9c84" stroke-width="0.9" stroke-linejoin="round"/>
<polygon points="1224.7,289.7 1242.7,278.8 1243.1,271.2 1225.1,281.9" fill="#9a9c84" stroke="#9a9c84" stroke-width="0.9" stroke-linejoin="round"/>
<polygon points="1121.8,378.8 1126.8,375.6 1126.9,369.2 1121.8,372.4" fill="#9a9c84" stroke="#9a9c84" stroke-width="0.9" stroke-linejoin="round"/>
<polygon points="1172.2,301.7 1201.8,290.0 1204.8,297.5 1175.2,309.1" fill="#7b6692" stroke="#7b6692" stroke-width="0.9" stroke-linejoin="round"/>
<polygon points="1225.1,281.9 1243.1,271.2 1241.1,271.0 1223.1,281.7" fill="#e7e7c5" stroke="#e7e7c5" stroke-width="0.9" stroke-linejoin="round"/>
<polygon points="1111.3,428.2 1116.4,424.7 1113.8,424.2 1108.7,427.7" fill="#e7e7c5" stroke="#e7e7c5" stroke-width="0.9" stroke-linejoin="round"/>
<polygon points="1121.8,372.4 1126.9,369.2 1124.2,368.7 1119.2,371.9" fill="#e7e7c5" stroke="#e7e7c5" stroke-width="0.9" stroke-linejoin="round"/>
<line x1="1135.5" y1="342.3" x2="1122.4" y2="368.4" stroke="#c9a9a3" stroke-width="2.2" stroke-linecap="round"/>
<polygon points="1397.5,395.2 1400.8,391.8 1401.5,385.9 1398.3,389.3" fill="#9a9c84" stroke="#9a9c84" stroke-width="0.9" stroke-linejoin="round"/>
<polygon points="1398.3,389.3 1401.5,385.9 1398.5,385.4 1395.2,388.8" fill="#e7e7c5" stroke="#e7e7c5" stroke-width="0.9" stroke-linejoin="round"/>
<polygon points="1384.8,451.2 1388.1,447.4 1388.8,441.7 1385.5,445.5" fill="#9a9c84" stroke="#9a9c84" stroke-width="0.9" stroke-linejoin="round"/>
<polygon points="1385.5,445.5 1388.8,441.7 1385.8,441.1 1382.5,444.9" fill="#e7e7c5" stroke="#e7e7c5" stroke-width="0.9" stroke-linejoin="round"/>
<polygon points="1379.3,500.9 1381.0,486.9 1377.7,490.9 1376.0,504.9" fill="#7a5862" stroke="#7a5862" stroke-width="0.9" stroke-linejoin="round"/>
<polygon points="1106.2,438.1 1111.3,434.5 1111.3,428.2 1106.2,431.8" fill="#9a9c84" stroke="#9a9c84" stroke-width="0.9" stroke-linejoin="round"/>
<polygon points="1222.9,291.2 1205.5,322.9 1207.3,321.8 1224.7,290.2" fill="#b9bad2" stroke="#b9bad2" stroke-width="0.9" stroke-linejoin="round"/>
<polygon points="1106.2,431.8 1111.3,428.2 1108.7,427.7 1103.6,431.3" fill="#e7e7c5" stroke="#e7e7c5" stroke-width="0.9" stroke-linejoin="round"/>
<polygon points="1116.7,382.1 1121.8,378.8 1121.8,372.4 1116.7,375.6" fill="#9a9c84" stroke="#9a9c84" stroke-width="0.9" stroke-linejoin="round"/>
<polygon points="1116.7,375.6 1121.8,372.4 1119.2,371.9 1114.1,375.1" fill="#e7e7c5" stroke="#e7e7c5" stroke-width="0.9" stroke-linejoin="round"/>
<polygon points="1219.4,288.8 1202.1,320.5 1205.5,322.9 1222.9,291.2" fill="#c2c3dc" stroke="#c2c3dc" stroke-width="0.9" stroke-linejoin="round"/>
<polygon points="1376.0,504.9 1377.7,490.9 1367.1,488.7 1365.4,502.7" fill="#83616a" stroke="#83616a" stroke-width="0.9" stroke-linejoin="round"/>
<polygon points="1394.2,398.7 1397.5,395.2 1398.3,389.3 1394.9,392.7" fill="#9a9c84" stroke="#9a9c84" stroke-width="0.9" stroke-linejoin="round"/>
<polygon points="1394.9,392.7 1398.3,389.3 1395.2,388.8 1391.8,392.2" fill="#e7e7c5" stroke="#e7e7c5" stroke-width="0.9" stroke-linejoin="round"/>
<polygon points="1381.4,455.0 1384.8,451.2 1385.5,445.5 1382.1,449.3" fill="#9a9c84" stroke="#9a9c84" stroke-width="0.9" stroke-linejoin="round"/>
<polygon points="1381.0,486.9 1382.7,472.8 1379.4,476.7 1377.7,490.9" fill="#7a5862" stroke="#7a5862" stroke-width="0.9" stroke-linejoin="round"/>
<polygon points="1382.1,449.3 1385.5,445.5 1382.5,444.9 1379.1,448.7" fill="#e7e7c5" stroke="#e7e7c5" stroke-width="0.9" stroke-linejoin="round"/>
<polygon points="1222.9,323.7 1262.9,329.8 1261.9,330.6 1221.8,324.5" fill="#a993c9" stroke="#a993c9" stroke-width="0.9" stroke-linejoin="round"/>
<polygon points="1221.8,324.5 1261.9,330.6 1261.3,338.5 1221.4,332.3" fill="#7b6692" stroke="#7b6692" stroke-width="0.9" stroke-linejoin="round"/>
<polygon points="1203.0,289.3 1233.7,277.2 1232.6,277.9 1201.8,290.0" fill="#a993c9" stroke="#a993c9" stroke-width="0.9" stroke-linejoin="round"/>
<polygon points="1221.2,287.8 1219.4,288.8 1222.9,291.2 1224.7,290.2" fill="#d0d0e6" stroke="#d0d0e6" stroke-width="0.9" stroke-linejoin="round"/>
<polygon points="1164.8,317.0 1184.5,305.3 1184.8,297.8 1165.0,309.3" fill="#9a9c84" stroke="#9a9c84" stroke-width="0.9" stroke-linejoin="round"/>
<polygon points="1201.8,290.0 1232.6,277.9 1235.6,285.6 1204.8,297.5" fill="#7b6692" stroke="#7b6692" stroke-width="0.9" stroke-linejoin="round"/>
<polygon points="1101.0,441.8 1106.2,438.1 1106.2,431.8 1101.0,435.4" fill="#9a9c84" stroke="#9a9c84" stroke-width="0.9" stroke-linejoin="round"/>
<polygon points="1165.0,309.3 1184.8,297.8 1182.9,297.5 1163.1,309.0" fill="#e7e7c5" stroke="#e7e7c5" stroke-width="0.9" stroke-linejoin="round"/>
<polygon points="1377.7,490.9 1379.4,476.7 1368.8,474.6 1367.1,488.7" fill="#83616a" stroke="#83616a" stroke-width="0.9" stroke-linejoin="round"/>
<polygon points="1101.0,435.4 1106.2,431.8 1103.6,431.3 1098.4,434.9" fill="#e7e7c5" stroke="#e7e7c5" stroke-width="0.9" stroke-linejoin="round"/>
<line x1="1122.4" y1="368.4" x2="1109.0" y2="395.0" stroke="#c9a9a3" stroke-width="2.2" stroke-linecap="round"/>
<polygon points="1111.6,385.4 1116.7,382.1 1116.7,375.6 1111.6,378.8" fill="#9a9c84" stroke="#9a9c84" stroke-width="0.9" stroke-linejoin="round"/>
<polygon points="1111.6,378.8 1116.7,375.6 1114.1,375.1 1108.9,378.3" fill="#e7e7c5" stroke="#e7e7c5" stroke-width="0.9" stroke-linejoin="round"/>
<polygon points="1266.9,273.2 1284.1,262.6 1284.7,254.8 1267.5,265.2" fill="#9a9c84" stroke="#9a9c84" stroke-width="0.9" stroke-linejoin="round"/>
<polygon points="1382.7,472.8 1384.5,458.5 1381.2,462.3 1379.4,476.7" fill="#7a5862" stroke="#7a5862" stroke-width="0.9" stroke-linejoin="round"/>
<polygon points="1229.6,287.4 1245.6,308.0 1243.9,309.1 1227.9,288.5" fill="#eceef8" stroke="#eceef8" stroke-width="0.9" stroke-linejoin="round"/>
<polygon points="1267.5,265.2 1284.7,254.8 1282.7,254.5 1265.4,265.0" fill="#e7e7c5" stroke="#e7e7c5" stroke-width="0.9" stroke-linejoin="round"/>
<polygon points="1261.5,328.5 1259.9,329.6 1256.8,332.2 1258.4,331.0" fill="#d0d0e6" stroke="#d0d0e6" stroke-width="0.9" stroke-linejoin="round"/>
<polygon points="1227.9,288.5 1243.9,309.1 1240.8,311.7 1224.9,291.2" fill="#c2c3dc" stroke="#c2c3dc" stroke-width="0.9" stroke-linejoin="round"/>
<polygon points="1390.8,402.2 1394.2,398.7 1394.9,392.7 1391.6,396.2" fill="#9a9c84" stroke="#9a9c84" stroke-width="0.9" stroke-linejoin="round"/>
<polygon points="1245.6,308.0 1261.5,328.5 1259.9,329.6 1243.9,309.1" fill="#eceef8" stroke="#eceef8" stroke-width="0.9" stroke-linejoin="round"/>
<polygon points="1391.6,396.2 1394.9,392.7 1391.8,392.2 1388.5,395.7" fill="#e7e7c5" stroke="#e7e7c5" stroke-width="0.9" stroke-linejoin="round"/>
<polygon points="1243.9,309.1 1259.9,329.6 1256.8,332.2 1240.8,311.7" fill="#c2c3dc" stroke="#c2c3dc" stroke-width="0.9" stroke-linejoin="round"/>
<polygon points="1379.4,476.7 1381.2,462.3 1370.4,460.2 1368.8,474.6" fill="#83616a" stroke="#83616a" stroke-width="0.9" stroke-linejoin="round"/>
<polygon points="1384.5,458.5 1386.3,444.0 1382.9,447.8 1381.2,462.3" fill="#7a5862" stroke="#7a5862" stroke-width="0.9" stroke-linejoin="round"/>
<polygon points="1095.8,445.5 1101.0,441.8 1101.0,435.4 1095.8,439.1" fill="#9a9c84" stroke="#9a9c84" stroke-width="0.9" stroke-linejoin="round"/>
<polygon points="1095.8,439.1 1101.0,435.4 1098.4,434.9 1093.1,438.5" fill="#e7e7c5" stroke="#e7e7c5" stroke-width="0.9" stroke-linejoin="round"/>
<polygon points="1106.3,388.7 1111.6,385.4 1111.6,378.8 1106.4,382.1" fill="#9a9c84" stroke="#9a9c84" stroke-width="0.9" stroke-linejoin="round"/>
<line x1="1095.4" y1="422.2" x2="1108.9" y2="430.8" stroke="#6f5c58" stroke-width="2.4" stroke-linecap="round"/>
<polygon points="1267.2,301.7 1265.3,329.2 1263.7,330.3 1265.5,302.8" fill="#eceef8" stroke="#eceef8" stroke-width="0.9" stroke-linejoin="round"/>
<polygon points="1106.4,382.1 1111.6,378.8 1108.9,378.3 1103.7,381.6" fill="#e7e7c5" stroke="#e7e7c5" stroke-width="0.9" stroke-linejoin="round"/>
<polygon points="1307.9,303.2 1324.0,291.6 1325.1,280.0 1308.9,291.3" fill="#9a9c84" stroke="#9a9c84" stroke-width="0.9" stroke-linejoin="round"/>
<polygon points="1265.5,302.8 1263.7,330.3 1259.6,329.7 1261.4,302.2" fill="#c2c3dc" stroke="#c2c3dc" stroke-width="0.9" stroke-linejoin="round"/>
<polygon points="1375.8,461.4 1379.3,457.5 1380.0,451.7 1376.5,455.6" fill="#9a9c84" stroke="#9a9c84" stroke-width="0.9" stroke-linejoin="round"/>
<polygon points="1266.1,333.6 1284.8,318.1 1286.4,317.0 1267.7,332.4" fill="#b9bad2" stroke="#b9bad2" stroke-width="0.9" stroke-linejoin="round"/>
<polygon points="1381.2,462.3 1382.9,447.8 1372.1,445.7 1370.4,460.2" fill="#83616a" stroke="#83616a" stroke-width="0.9" stroke-linejoin="round"/>
<polygon points="1308.9,291.3 1325.1,280.0 1321.9,279.6 1305.7,290.8" fill="#e7e7c5" stroke="#e7e7c5" stroke-width="0.9" stroke-linejoin="round"/>
<polygon points="1262.9,329.8 1304.3,336.1 1303.3,336.9 1261.9,330.6" fill="#a993c9" stroke="#a993c9" stroke-width="0.9" stroke-linejoin="round"/>
<polygon points="1261.9,330.6 1303.3,336.9 1302.6,344.9 1261.3,338.5" fill="#7b6692" stroke="#7b6692" stroke-width="0.9" stroke-linejoin="round"/>
<polygon points="1376.5,455.6 1380.0,451.7 1376.9,451.1 1373.4,455.0" fill="#e7e7c5" stroke="#e7e7c5" stroke-width="0.9" stroke-linejoin="round"/>
<polygon points="1104.5,344.5 1125.9,332.0 1126.0,324.6 1104.5,336.9" fill="#9a9c84" stroke="#9a9c84" stroke-width="0.9" stroke-linejoin="round"/>
<polygon points="1104.5,336.9 1126.0,324.6 1124.1,324.3 1102.5,336.6" fill="#e7e7c5" stroke="#e7e7c5" stroke-width="0.9" stroke-linejoin="round"/>
<polygon points="1263.4,330.2 1282.1,314.6 1284.8,318.1 1266.1,333.6" fill="#c2c3dc" stroke="#c2c3dc" stroke-width="0.9" stroke-linejoin="round"/>
<polygon points="1387.4,405.8 1390.8,402.2 1391.6,396.2 1388.2,399.8" fill="#9a9c84" stroke="#9a9c84" stroke-width="0.9" stroke-linejoin="round"/>
<polygon points="1386.3,444.0 1388.1,429.3 1384.7,433.0 1382.9,447.8" fill="#7a5862" stroke="#7a5862" stroke-width="0.9" stroke-linejoin="round"/>
<polygon points="1233.7,277.2 1265.5,264.6 1264.4,265.3 1232.6,277.9" fill="#a993c9" stroke="#a993c9" stroke-width="0.9" stroke-linejoin="round"/>
<polygon points="1388.2,399.8 1391.6,396.2 1388.5,395.7 1385.0,399.2" fill="#e7e7c5" stroke="#e7e7c5" stroke-width="0.9" stroke-linejoin="round"/>
<polygon points="1232.6,277.9 1264.4,265.3 1267.4,273.2 1235.6,285.6" fill="#7b6692" stroke="#7b6692" stroke-width="0.9" stroke-linejoin="round"/>
<line x1="1109.0" y1="395.0" x2="1095.4" y2="422.2" stroke="#c9a9a3" stroke-width="2.2" stroke-linecap="round"/>
<polygon points="1348.9,329.9 1364.0,317.4 1364.9,308.9 1349.8,321.2" fill="#9a9c84" stroke="#9a9c84" stroke-width="0.9" stroke-linejoin="round"/>
<polygon points="1090.5,449.2 1095.8,445.5 1095.8,439.1 1090.4,442.8" fill="#9a9c84" stroke="#9a9c84" stroke-width="0.9" stroke-linejoin="round"/>
<polygon points="1269.1,273.6 1267.2,301.7 1265.5,302.8 1267.4,274.7" fill="#eceef8" stroke="#eceef8" stroke-width="0.9" stroke-linejoin="round"/>
<polygon points="1382.9,447.8 1384.7,433.0 1373.9,431.0 1372.1,445.7" fill="#83616a" stroke="#83616a" stroke-width="0.9" stroke-linejoin="round"/>
<polygon points="1090.4,442.8 1095.8,439.1 1093.1,438.5 1087.7,442.2" fill="#e7e7c5" stroke="#e7e7c5" stroke-width="0.9" stroke-linejoin="round"/>
<polygon points="1349.8,321.2 1364.9,308.9 1362.3,308.6 1347.2,320.8" fill="#e7e7c5" stroke="#e7e7c5" stroke-width="0.9" stroke-linejoin="round"/>
<polygon points="1101.1,392.1 1106.3,388.7 1106.4,382.1 1101.1,385.5" fill="#9a9c84" stroke="#9a9c84" stroke-width="0.9" stroke-linejoin="round"/>
<polygon points="1267.4,274.7 1265.5,302.8 1261.4,302.2 1263.2,274.1" fill="#c2c3dc" stroke="#c2c3dc" stroke-width="0.9" stroke-linejoin="round"/>
<polygon points="1101.1,385.5 1106.4,382.1 1103.7,381.6 1098.3,385.0" fill="#e7e7c5" stroke="#e7e7c5" stroke-width="0.9" stroke-linejoin="round"/>
<polygon points="1388.1,429.3 1389.9,414.5 1386.6,418.1 1384.7,433.0" fill="#7a5862" stroke="#7a5862" stroke-width="0.9" stroke-linejoin="round"/>
<polygon points="1269.1,273.6 1267.4,274.7 1263.2,274.1 1264.9,273.1" fill="#d0d0e6" stroke="#d0d0e6" stroke-width="0.9" stroke-linejoin="round"/>
<polygon points="1372.3,465.4 1375.8,461.4 1376.5,455.6 1373.0,459.6" fill="#9a9c84" stroke="#9a9c84" stroke-width="0.9" stroke-linejoin="round"/>
<polygon points="1265.5,264.6 1264.4,265.3 1267.4,273.2 1268.5,272.5" fill="#8c77a6" stroke="#8c77a6" stroke-width="0.9" stroke-linejoin="round"/>
<polygon points="1205.7,301.2 1224.7,289.7 1225.1,281.9 1206.0,293.2" fill="#9a9c84" stroke="#9a9c84" stroke-width="0.9" stroke-linejoin="round"/>
<polygon points="1390.8,358.7 1404.7,345.3 1405.8,336.8 1391.8,350.0" fill="#9a9c84" stroke="#9a9c84" stroke-width="0.9" stroke-linejoin="round"/>
<polygon points="1373.0,459.6 1376.5,455.6 1373.4,455.0 1369.9,459.0" fill="#e7e7c5" stroke="#e7e7c5" stroke-width="0.9" stroke-linejoin="round"/>
<polygon points="1206.0,293.2 1225.1,281.9 1223.1,281.7 1204.0,293.0" fill="#e7e7c5" stroke="#e7e7c5" stroke-width="0.9" stroke-linejoin="round"/>
<polygon points="1284.8,318.1 1304.0,302.2 1305.6,301.1 1286.4,317.0" fill="#b9bad2" stroke="#b9bad2" stroke-width="0.9" stroke-linejoin="round"/>
<polygon points="1391.8,350.0 1405.8,336.8 1403.1,336.4 1389.1,349.6" fill="#e7e7c5" stroke="#e7e7c5" stroke-width="0.9" stroke-linejoin="round"/>
<polygon points="1384.7,433.0 1386.6,418.1 1375.6,416.1 1373.9,431.0" fill="#83616a" stroke="#83616a" stroke-width="0.9" stroke-linejoin="round"/>
<polygon points="1282.1,314.6 1301.3,298.6 1304.0,302.2 1284.8,318.1" fill="#c2c3dc" stroke="#c2c3dc" stroke-width="0.9" stroke-linejoin="round"/>
<polygon points="1389.9,414.5 1391.8,399.4 1388.4,403.0 1386.6,418.1" fill="#7a5862" stroke="#7a5862" stroke-width="0.9" stroke-linejoin="round"/>
<polygon points="1304.3,336.1 1347.0,342.6 1346.0,343.4 1303.3,336.9" fill="#a993c9" stroke="#a993c9" stroke-width="0.9" stroke-linejoin="round"/>
<polygon points="1303.3,336.9 1346.0,343.4 1345.2,351.5 1302.6,344.9" fill="#7b6692" stroke="#7b6692" stroke-width="0.9" stroke-linejoin="round"/>
<polygon points="1085.1,453.0 1090.5,449.2 1090.4,442.8 1085.0,446.6" fill="#9a9c84" stroke="#9a9c84" stroke-width="0.9" stroke-linejoin="round"/>
<polygon points="1267.9,265.7 1298.5,286.7 1294.3,293.6 1264.0,272.7" fill="#7b6692" stroke="#7b6692" stroke-width="0.9" stroke-linejoin="round"/>
<polygon points="1269.0,265.1 1299.5,286.0 1298.5,286.7 1267.9,265.7" fill="#a993c9" stroke="#a993c9" stroke-width="0.9" stroke-linejoin="round"/>
<polygon points="1085.0,446.6 1090.4,442.8 1087.7,442.2 1082.3,446.0" fill="#e7e7c5" stroke="#e7e7c5" stroke-width="0.9" stroke-linejoin="round"/>
<polygon points="1095.7,395.6 1101.1,392.1 1101.1,385.5 1095.7,388.9" fill="#9a9c84" stroke="#9a9c84" stroke-width="0.9" stroke-linejoin="round"/>
<polygon points="1302.9,297.5 1301.3,298.6 1304.0,302.2 1305.6,301.1" fill="#d0d0e6" stroke="#d0d0e6" stroke-width="0.9" stroke-linejoin="round"/>
<polygon points="1095.7,388.9 1101.1,385.5 1098.3,385.0 1092.9,388.4" fill="#e7e7c5" stroke="#e7e7c5" stroke-width="0.9" stroke-linejoin="round"/>
<polygon points="1311.7,300.2 1325.6,337.8 1324.1,339.1 1310.1,301.4" fill="#eceef8" stroke="#eceef8" stroke-width="0.9" stroke-linejoin="round"/>
<polygon points="1386.6,418.1 1388.4,403.0 1377.4,401.1 1375.6,416.1" fill="#83616a" stroke="#83616a" stroke-width="0.9" stroke-linejoin="round"/>
<polygon points="1310.1,301.4 1324.1,339.1 1320.1,340.4 1306.1,302.8" fill="#c2c3dc" stroke="#c2c3dc" stroke-width="0.9" stroke-linejoin="round"/>
<polygon points="1311.7,300.2 1310.1,301.4 1306.1,302.8 1307.7,301.7" fill="#d0d0e6" stroke="#d0d0e6" stroke-width="0.9" stroke-linejoin="round"/>
<polygon points="1381.8,411.7 1385.3,408.1 1386.0,402.0 1382.5,405.7" fill="#9a9c84" stroke="#9a9c84" stroke-width="0.9" stroke-linejoin="round"/>
<polygon points="1391.8,399.4 1393.7,384.2 1390.3,387.6 1388.4,403.0" fill="#7a5862" stroke="#7a5862" stroke-width="0.9" stroke-linejoin="round"/>
<polygon points="1327.7,338.5 1343.9,325.7 1342.4,326.9 1326.2,339.7" fill="#eceef8" stroke="#eceef8" stroke-width="0.9" stroke-linejoin="round"/>
<polygon points="1368.7,469.5 1372.3,465.4 1373.0,459.6 1369.4,463.6" fill="#9a9c84" stroke="#9a9c84" stroke-width="0.9" stroke-linejoin="round"/>
<polygon points="1382.5,405.7 1386.0,402.0 1382.8,401.5 1379.3,405.1" fill="#e7e7c5" stroke="#e7e7c5" stroke-width="0.9" stroke-linejoin="round"/>
<polygon points="1369.4,463.6 1373.0,459.6 1369.9,459.0 1366.3,463.0" fill="#e7e7c5" stroke="#e7e7c5" stroke-width="0.9" stroke-linejoin="round"/>
<polygon points="1298.5,286.7 1329.3,307.8 1325.0,314.7 1294.3,293.6" fill="#7b6692" stroke="#7b6692" stroke-width="0.9" stroke-linejoin="round"/>
<polygon points="1326.2,339.7 1342.4,326.9 1345.2,330.5 1328.9,343.3" fill="#c2c3dc" stroke="#c2c3dc" stroke-width="0.9" stroke-linejoin="round"/>
<polygon points="1299.5,286.0 1330.3,307.1 1329.3,307.8 1298.5,286.7" fill="#a993c9" stroke="#a993c9" stroke-width="0.9" stroke-linejoin="round"/>
<line x1="1095.4" y1="422.2" x2="1081.5" y2="449.9" stroke="#c9a9a3" stroke-width="2.2" stroke-linecap="round"/>
<polygon points="1388.4,403.0 1390.3,387.6 1379.2,385.8 1377.4,401.1" fill="#83616a" stroke="#83616a" stroke-width="0.9" stroke-linejoin="round"/>
<polygon points="1343.9,325.7 1342.4,326.9 1345.2,330.5 1346.7,329.3" fill="#d0d0e6" stroke="#d0d0e6" stroke-width="0.9" stroke-linejoin="round"/>
<polygon points="1079.6,456.9 1085.1,453.0 1085.0,446.6 1079.5,450.4" fill="#9a9c84" stroke="#9a9c84" stroke-width="0.9" stroke-linejoin="round"/>
<polygon points="1393.7,384.2 1395.6,368.7 1392.2,372.1 1390.3,387.6" fill="#7a5862" stroke="#7a5862" stroke-width="0.9" stroke-linejoin="round"/>
<polygon points="1079.5,450.4 1085.0,446.6 1082.3,446.0 1076.8,449.8" fill="#e7e7c5" stroke="#e7e7c5" stroke-width="0.9" stroke-linejoin="round"/>
<polygon points="1090.3,399.0 1095.7,395.6 1095.7,388.9 1090.2,392.3" fill="#9a9c84" stroke="#9a9c84" stroke-width="0.9" stroke-linejoin="round"/>
<polygon points="1090.2,392.3 1095.7,388.9 1092.9,388.4 1087.5,391.8" fill="#e7e7c5" stroke="#e7e7c5" stroke-width="0.9" stroke-linejoin="round"/>
<polygon points="1329.3,307.8 1360.5,329.3 1356.0,336.1 1325.0,314.7" fill="#7b6692" stroke="#7b6692" stroke-width="0.9" stroke-linejoin="round"/>
<polygon points="1347.0,342.6 1391.1,349.3 1390.2,350.2 1346.0,343.4" fill="#a993c9" stroke="#a993c9" stroke-width="0.9" stroke-linejoin="round"/>
<polygon points="1346.0,343.4 1390.2,350.2 1389.2,358.4 1345.2,351.5" fill="#7b6692" stroke="#7b6692" stroke-width="0.9" stroke-linejoin="round"/>
<polygon points="1330.3,307.1 1361.4,328.5 1360.5,329.3 1329.3,307.8" fill="#a993c9" stroke="#a993c9" stroke-width="0.9" stroke-linejoin="round"/>
<polygon points="1144.0,329.4 1164.8,317.0 1165.0,309.3 1144.1,321.5" fill="#9a9c84" stroke="#9a9c84" stroke-width="0.9" stroke-linejoin="round"/>
<polygon points="1144.1,321.5 1165.0,309.3 1163.1,309.0 1142.1,321.2" fill="#e7e7c5" stroke="#e7e7c5" stroke-width="0.9" stroke-linejoin="round"/>
<polygon points="1390.3,387.6 1392.2,372.1 1381.0,370.3 1379.2,385.8" fill="#83616a" stroke="#83616a" stroke-width="0.9" stroke-linejoin="round"/>
<line x1="1081.2" y1="413.2" x2="1095.4" y2="422.2" stroke="#6f5c58" stroke-width="2.4" stroke-linecap="round"/>
<polygon points="1378.2,415.4 1381.8,411.7 1382.5,405.7 1378.9,409.3" fill="#9a9c84" stroke="#9a9c84" stroke-width="0.9" stroke-linejoin="round"/>
<polygon points="1395.6,368.7 1397.5,353.1 1394.1,356.4 1392.2,372.1" fill="#7a5862" stroke="#7a5862" stroke-width="0.9" stroke-linejoin="round"/>
<polygon points="1365.1,473.6 1368.7,469.5 1369.4,463.6 1365.8,467.6" fill="#9a9c84" stroke="#9a9c84" stroke-width="0.9" stroke-linejoin="round"/>
<polygon points="1378.9,409.3 1382.5,405.7 1379.3,405.1 1375.8,408.8" fill="#e7e7c5" stroke="#e7e7c5" stroke-width="0.9" stroke-linejoin="round"/>
<polygon points="1360.5,329.3 1392.1,350.9 1387.4,357.7 1356.0,336.1" fill="#7b6692" stroke="#7b6692" stroke-width="0.9" stroke-linejoin="round"/>
<polygon points="1365.8,467.6 1369.4,463.6 1366.3,463.0 1362.7,467.0" fill="#e7e7c5" stroke="#e7e7c5" stroke-width="0.9" stroke-linejoin="round"/>
<polygon points="1361.4,328.5 1392.9,350.1 1392.1,350.9 1360.5,329.3" fill="#a993c9" stroke="#a993c9" stroke-width="0.9" stroke-linejoin="round"/>
<polygon points="1397.5,353.1 1394.1,356.4 1382.8,354.6 1386.3,351.4" fill="#8a6670" stroke="#8a6670" stroke-width="0.9" stroke-linejoin="round"/>
<polygon points="1392.9,350.1 1392.1,350.9 1387.4,357.7 1388.3,356.8" fill="#8c77a6" stroke="#8c77a6" stroke-width="0.9" stroke-linejoin="round"/>
<polygon points="1391.1,349.3 1390.2,350.2 1389.2,358.4 1390.1,357.5" fill="#8c77a6" stroke="#8c77a6" stroke-width="0.9" stroke-linejoin="round"/>
<polygon points="1248.7,284.5 1266.9,273.2 1267.5,265.2 1249.2,276.3" fill="#9a9c84" stroke="#9a9c84" stroke-width="0.9" stroke-linejoin="round"/>
<polygon points="1249.2,276.3 1267.5,265.2 1265.4,265.0 1247.1,276.1" fill="#e7e7c5" stroke="#e7e7c5" stroke-width="0.9" stroke-linejoin="round"/>
<polygon points="1074.1,460.8 1079.6,456.9 1079.5,450.4 1074.0,454.3" fill="#9a9c84" stroke="#9a9c84" stroke-width="0.9" stroke-linejoin="round"/>
<polygon points="1392.2,372.1 1394.1,356.4 1382.8,354.6 1381.0,370.3" fill="#83616a" stroke="#83616a" stroke-width="0.9" stroke-linejoin="round"/>
<polygon points="1074.0,454.3 1079.5,450.4 1076.8,449.8 1071.3,453.7" fill="#e7e7c5" stroke="#e7e7c5" stroke-width="0.9" stroke-linejoin="round"/>
<polygon points="1084.7,402.6 1090.3,399.0 1090.2,392.3 1084.7,395.8" fill="#9a9c84" stroke="#9a9c84" stroke-width="0.9" stroke-linejoin="round"/>
<polygon points="1084.7,395.8 1090.2,392.3 1087.5,391.8 1081.9,395.3" fill="#e7e7c5" stroke="#e7e7c5" stroke-width="0.9" stroke-linejoin="round"/>
<line x1="1081.5" y1="449.9" x2="1067.3" y2="478.2" stroke="#c9a9a3" stroke-width="2.2" stroke-linecap="round"/>
<polygon points="1374.6,419.2 1378.2,415.4 1378.9,409.3 1375.4,413.1" fill="#9a9c84" stroke="#9a9c84" stroke-width="0.9" stroke-linejoin="round"/>
<polygon points="1361.5,477.7 1365.1,473.6 1365.8,467.6 1362.2,471.8" fill="#9a9c84" stroke="#9a9c84" stroke-width="0.9" stroke-linejoin="round"/>
<polygon points="1081.7,357.8 1104.5,344.5 1104.5,336.9 1081.6,350.0" fill="#9a9c84" stroke="#9a9c84" stroke-width="0.9" stroke-linejoin="round"/>
<polygon points="1375.4,413.1 1378.9,409.3 1375.8,408.8 1372.2,412.5" fill="#e7e7c5" stroke="#e7e7c5" stroke-width="0.9" stroke-linejoin="round"/>
<polygon points="1362.2,471.8 1365.8,467.6 1362.7,467.0 1359.0,471.1" fill="#e7e7c5" stroke="#e7e7c5" stroke-width="0.9" stroke-linejoin="round"/>
<polygon points="1081.6,350.0 1104.5,336.9 1102.5,336.6 1079.7,349.6" fill="#e7e7c5" stroke="#e7e7c5" stroke-width="0.9" stroke-linejoin="round"/>
<polygon points="1290.8,315.5 1307.9,303.2 1308.9,291.3 1291.7,303.3" fill="#9a9c84" stroke="#9a9c84" stroke-width="0.9" stroke-linejoin="round"/>
<polygon points="1068.4,464.8 1074.1,460.8 1074.0,454.3 1068.3,458.2" fill="#9a9c84" stroke="#9a9c84" stroke-width="0.9" stroke-linejoin="round"/>
<polygon points="1291.7,303.3 1308.9,291.3 1305.7,290.8 1288.4,302.8" fill="#e7e7c5" stroke="#e7e7c5" stroke-width="0.9" stroke-linejoin="round"/>
<polygon points="1068.3,458.2 1074.0,454.3 1071.3,453.7 1065.6,457.6" fill="#e7e7c5" stroke="#e7e7c5" stroke-width="0.9" stroke-linejoin="round"/>
<polygon points="1079.2,406.2 1084.7,402.6 1084.7,395.8 1079.1,399.4" fill="#9a9c84" stroke="#9a9c84" stroke-width="0.9" stroke-linejoin="round"/>
<polygon points="1079.1,399.4 1084.7,395.8 1081.9,395.3 1076.3,398.8" fill="#e7e7c5" stroke="#e7e7c5" stroke-width="0.9" stroke-linejoin="round"/>
<polygon points="1332.9,343.1 1348.9,329.9 1349.8,321.2 1333.8,334.2" fill="#9a9c84" stroke="#9a9c84" stroke-width="0.9" stroke-linejoin="round"/>
<polygon points="1333.8,334.2 1349.8,321.2 1347.2,320.8 1331.1,333.8" fill="#e7e7c5" stroke="#e7e7c5" stroke-width="0.9" stroke-linejoin="round"/>
<polygon points="1371.0,423.0 1374.6,419.2 1375.4,413.1 1371.7,416.9" fill="#9a9c84" stroke="#9a9c84" stroke-width="0.9" stroke-linejoin="round"/>
<polygon points="1357.8,482.0 1361.5,477.7 1362.2,471.8 1358.4,476.0" fill="#9a9c84" stroke="#9a9c84" stroke-width="0.9" stroke-linejoin="round"/>
<polygon points="1371.7,416.9 1375.4,413.1 1372.2,412.5 1368.5,416.3" fill="#e7e7c5" stroke="#e7e7c5" stroke-width="0.9" stroke-linejoin="round"/>
<polygon points="1358.4,476.0 1362.2,471.8 1359.0,471.1 1355.3,475.3" fill="#e7e7c5" stroke="#e7e7c5" stroke-width="0.9" stroke-linejoin="round"/>
<polygon points="1062.7,468.8 1068.4,464.8 1068.3,458.2 1062.6,462.2" fill="#9a9c84" stroke="#9a9c84" stroke-width="0.9" stroke-linejoin="round"/>
<polygon points="1185.5,313.4 1205.7,301.2 1206.0,293.2 1185.8,305.2" fill="#9a9c84" stroke="#9a9c84" stroke-width="0.9" stroke-linejoin="round"/>
<polygon points="1062.6,462.2 1068.3,458.2 1065.6,457.6 1059.9,461.6" fill="#e7e7c5" stroke="#e7e7c5" stroke-width="0.9" stroke-linejoin="round"/>
<polygon points="1185.8,305.2 1206.0,293.2 1204.0,293.0 1183.7,304.9" fill="#e7e7c5" stroke="#e7e7c5" stroke-width="0.9" stroke-linejoin="round"/>
<line x1="1067.3" y1="478.2" x2="1052.8" y2="507.1" stroke="#c9a9a3" stroke-width="2.2" stroke-linecap="round"/>
<polygon points="1375.9,372.9 1390.8,358.7 1391.8,350.0 1377.0,364.0" fill="#9a9c84" stroke="#9a9c84" stroke-width="0.9" stroke-linejoin="round"/>
<polygon points="1073.5,409.8 1079.2,406.2 1079.1,399.4 1073.4,403.0" fill="#9a9c84" stroke="#9a9c84" stroke-width="0.9" stroke-linejoin="round"/>
<polygon points="1073.4,403.0 1079.1,399.4 1076.3,398.8 1070.6,402.4" fill="#e7e7c5" stroke="#e7e7c5" stroke-width="0.9" stroke-linejoin="round"/>
<polygon points="1377.0,364.0 1391.8,350.0 1389.1,349.6 1374.1,363.5" fill="#e7e7c5" stroke="#e7e7c5" stroke-width="0.9" stroke-linejoin="round"/>
<polygon points="1056.9,472.9 1062.7,468.8 1062.6,462.2 1056.8,466.3" fill="#9a9c84" stroke="#9a9c84" stroke-width="0.9" stroke-linejoin="round"/>
<polygon points="1354.0,486.2 1357.8,482.0 1358.4,476.0 1354.7,480.2" fill="#9a9c84" stroke="#9a9c84" stroke-width="0.9" stroke-linejoin="round"/>
<line x1="1066.2" y1="403.7" x2="1081.2" y2="413.2" stroke="#6f5c58" stroke-width="2.4" stroke-linecap="round"/>
<polygon points="1367.3,426.9 1371.0,423.0 1371.7,416.9 1368.0,420.7" fill="#9a9c84" stroke="#9a9c84" stroke-width="0.9" stroke-linejoin="round"/>
<polygon points="1056.8,466.3 1062.6,462.2 1059.9,461.6 1054.0,465.6" fill="#e7e7c5" stroke="#e7e7c5" stroke-width="0.9" stroke-linejoin="round"/>
<polygon points="1368.0,420.7 1371.7,416.9 1368.5,416.3 1364.8,420.1" fill="#e7e7c5" stroke="#e7e7c5" stroke-width="0.9" stroke-linejoin="round"/>
<polygon points="1354.7,480.2 1358.4,476.0 1355.3,475.3 1351.5,479.6" fill="#e7e7c5" stroke="#e7e7c5" stroke-width="0.9" stroke-linejoin="round"/>
<polygon points="1067.7,413.5 1073.5,409.8 1073.4,403.0 1067.6,406.6" fill="#9a9c84" stroke="#9a9c84" stroke-width="0.9" stroke-linejoin="round"/>
<polygon points="1067.6,406.6 1073.4,403.0 1070.6,402.4 1064.8,406.1" fill="#e7e7c5" stroke="#e7e7c5" stroke-width="0.9" stroke-linejoin="round"/>
<line x1="1052.8" y1="507.1" x2="1038.0" y2="536.6" stroke="#c9a9a3" stroke-width="2.2" stroke-linecap="round"/>
<polygon points="1121.8,342.5 1144.0,329.4 1144.1,321.5 1121.9,334.4" fill="#9a9c84" stroke="#9a9c84" stroke-width="0.9" stroke-linejoin="round"/>
<polygon points="1121.9,334.4 1144.1,321.5 1142.1,321.2 1119.8,334.1" fill="#e7e7c5" stroke="#e7e7c5" stroke-width="0.9" stroke-linejoin="round"/>
<polygon points="1051.1,477.0 1056.9,472.9 1056.8,466.3 1050.9,470.4" fill="#9a9c84" stroke="#9a9c84" stroke-width="0.9" stroke-linejoin="round"/>
<polygon points="1050.9,470.4 1056.8,466.3 1054.0,465.6 1048.1,469.7" fill="#e7e7c5" stroke="#e7e7c5" stroke-width="0.9" stroke-linejoin="round"/>
<polygon points="1350.2,490.6 1354.0,486.2 1354.7,480.2 1350.8,484.5" fill="#9a9c84" stroke="#9a9c84" stroke-width="0.9" stroke-linejoin="round"/>
<polygon points="1363.5,430.9 1367.3,426.9 1368.0,420.7 1364.2,424.6" fill="#9a9c84" stroke="#9a9c84" stroke-width="0.9" stroke-linejoin="round"/>
<polygon points="1350.8,484.5 1354.7,480.2 1351.5,479.6 1347.6,483.9" fill="#e7e7c5" stroke="#e7e7c5" stroke-width="0.9" stroke-linejoin="round"/>
<polygon points="1364.2,424.6 1368.0,420.7 1364.8,420.1 1361.0,424.0" fill="#e7e7c5" stroke="#e7e7c5" stroke-width="0.9" stroke-linejoin="round"/>
<polygon points="1061.9,417.2 1067.7,413.5 1067.6,406.6 1061.8,410.3" fill="#9a9c84" stroke="#9a9c84" stroke-width="0.9" stroke-linejoin="round"/>
<polygon points="1061.8,410.3 1067.6,406.6 1064.8,406.1 1059.0,409.8" fill="#e7e7c5" stroke="#e7e7c5" stroke-width="0.9" stroke-linejoin="round"/>
<polygon points="1229.3,296.5 1248.7,284.5 1249.2,276.3 1229.8,288.1" fill="#9a9c84" stroke="#9a9c84" stroke-width="0.9" stroke-linejoin="round"/>
<polygon points="1229.8,288.1 1249.2,276.3 1247.1,276.1 1227.6,287.8" fill="#e7e7c5" stroke="#e7e7c5" stroke-width="0.9" stroke-linejoin="round"/>
<polygon points="1045.1,481.2 1051.1,477.0 1050.9,470.4 1045.0,474.5" fill="#9a9c84" stroke="#9a9c84" stroke-width="0.9" stroke-linejoin="round"/>
<polygon points="1042.9,534.9 1042.6,520.5 1036.7,524.9 1037.1,539.4" fill="#7a5862" stroke="#7a5862" stroke-width="0.9" stroke-linejoin="round"/>
<polygon points="1045.0,474.5 1050.9,470.4 1048.1,469.7 1042.2,473.9" fill="#e7e7c5" stroke="#e7e7c5" stroke-width="0.9" stroke-linejoin="round"/>
<polygon points="1057.6,371.8 1081.7,357.8 1081.6,350.0 1057.4,363.8" fill="#9a9c84" stroke="#9a9c84" stroke-width="0.9" stroke-linejoin="round"/>
<polygon points="1037.1,539.4 1036.7,524.9 1027.0,522.5 1027.5,536.9" fill="#83616a" stroke="#83616a" stroke-width="0.9" stroke-linejoin="round"/>
<polygon points="1057.4,363.8 1081.6,350.0 1079.7,349.6 1055.4,363.4" fill="#e7e7c5" stroke="#e7e7c5" stroke-width="0.9" stroke-linejoin="round"/>
<polygon points="1346.3,495.0 1350.2,490.6 1350.8,484.5 1346.9,488.9" fill="#9a9c84" stroke="#9a9c84" stroke-width="0.9" stroke-linejoin="round"/>
<polygon points="1359.7,434.9 1363.5,430.9 1364.2,424.6 1360.4,428.6" fill="#9a9c84" stroke="#9a9c84" stroke-width="0.9" stroke-linejoin="round"/>
<polygon points="1346.9,488.9 1350.8,484.5 1347.6,483.9 1343.7,488.2" fill="#e7e7c5" stroke="#e7e7c5" stroke-width="0.9" stroke-linejoin="round"/>
<polygon points="1056.0,421.0 1061.9,417.2 1061.8,410.3 1055.8,414.1" fill="#9a9c84" stroke="#9a9c84" stroke-width="0.9" stroke-linejoin="round"/>
<polygon points="1360.4,428.6 1364.2,424.6 1361.0,424.0 1357.2,428.0" fill="#e7e7c5" stroke="#e7e7c5" stroke-width="0.9" stroke-linejoin="round"/>
<polygon points="1055.8,414.1 1061.8,410.3 1059.0,409.8 1053.0,413.5" fill="#e7e7c5" stroke="#e7e7c5" stroke-width="0.9" stroke-linejoin="round"/>
<polygon points="1272.6,328.6 1290.8,315.5 1291.7,303.3 1273.5,316.0" fill="#9a9c84" stroke="#9a9c84" stroke-width="0.9" stroke-linejoin="round"/>
<polygon points="1042.6,520.5 1042.2,505.8 1036.3,510.2 1036.7,524.9" fill="#7a5862" stroke="#7a5862" stroke-width="0.9" stroke-linejoin="round"/>
<polygon points="1273.5,316.0 1291.7,303.3 1288.4,302.8 1270.1,315.5" fill="#e7e7c5" stroke="#e7e7c5" stroke-width="0.9" stroke-linejoin="round"/>
<polygon points="1036.7,524.9 1036.3,510.2 1026.5,507.8 1027.0,522.5" fill="#83616a" stroke="#83616a" stroke-width="0.9" stroke-linejoin="round"/>
<polygon points="1039.1,485.5 1045.1,481.2 1045.0,474.5 1038.9,478.7" fill="#9a9c84" stroke="#9a9c84" stroke-width="0.9" stroke-linejoin="round"/>
<polygon points="1038.9,478.7 1045.0,474.5 1042.2,473.9 1036.1,478.1" fill="#e7e7c5" stroke="#e7e7c5" stroke-width="0.9" stroke-linejoin="round"/>
<polygon points="1342.3,499.5 1346.3,495.0 1346.9,488.9 1343.0,493.4" fill="#9a9c84" stroke="#9a9c84" stroke-width="0.9" stroke-linejoin="round"/>
<polygon points="1050.0,424.9 1056.0,421.0 1055.8,414.1 1049.8,417.9" fill="#9a9c84" stroke="#9a9c84" stroke-width="0.9" stroke-linejoin="round"/>
<polygon points="1049.8,417.9 1055.8,414.1 1053.0,413.5 1047.0,417.3" fill="#e7e7c5" stroke="#e7e7c5" stroke-width="0.9" stroke-linejoin="round"/>
<polygon points="1355.9,438.9 1359.7,434.9 1360.4,428.6 1356.6,432.6" fill="#9a9c84" stroke="#9a9c84" stroke-width="0.9" stroke-linejoin="round"/>
<line x1="1050.4" y1="393.6" x2="1066.2" y2="403.7" stroke="#6f5c58" stroke-width="2.4" stroke-linecap="round"/>
<polygon points="1343.0,493.4 1346.9,488.9 1343.7,488.2 1339.7,492.7" fill="#e7e7c5" stroke="#e7e7c5" stroke-width="0.9" stroke-linejoin="round"/>
<polygon points="1315.9,357.2 1332.9,343.1 1333.8,334.2 1316.7,348.0" fill="#9a9c84" stroke="#9a9c84" stroke-width="0.9" stroke-linejoin="round"/>
<polygon points="1356.6,432.6 1360.4,428.6 1357.2,428.0 1353.3,432.0" fill="#e7e7c5" stroke="#e7e7c5" stroke-width="0.9" stroke-linejoin="round"/>
<polygon points="1042.2,505.8 1041.8,491.0 1035.8,495.3 1036.3,510.2" fill="#7a5862" stroke="#7a5862" stroke-width="0.9" stroke-linejoin="round"/>
<polygon points="1316.7,348.0 1333.8,334.2 1331.1,333.8 1313.9,347.6" fill="#e7e7c5" stroke="#e7e7c5" stroke-width="0.9" stroke-linejoin="round"/>
<polygon points="1164.1,326.3 1185.5,313.4 1185.8,305.2 1164.3,318.0" fill="#9a9c84" stroke="#9a9c84" stroke-width="0.9" stroke-linejoin="round"/>
<polygon points="1164.3,318.0 1185.8,305.2 1183.7,304.9 1162.2,317.7" fill="#e7e7c5" stroke="#e7e7c5" stroke-width="0.9" stroke-linejoin="round"/>
<polygon points="1036.3,510.2 1035.8,495.3 1026.0,493.0 1026.5,507.8" fill="#83616a" stroke="#83616a" stroke-width="0.9" stroke-linejoin="round"/>
<polygon points="1360.2,388.0 1375.9,372.9 1377.0,364.0 1361.1,378.9" fill="#9a9c84" stroke="#9a9c84" stroke-width="0.9" stroke-linejoin="round"/>
<polygon points="1361.1,378.9 1377.0,364.0 1374.1,363.5 1358.3,378.4" fill="#e7e7c5" stroke="#e7e7c5" stroke-width="0.9" stroke-linejoin="round"/>
<polygon points="1041.8,491.0 1041.4,476.0 1035.4,480.2 1035.8,495.3" fill="#7a5862" stroke="#7a5862" stroke-width="0.9" stroke-linejoin="round"/>
<polygon points="1043.9,428.8 1050.0,424.9 1049.8,417.9 1043.7,421.8" fill="#9a9c84" stroke="#9a9c84" stroke-width="0.9" stroke-linejoin="round"/>
<polygon points="1043.7,421.8 1049.8,417.9 1047.0,417.3 1040.8,421.2" fill="#e7e7c5" stroke="#e7e7c5" stroke-width="0.9" stroke-linejoin="round"/>
<polygon points="1338.3,504.0 1342.3,499.5 1343.0,493.4 1339.0,497.9" fill="#9a9c84" stroke="#9a9c84" stroke-width="0.9" stroke-linejoin="round"/>
<polygon points="1035.8,495.3 1035.4,480.2 1025.5,477.9 1026.0,493.0" fill="#83616a" stroke="#83616a" stroke-width="0.9" stroke-linejoin="round"/>
<polygon points="1339.0,497.9 1343.0,493.4 1339.7,492.7 1335.7,497.2" fill="#e7e7c5" stroke="#e7e7c5" stroke-width="0.9" stroke-linejoin="round"/>
<polygon points="1029.0,492.6 1035.2,488.2 1035.0,481.4 1028.8,485.8" fill="#9a9c84" stroke="#9a9c84" stroke-width="0.9" stroke-linejoin="round"/>
<polygon points="1351.9,443.0 1355.9,438.9 1356.6,432.6 1352.6,436.7" fill="#9a9c84" stroke="#9a9c84" stroke-width="0.9" stroke-linejoin="round"/>
<polygon points="1028.8,485.8 1035.0,481.4 1032.2,480.8 1026.0,485.1" fill="#e7e7c5" stroke="#e7e7c5" stroke-width="0.9" stroke-linejoin="round"/>
<polygon points="1352.6,436.7 1356.6,432.6 1353.3,432.0 1349.3,436.1" fill="#e7e7c5" stroke="#e7e7c5" stroke-width="0.9" stroke-linejoin="round"/>
<polygon points="1041.4,476.0 1041.1,460.8 1035.0,464.9 1035.4,480.2" fill="#7a5862" stroke="#7a5862" stroke-width="0.9" stroke-linejoin="round"/>
<polygon points="1098.3,356.4 1121.8,342.5 1121.9,334.4 1098.3,348.1" fill="#9a9c84" stroke="#9a9c84" stroke-width="0.9" stroke-linejoin="round"/>
<polygon points="1035.4,480.2 1035.0,464.9 1025.0,462.7 1025.5,477.9" fill="#83616a" stroke="#83616a" stroke-width="0.9" stroke-linejoin="round"/>
<polygon points="1098.3,348.1 1121.9,334.4 1119.8,334.1 1096.2,347.8" fill="#e7e7c5" stroke="#e7e7c5" stroke-width="0.9" stroke-linejoin="round"/>
<polygon points="1037.7,432.8 1043.9,428.8 1043.7,421.8 1037.5,425.7" fill="#9a9c84" stroke="#9a9c84" stroke-width="0.9" stroke-linejoin="round"/>
<polygon points="1037.5,425.7 1043.7,421.8 1040.8,421.2 1034.6,425.1" fill="#e7e7c5" stroke="#e7e7c5" stroke-width="0.9" stroke-linejoin="round"/>
<polygon points="1022.8,497.0 1029.0,492.6 1028.8,485.8 1022.5,490.2" fill="#9a9c84" stroke="#9a9c84" stroke-width="0.9" stroke-linejoin="round"/>
<polygon points="1334.3,508.6 1338.3,504.0 1339.0,497.9 1334.9,502.5" fill="#9a9c84" stroke="#9a9c84" stroke-width="0.9" stroke-linejoin="round"/>
<polygon points="1022.5,490.2 1028.8,485.8 1026.0,485.1 1019.7,489.5" fill="#e7e7c5" stroke="#e7e7c5" stroke-width="0.9" stroke-linejoin="round"/>
<polygon points="1334.9,502.5 1339.0,497.9 1335.7,497.2 1331.6,501.8" fill="#e7e7c5" stroke="#e7e7c5" stroke-width="0.9" stroke-linejoin="round"/>
<polygon points="1347.9,447.2 1351.9,443.0 1352.6,436.7 1348.6,440.8" fill="#9a9c84" stroke="#9a9c84" stroke-width="0.9" stroke-linejoin="round"/>
<polygon points="1041.1,460.8 1040.7,445.4 1034.5,449.4 1035.0,464.9" fill="#7a5862" stroke="#7a5862" stroke-width="0.9" stroke-linejoin="round"/>
<polygon points="1348.6,440.8 1352.6,436.7 1349.3,436.1 1345.3,440.2" fill="#e7e7c5" stroke="#e7e7c5" stroke-width="0.9" stroke-linejoin="round"/>
<polygon points="1035.0,464.9 1034.5,449.4 1024.5,447.2 1025.0,462.7" fill="#83616a" stroke="#83616a" stroke-width="0.9" stroke-linejoin="round"/>
<polygon points="1208.7,309.3 1229.3,296.5 1229.8,288.1 1209.1,300.7" fill="#9a9c84" stroke="#9a9c84" stroke-width="0.9" stroke-linejoin="round"/>
<polygon points="1209.1,300.7 1229.8,288.1 1227.6,287.8 1206.8,300.4" fill="#e7e7c5" stroke="#e7e7c5" stroke-width="0.9" stroke-linejoin="round"/>
<polygon points="1031.9,386.7 1057.6,371.8 1057.4,363.8 1031.7,378.5" fill="#9a9c84" stroke="#9a9c84" stroke-width="0.9" stroke-linejoin="round"/>
<polygon points="1031.7,378.5 1057.4,363.8 1055.4,363.4 1029.6,378.1" fill="#e7e7c5" stroke="#e7e7c5" stroke-width="0.9" stroke-linejoin="round"/>
<polygon points="1040.7,445.4 1040.3,429.8 1034.1,433.7 1034.5,449.4" fill="#7a5862" stroke="#7a5862" stroke-width="0.9" stroke-linejoin="round"/>
<polygon points="1016.4,501.5 1022.8,497.0 1022.5,490.2 1016.1,494.6" fill="#9a9c84" stroke="#9a9c84" stroke-width="0.9" stroke-linejoin="round"/>
<polygon points="1016.1,494.6 1022.5,490.2 1019.7,489.5 1013.3,493.9" fill="#e7e7c5" stroke="#e7e7c5" stroke-width="0.9" stroke-linejoin="round"/>
<polygon points="1034.5,449.4 1034.1,433.7 1024.0,431.6 1024.5,447.2" fill="#83616a" stroke="#83616a" stroke-width="0.9" stroke-linejoin="round"/>
<polygon points="1330.2,513.3 1334.3,508.6 1334.9,502.5 1330.8,507.1" fill="#9a9c84" stroke="#9a9c84" stroke-width="0.9" stroke-linejoin="round"/>
<polygon points="1330.8,507.1 1334.9,502.5 1331.6,501.8 1327.5,506.4" fill="#e7e7c5" stroke="#e7e7c5" stroke-width="0.9" stroke-linejoin="round"/>
<polygon points="1343.9,451.5 1347.9,447.2 1348.6,440.8 1344.6,445.0" fill="#9a9c84" stroke="#9a9c84" stroke-width="0.9" stroke-linejoin="round"/>
<line x1="1033.7" y1="383.0" x2="1050.4" y2="393.6" stroke="#6f5c58" stroke-width="2.4" stroke-linecap="round"/>
<polygon points="1344.6,445.0 1348.6,440.8 1345.3,440.2 1341.2,444.4" fill="#e7e7c5" stroke="#e7e7c5" stroke-width="0.9" stroke-linejoin="round"/>
<polygon points="1027.4,439.4 1033.7,435.3 1033.5,428.2 1027.1,432.2" fill="#9a9c84" stroke="#9a9c84" stroke-width="0.9" stroke-linejoin="round"/>
<polygon points="1027.1,432.2 1033.5,428.2 1030.6,427.6 1024.3,431.6" fill="#e7e7c5" stroke="#e7e7c5" stroke-width="0.9" stroke-linejoin="round"/>
<polygon points="1040.3,429.8 1039.9,413.9 1033.7,417.8 1034.1,433.7" fill="#7a5862" stroke="#7a5862" stroke-width="0.9" stroke-linejoin="round"/>
<polygon points="1034.1,433.7 1033.7,417.8 1023.5,415.7 1024.0,431.6" fill="#83616a" stroke="#83616a" stroke-width="0.9" stroke-linejoin="round"/>
<polygon points="1253.2,342.5 1272.6,328.6 1273.5,316.0 1254.0,329.6" fill="#9a9c84" stroke="#9a9c84" stroke-width="0.9" stroke-linejoin="round"/>
<polygon points="1254.0,329.6 1273.5,316.0 1270.1,315.5 1250.6,329.1" fill="#e7e7c5" stroke="#e7e7c5" stroke-width="0.9" stroke-linejoin="round"/>
<polygon points="1009.9,506.1 1016.4,501.5 1016.1,494.6 1009.6,499.1" fill="#9a9c84" stroke="#9a9c84" stroke-width="0.9" stroke-linejoin="round"/>
<polygon points="1009.6,499.1 1016.1,494.6 1013.3,493.9 1006.8,498.5" fill="#e7e7c5" stroke="#e7e7c5" stroke-width="0.9" stroke-linejoin="round"/>
<polygon points="1039.9,413.9 1039.4,397.9 1033.2,401.6 1033.7,417.8" fill="#7a5862" stroke="#7a5862" stroke-width="0.9" stroke-linejoin="round"/>
<polygon points="1326.0,518.1 1330.2,513.3 1330.8,507.1 1326.6,511.8" fill="#9a9c84" stroke="#9a9c84" stroke-width="0.9" stroke-linejoin="round"/>
<polygon points="1326.6,511.8 1330.8,507.1 1327.5,506.4 1323.3,511.1" fill="#e7e7c5" stroke="#e7e7c5" stroke-width="0.9" stroke-linejoin="round"/>
<polygon points="1033.7,417.8 1033.2,401.6 1023.0,399.6 1023.5,415.7" fill="#83616a" stroke="#83616a" stroke-width="0.9" stroke-linejoin="round"/>
<polygon points="1339.8,455.8 1343.9,451.5 1344.6,445.0 1340.5,449.3" fill="#9a9c84" stroke="#9a9c84" stroke-width="0.9" stroke-linejoin="round"/>
<polygon points="1020.9,443.5 1027.4,439.4 1027.1,432.2 1020.7,436.3" fill="#9a9c84" stroke="#9a9c84" stroke-width="0.9" stroke-linejoin="round"/>
<polygon points="1340.5,449.3 1344.6,445.0 1341.2,444.4 1337.1,448.7" fill="#e7e7c5" stroke="#e7e7c5" stroke-width="0.9" stroke-linejoin="round"/>
<polygon points="1020.7,436.3 1027.1,432.2 1024.3,431.6 1017.8,435.7" fill="#e7e7c5" stroke="#e7e7c5" stroke-width="0.9" stroke-linejoin="round"/>
<polygon points="1141.3,340.1 1164.1,326.3 1164.3,318.0 1141.4,331.6" fill="#9a9c84" stroke="#9a9c84" stroke-width="0.9" stroke-linejoin="round"/>
<polygon points="1297.8,372.2 1315.9,357.2 1316.7,348.0 1298.6,362.7" fill="#9a9c84" stroke="#9a9c84" stroke-width="0.9" stroke-linejoin="round"/>
<polygon points="1141.4,331.6 1164.3,318.0 1162.2,317.7 1139.2,331.2" fill="#e7e7c5" stroke="#e7e7c5" stroke-width="0.9" stroke-linejoin="round"/>
<polygon points="1298.6,362.7 1316.7,348.0 1313.9,347.6 1295.7,362.3" fill="#e7e7c5" stroke="#e7e7c5" stroke-width="0.9" stroke-linejoin="round"/>
<polygon points="1039.0,381.6 1032.7,385.3 1022.5,383.3 1028.8,379.7" fill="#8a6670" stroke="#8a6670" stroke-width="0.9" stroke-linejoin="round"/>
<polygon points="1039.4,397.9 1039.0,381.6 1032.7,385.3 1033.2,401.6" fill="#7a5862" stroke="#7a5862" stroke-width="0.9" stroke-linejoin="round"/>
<polygon points="1003.3,510.7 1009.9,506.1 1009.6,499.1 1003.0,503.7" fill="#9a9c84" stroke="#9a9c84" stroke-width="0.9" stroke-linejoin="round"/>
<polygon points="1003.0,503.7 1009.6,499.1 1006.8,498.5 1000.2,503.0" fill="#e7e7c5" stroke="#e7e7c5" stroke-width="0.9" stroke-linejoin="round"/>
<polygon points="1033.2,401.6 1032.7,385.3 1022.5,383.3 1023.0,399.6" fill="#83616a" stroke="#83616a" stroke-width="0.9" stroke-linejoin="round"/>
<polygon points="1343.3,404.1 1360.2,388.0 1361.1,378.9 1344.3,394.7" fill="#9a9c84" stroke="#9a9c84" stroke-width="0.9" stroke-linejoin="round"/>
<polygon points="1321.7,522.9 1326.0,518.1 1326.6,511.8 1322.3,516.6" fill="#9a9c84" stroke="#9a9c84" stroke-width="0.9" stroke-linejoin="round"/>
<polygon points="1344.3,394.7 1361.1,378.9 1358.3,378.4 1341.3,394.2" fill="#e7e7c5" stroke="#e7e7c5" stroke-width="0.9" stroke-linejoin="round"/>
<polygon points="1322.3,516.6 1326.6,511.8 1323.3,511.1 1319.0,515.9" fill="#e7e7c5" stroke="#e7e7c5" stroke-width="0.9" stroke-linejoin="round"/>
<polygon points="1014.4,447.7 1020.9,443.5 1020.7,436.3 1014.1,440.5" fill="#9a9c84" stroke="#9a9c84" stroke-width="0.9" stroke-linejoin="round"/>
<polygon points="1014.1,440.5 1020.7,436.3 1017.8,435.7 1011.2,439.8" fill="#e7e7c5" stroke="#e7e7c5" stroke-width="0.9" stroke-linejoin="round"/>
<polygon points="1335.6,460.2 1339.8,455.8 1340.5,449.3 1336.3,453.7" fill="#9a9c84" stroke="#9a9c84" stroke-width="0.9" stroke-linejoin="round"/>
<polygon points="1336.3,453.7 1340.5,449.3 1337.1,448.7 1332.9,453.0" fill="#e7e7c5" stroke="#e7e7c5" stroke-width="0.9" stroke-linejoin="round"/>
<polygon points="1033.6,386.3 1075.1,394.2 1069.8,397.5 1028.2,389.4" fill="#c58992" stroke="#c58992" stroke-width="0.9" stroke-linejoin="round"/>
<polygon points="996.7,515.4 1003.3,510.7 1003.0,503.7 996.3,508.4" fill="#9a9c84" stroke="#9a9c84" stroke-width="0.9" stroke-linejoin="round"/>
<polygon points="996.3,508.4 1003.0,503.7 1000.2,503.0 993.4,507.7" fill="#e7e7c5" stroke="#e7e7c5" stroke-width="0.9" stroke-linejoin="round"/>
<polygon points="1073.2,371.2 1098.3,356.4 1098.3,348.1 1073.1,362.8" fill="#9a9c84" stroke="#9a9c84" stroke-width="0.9" stroke-linejoin="round"/>
<polygon points="1073.1,362.8 1098.3,348.1 1096.2,347.8 1071.0,362.4" fill="#e7e7c5" stroke="#e7e7c5" stroke-width="0.9" stroke-linejoin="round"/>
<polygon points="1029.8,377.8 1060.5,366.1 1058.9,367.0 1028.1,378.8" fill="#a993c9" stroke="#a993c9" stroke-width="0.9" stroke-linejoin="round"/>
<polygon points="1030.2,376.5 1072.0,384.3 1072.1,396.8 1030.6,388.8" fill="#7b6692" stroke="#7b6692" stroke-width="0.9" stroke-linejoin="round"/>
<polygon points="1028.1,378.8 1058.9,367.0 1062.6,375.5 1031.8,387.0" fill="#7b6692" stroke="#7b6692" stroke-width="0.9" stroke-linejoin="round"/>
<polygon points="1028.2,389.4 1069.8,397.5 1069.8,398.8 1028.2,390.7" fill="#bf838c" stroke="#bf838c" stroke-width="0.9" stroke-linejoin="round"/>
<polygon points="1030.9,376.1 1072.7,383.9 1072.0,384.3 1030.2,376.5" fill="#a993c9" stroke="#a993c9" stroke-width="0.9" stroke-linejoin="round"/>
<polygon points="1033.3,374.2 1074.9,381.9 1069.7,385.1 1027.8,377.2" fill="#c58992" stroke="#c58992" stroke-width="0.9" stroke-linejoin="round"/>
<polygon points="1317.4,527.8 1321.7,522.9 1322.3,516.6 1318.0,521.5" fill="#9a9c84" stroke="#9a9c84" stroke-width="0.9" stroke-linejoin="round"/>
<polygon points="1007.7,451.9 1014.4,447.7 1014.1,440.5 1007.5,444.7" fill="#9a9c84" stroke="#9a9c84" stroke-width="0.9" stroke-linejoin="round"/>
<polygon points="1007.5,444.7 1014.1,440.5 1011.2,439.8 1004.5,444.0" fill="#e7e7c5" stroke="#e7e7c5" stroke-width="0.9" stroke-linejoin="round"/>
<polygon points="1318.0,521.5 1322.3,516.6 1319.0,515.9 1314.6,520.8" fill="#e7e7c5" stroke="#e7e7c5" stroke-width="0.9" stroke-linejoin="round"/>
<polygon points="1331.4,464.6 1335.6,460.2 1336.3,453.7 1332.0,458.1" fill="#9a9c84" stroke="#9a9c84" stroke-width="0.9" stroke-linejoin="round"/>
<polygon points="1027.8,377.2 1069.7,385.1 1069.7,386.4 1027.9,378.6" fill="#bf838c" stroke="#bf838c" stroke-width="0.9" stroke-linejoin="round"/>
<polygon points="1332.0,458.1 1336.3,453.7 1332.9,453.0 1328.6,457.4" fill="#e7e7c5" stroke="#e7e7c5" stroke-width="0.9" stroke-linejoin="round"/>
<polygon points="989.9,520.2 996.7,515.4 996.3,508.4 989.5,513.2" fill="#9a9c84" stroke="#9a9c84" stroke-width="0.9" stroke-linejoin="round"/>
<polygon points="989.5,513.2 996.3,508.4 993.4,507.7 986.6,512.4" fill="#e7e7c5" stroke="#e7e7c5" stroke-width="0.9" stroke-linejoin="round"/>
<polygon points="1004.6,402.6 1031.9,386.7 1031.7,378.5 1004.2,394.2" fill="#9a9c84" stroke="#9a9c84" stroke-width="0.9" stroke-linejoin="round"/>
<polygon points="1004.2,394.2 1031.7,378.5 1029.6,378.1 1002.1,393.8" fill="#e7e7c5" stroke="#e7e7c5" stroke-width="0.9" stroke-linejoin="round"/>
<polygon points="1186.7,323.0 1208.7,309.3 1209.1,300.7 1187.0,314.1" fill="#9a9c84" stroke="#9a9c84" stroke-width="0.9" stroke-linejoin="round"/>
<polygon points="1187.0,314.1 1209.1,300.7 1206.8,300.4 1184.7,313.7" fill="#e7e7c5" stroke="#e7e7c5" stroke-width="0.9" stroke-linejoin="round"/>
<polygon points="1001.0,456.3 1007.7,451.9 1007.5,444.7 1000.7,449.0" fill="#9a9c84" stroke="#9a9c84" stroke-width="0.9" stroke-linejoin="round"/>
<polygon points="1000.7,449.0 1007.5,444.7 1004.5,444.0 997.7,448.3" fill="#e7e7c5" stroke="#e7e7c5" stroke-width="0.9" stroke-linejoin="round"/>
<polygon points="1313.0,532.8 1317.4,527.8 1318.0,521.5 1313.6,526.5" fill="#9a9c84" stroke="#9a9c84" stroke-width="0.9" stroke-linejoin="round"/>
<polygon points="1313.6,526.5 1318.0,521.5 1314.6,520.8 1310.2,525.7" fill="#e7e7c5" stroke="#e7e7c5" stroke-width="0.9" stroke-linejoin="round"/>
<polygon points="983.0,525.0 989.9,520.2 989.5,513.2 982.6,518.0" fill="#9a9c84" stroke="#9a9c84" stroke-width="0.9" stroke-linejoin="round"/>
<polygon points="1327.0,469.1 1331.4,464.6 1332.0,458.1 1327.7,462.6" fill="#9a9c84" stroke="#9a9c84" stroke-width="0.9" stroke-linejoin="round"/>
<polygon points="982.6,518.0 989.5,513.2 986.6,512.4 979.7,517.2" fill="#e7e7c5" stroke="#e7e7c5" stroke-width="0.9" stroke-linejoin="round"/>
<polygon points="1327.7,462.6 1332.0,458.1 1328.6,457.4 1324.3,461.9" fill="#e7e7c5" stroke="#e7e7c5" stroke-width="0.9" stroke-linejoin="round"/>
<polygon points="1075.1,394.2 1118.0,402.4 1113.0,405.8 1069.8,397.5" fill="#c58992" stroke="#c58992" stroke-width="0.9" stroke-linejoin="round"/>
<polygon points="1093.1,387.9 1090.7,389.4 1087.6,392.2 1090.0,390.7" fill="#d0d0e6" stroke="#d0d0e6" stroke-width="0.9" stroke-linejoin="round"/>
<polygon points="1078.3,369.0 1093.1,387.9 1090.7,389.4 1075.8,370.5" fill="#eceef8" stroke="#eceef8" stroke-width="0.9" stroke-linejoin="round"/>
<polygon points="994.1,460.6 1001.0,456.3 1000.7,449.0 993.8,453.3" fill="#9a9c84" stroke="#9a9c84" stroke-width="0.9" stroke-linejoin="round"/>
<polygon points="1075.8,370.5 1090.7,389.4 1087.6,392.2 1072.8,373.3" fill="#c2c3dc" stroke="#c2c3dc" stroke-width="0.9" stroke-linejoin="round"/>
<polygon points="1232.6,357.3 1253.2,342.5 1254.0,329.6 1233.3,344.1" fill="#9a9c84" stroke="#9a9c84" stroke-width="0.9" stroke-linejoin="round"/>
<polygon points="1072.0,384.3 1115.2,392.4 1115.1,405.1 1072.1,396.8" fill="#7b6692" stroke="#7b6692" stroke-width="0.9" stroke-linejoin="round"/>
<polygon points="993.8,453.3 1000.7,449.0 997.7,448.3 990.9,452.6" fill="#e7e7c5" stroke="#e7e7c5" stroke-width="0.9" stroke-linejoin="round"/>
<polygon points="1060.5,366.1 1092.6,353.9 1091.0,354.8 1058.9,367.0" fill="#a993c9" stroke="#a993c9" stroke-width="0.9" stroke-linejoin="round"/>
<polygon points="1233.3,344.1 1254.0,329.6 1250.6,329.1 1229.7,343.5" fill="#e7e7c5" stroke="#e7e7c5" stroke-width="0.9" stroke-linejoin="round"/>
<polygon points="1069.8,397.5 1113.0,405.8 1113.0,407.1 1069.8,398.8" fill="#bf838c" stroke="#bf838c" stroke-width="0.9" stroke-linejoin="round"/>
<polygon points="1058.9,367.0 1091.0,354.8 1094.7,363.5 1062.6,375.5" fill="#7b6692" stroke="#7b6692" stroke-width="0.9" stroke-linejoin="round"/>
<polygon points="1308.6,537.9 1313.0,532.8 1313.6,526.5 1309.2,531.5" fill="#9a9c84" stroke="#9a9c84" stroke-width="0.9" stroke-linejoin="round"/>
<polygon points="1072.7,383.9 1115.9,392.0 1115.2,392.4 1072.0,384.3" fill="#a993c9" stroke="#a993c9" stroke-width="0.9" stroke-linejoin="round"/>
<polygon points="1074.9,381.9 1118.1,389.9 1113.0,393.3 1069.7,385.1" fill="#c58992" stroke="#c58992" stroke-width="0.9" stroke-linejoin="round"/>
<polygon points="976.0,530.0 983.0,525.0 982.6,518.0 975.6,522.9" fill="#9a9c84" stroke="#9a9c84" stroke-width="0.9" stroke-linejoin="round"/>
<polygon points="1309.2,531.5 1313.6,526.5 1310.2,525.7 1305.7,530.7" fill="#e7e7c5" stroke="#e7e7c5" stroke-width="0.9" stroke-linejoin="round"/>
<polygon points="975.6,522.9 982.6,518.0 979.7,517.2 972.7,522.1" fill="#e7e7c5" stroke="#e7e7c5" stroke-width="0.9" stroke-linejoin="round"/>
<polygon points="1322.7,473.7 1327.0,469.1 1327.7,462.6 1323.3,467.1" fill="#9a9c84" stroke="#9a9c84" stroke-width="0.9" stroke-linejoin="round"/>
<polygon points="1323.3,467.1 1327.7,462.6 1324.3,461.9 1319.8,466.4" fill="#e7e7c5" stroke="#e7e7c5" stroke-width="0.9" stroke-linejoin="round"/>
<polygon points="1116.9,354.9 1141.3,340.1 1141.4,331.6 1117.0,346.1" fill="#9a9c84" stroke="#9a9c84" stroke-width="0.9" stroke-linejoin="round"/>
<polygon points="1069.7,385.1 1113.0,393.3 1113.0,394.6 1069.7,386.4" fill="#bf838c" stroke="#bf838c" stroke-width="0.9" stroke-linejoin="round"/>
<polygon points="1117.0,346.1 1141.4,331.6 1139.2,331.2 1114.7,345.7" fill="#e7e7c5" stroke="#e7e7c5" stroke-width="0.9" stroke-linejoin="round"/>
<polygon points="1278.5,388.1 1297.8,372.2 1298.6,362.7 1279.2,378.5" fill="#9a9c84" stroke="#9a9c84" stroke-width="0.9" stroke-linejoin="round"/>
<polygon points="987.2,465.1 994.1,460.6 993.8,453.3 986.8,457.7" fill="#9a9c84" stroke="#9a9c84" stroke-width="0.9" stroke-linejoin="round"/>
<polygon points="986.8,457.7 993.8,453.3 990.9,452.6 983.8,457.0" fill="#e7e7c5" stroke="#e7e7c5" stroke-width="0.9" stroke-linejoin="round"/>
<polygon points="1279.2,378.5 1298.6,362.7 1295.7,362.3 1276.2,378.0" fill="#e7e7c5" stroke="#e7e7c5" stroke-width="0.9" stroke-linejoin="round"/>
<polygon points="968.9,535.0 976.0,530.0 975.6,522.9 968.5,527.8" fill="#9a9c84" stroke="#9a9c84" stroke-width="0.9" stroke-linejoin="round"/>
<polygon points="1304.0,543.1 1308.6,537.9 1309.2,531.5 1304.6,536.6" fill="#9a9c84" stroke="#9a9c84" stroke-width="0.9" stroke-linejoin="round"/>
<polygon points="968.5,527.8 975.6,522.9 972.7,522.1 965.5,527.1" fill="#e7e7c5" stroke="#e7e7c5" stroke-width="0.9" stroke-linejoin="round"/>
<polygon points="1298.5,599.8 1300.0,584.3 1295.4,589.7 1294.0,605.3" fill="#7a5862" stroke="#7a5862" stroke-width="0.9" stroke-linejoin="round"/>
<polygon points="1304.6,536.6 1309.2,531.5 1305.7,530.7 1301.2,535.8" fill="#e7e7c5" stroke="#e7e7c5" stroke-width="0.9" stroke-linejoin="round"/>
<polygon points="1114.4,357.0 1096.7,392.3 1099.0,390.8 1116.8,355.5" fill="#b9bad2" stroke="#b9bad2" stroke-width="0.9" stroke-linejoin="round"/>
<polygon points="1325.4,421.3 1343.3,404.1 1344.3,394.7 1326.3,411.7" fill="#9a9c84" stroke="#9a9c84" stroke-width="0.9" stroke-linejoin="round"/>
<polygon points="1110.4,354.1 1092.8,389.5 1096.7,392.3 1114.4,357.0" fill="#c2c3dc" stroke="#c2c3dc" stroke-width="0.9" stroke-linejoin="round"/>
<polygon points="1318.2,478.4 1322.7,473.7 1323.3,467.1 1318.8,471.7" fill="#9a9c84" stroke="#9a9c84" stroke-width="0.9" stroke-linejoin="round"/>
<polygon points="1294.0,605.3 1295.4,589.7 1283.5,586.7 1282.2,602.3" fill="#83616a" stroke="#83616a" stroke-width="0.9" stroke-linejoin="round"/>
<polygon points="1326.3,411.7 1344.3,394.7 1341.3,394.2 1323.3,411.2" fill="#e7e7c5" stroke="#e7e7c5" stroke-width="0.9" stroke-linejoin="round"/>
<polygon points="1318.8,471.7 1323.3,467.1 1319.8,466.4 1315.4,471.0" fill="#e7e7c5" stroke="#e7e7c5" stroke-width="0.9" stroke-linejoin="round"/>
<polygon points="1046.5,387.1 1073.2,371.2 1073.1,362.8 1046.3,378.4" fill="#9a9c84" stroke="#9a9c84" stroke-width="0.9" stroke-linejoin="round"/>
<polygon points="980.1,469.6 987.2,465.1 986.8,457.7 979.7,462.2" fill="#9a9c84" stroke="#9a9c84" stroke-width="0.9" stroke-linejoin="round"/>
<polygon points="1046.3,378.4 1073.1,362.8 1071.0,362.4 1044.1,378.0" fill="#e7e7c5" stroke="#e7e7c5" stroke-width="0.9" stroke-linejoin="round"/>
<polygon points="1118.0,402.4 1162.5,410.9 1157.7,414.4 1113.0,405.8" fill="#c58992" stroke="#c58992" stroke-width="0.9" stroke-linejoin="round"/>
<polygon points="979.7,462.2 986.8,457.7 983.8,457.0 976.7,461.5" fill="#e7e7c5" stroke="#e7e7c5" stroke-width="0.9" stroke-linejoin="round"/>
<polygon points="961.7,540.1 968.9,535.0 968.5,527.8 961.3,532.9" fill="#9a9c84" stroke="#9a9c84" stroke-width="0.9" stroke-linejoin="round"/>
<polygon points="1300.0,584.3 1301.4,568.5 1296.9,573.8 1295.4,589.7" fill="#7a5862" stroke="#7a5862" stroke-width="0.9" stroke-linejoin="round"/>
<polygon points="961.3,532.9 968.5,527.8 965.5,527.1 958.3,532.1" fill="#e7e7c5" stroke="#e7e7c5" stroke-width="0.9" stroke-linejoin="round"/>
<polygon points="1115.2,392.4 1160.1,400.8 1159.8,413.7 1115.1,405.1" fill="#7b6692" stroke="#7b6692" stroke-width="0.9" stroke-linejoin="round"/>
<polygon points="1299.4,548.3 1304.0,543.1 1304.6,536.6 1300.0,541.8" fill="#9a9c84" stroke="#9a9c84" stroke-width="0.9" stroke-linejoin="round"/>
<polygon points="1113.0,405.8 1157.7,414.4 1157.7,415.8 1113.0,407.1" fill="#bf838c" stroke="#bf838c" stroke-width="0.9" stroke-linejoin="round"/>
<polygon points="1115.9,392.0 1160.8,400.4 1160.1,400.8 1115.2,392.4" fill="#a993c9" stroke="#a993c9" stroke-width="0.9" stroke-linejoin="round"/>
<polygon points="1092.6,353.9 1126.1,341.1 1124.6,342.0 1091.0,354.8" fill="#a993c9" stroke="#a993c9" stroke-width="0.9" stroke-linejoin="round"/>
<polygon points="1118.1,389.9 1162.9,398.3 1158.0,401.7 1113.0,393.3" fill="#c58992" stroke="#c58992" stroke-width="0.9" stroke-linejoin="round"/>
<polygon points="1300.0,541.8 1304.6,536.6 1301.2,535.8 1296.5,541.0" fill="#e7e7c5" stroke="#e7e7c5" stroke-width="0.9" stroke-linejoin="round"/>
<polygon points="1112.8,352.7 1110.4,354.1 1114.4,357.0 1116.8,355.5" fill="#d0d0e6" stroke="#d0d0e6" stroke-width="0.9" stroke-linejoin="round"/>
<polygon points="1295.4,589.7 1296.9,573.8 1284.8,570.9 1283.5,586.7" fill="#83616a" stroke="#83616a" stroke-width="0.9" stroke-linejoin="round"/>
<polygon points="1091.0,354.8 1124.6,342.0 1128.3,350.9 1094.7,363.5" fill="#7b6692" stroke="#7b6692" stroke-width="0.9" stroke-linejoin="round"/>
<polygon points="975.4,419.6 1004.6,402.6 1004.2,394.2 974.9,411.0" fill="#9a9c84" stroke="#9a9c84" stroke-width="0.9" stroke-linejoin="round"/>
<line x1="1283.3" y1="596.9" x2="1293.7" y2="601.9" stroke="#6f5c58" stroke-width="3.2" stroke-linecap="round"/>
<polygon points="974.9,411.0 1004.2,394.2 1002.1,393.8 972.8,410.5" fill="#e7e7c5" stroke="#e7e7c5" stroke-width="0.9" stroke-linejoin="round"/>
<polygon points="1313.7,483.2 1318.2,478.4 1318.8,471.7 1314.3,476.4" fill="#9a9c84" stroke="#9a9c84" stroke-width="0.9" stroke-linejoin="round"/>
<polygon points="1314.3,476.4 1318.8,471.7 1315.4,471.0 1310.8,475.7" fill="#e7e7c5" stroke="#e7e7c5" stroke-width="0.9" stroke-linejoin="round"/>
<polygon points="1113.0,393.3 1158.0,401.7 1158.0,403.1 1113.0,394.6" fill="#bf838c" stroke="#bf838c" stroke-width="0.9" stroke-linejoin="round"/>
<polygon points="972.9,474.2 980.1,469.6 979.7,462.2 972.5,466.8" fill="#9a9c84" stroke="#9a9c84" stroke-width="0.9" stroke-linejoin="round"/>
<polygon points="972.5,466.8 979.7,462.2 976.7,461.5 969.5,466.1" fill="#e7e7c5" stroke="#e7e7c5" stroke-width="0.9" stroke-linejoin="round"/>
<polygon points="1301.4,568.5 1302.9,552.5 1298.3,557.7 1296.9,573.8" fill="#7a5862" stroke="#7a5862" stroke-width="0.9" stroke-linejoin="round"/>
<polygon points="954.4,545.2 961.7,540.1 961.3,532.9 953.9,538.0" fill="#9a9c84" stroke="#9a9c84" stroke-width="0.9" stroke-linejoin="round"/>
<polygon points="1122.2,352.6 1140.9,376.5 1138.5,378.0 1119.8,354.0" fill="#eceef8" stroke="#eceef8" stroke-width="0.9" stroke-linejoin="round"/>
<polygon points="953.9,538.0 961.3,532.9 958.3,532.1 950.9,537.2" fill="#e7e7c5" stroke="#e7e7c5" stroke-width="0.9" stroke-linejoin="round"/>
<polygon points="1119.8,354.0 1138.5,378.0 1135.3,380.9 1116.6,357.0" fill="#c2c3dc" stroke="#c2c3dc" stroke-width="0.9" stroke-linejoin="round"/>
<polygon points="1159.6,400.4 1157.3,402.0 1154.0,404.8 1156.2,403.2" fill="#d0d0e6" stroke="#d0d0e6" stroke-width="0.9" stroke-linejoin="round"/>
<polygon points="1140.9,376.5 1159.6,400.4 1157.3,402.0 1138.5,378.0" fill="#eceef8" stroke="#eceef8" stroke-width="0.9" stroke-linejoin="round"/>
<polygon points="1138.5,378.0 1157.3,402.0 1154.0,404.8 1135.3,380.9" fill="#c2c3dc" stroke="#c2c3dc" stroke-width="0.9" stroke-linejoin="round"/>
<polygon points="1296.9,573.8 1298.3,557.7 1286.2,554.8 1284.8,570.9" fill="#83616a" stroke="#83616a" stroke-width="0.9" stroke-linejoin="round"/>
<polygon points="1163.2,337.5 1186.7,323.0 1187.0,314.1 1163.5,328.4" fill="#9a9c84" stroke="#9a9c84" stroke-width="0.9" stroke-linejoin="round"/>
<polygon points="1163.5,328.4 1187.0,314.1 1184.7,313.7 1161.1,328.0" fill="#e7e7c5" stroke="#e7e7c5" stroke-width="0.9" stroke-linejoin="round"/>
<polygon points="965.6,478.9 972.9,474.2 972.5,466.8 965.2,471.4" fill="#9a9c84" stroke="#9a9c84" stroke-width="0.9" stroke-linejoin="round"/>
<polygon points="1302.9,552.5 1304.4,536.2 1299.8,541.4 1298.3,557.7" fill="#7a5862" stroke="#7a5862" stroke-width="0.9" stroke-linejoin="round"/>
<polygon points="1309.1,488.0 1313.7,483.2 1314.3,476.4 1309.7,481.2" fill="#9a9c84" stroke="#9a9c84" stroke-width="0.9" stroke-linejoin="round"/>
<polygon points="965.2,471.4 972.5,466.8 969.5,466.1 962.2,470.7" fill="#e7e7c5" stroke="#e7e7c5" stroke-width="0.9" stroke-linejoin="round"/>
<polygon points="1309.7,481.2 1314.3,476.4 1310.8,475.7 1306.2,480.5" fill="#e7e7c5" stroke="#e7e7c5" stroke-width="0.9" stroke-linejoin="round"/>
<polygon points="946.9,550.5 954.4,545.2 953.9,538.0 946.4,543.2" fill="#9a9c84" stroke="#9a9c84" stroke-width="0.9" stroke-linejoin="round"/>
<polygon points="1162.5,410.9 1208.7,419.8 1204.1,423.4 1157.7,414.4" fill="#c58992" stroke="#c58992" stroke-width="0.9" stroke-linejoin="round"/>
<polygon points="946.4,543.2 953.9,538.0 950.9,537.2 943.4,542.4" fill="#e7e7c5" stroke="#e7e7c5" stroke-width="0.9" stroke-linejoin="round"/>
<polygon points="1164.7,370.1 1163.8,401.3 1161.6,402.9 1162.4,371.7" fill="#eceef8" stroke="#eceef8" stroke-width="0.9" stroke-linejoin="round"/>
<polygon points="1291.8,557.0 1296.5,551.6 1297.1,545.1 1292.3,550.5" fill="#9a9c84" stroke="#9a9c84" stroke-width="0.9" stroke-linejoin="round"/>
<polygon points="1162.4,371.7 1161.6,402.9 1157.0,402.0 1157.7,370.8" fill="#c2c3dc" stroke="#c2c3dc" stroke-width="0.9" stroke-linejoin="round"/>
<polygon points="1298.3,557.7 1299.8,541.4 1287.5,538.6 1286.2,554.8" fill="#83616a" stroke="#83616a" stroke-width="0.9" stroke-linejoin="round"/>
<polygon points="1292.3,550.5 1297.1,545.1 1293.6,544.3 1288.8,549.7" fill="#e7e7c5" stroke="#e7e7c5" stroke-width="0.9" stroke-linejoin="round"/>
<polygon points="1160.1,400.8 1206.7,409.5 1206.1,422.6 1159.8,413.7" fill="#7b6692" stroke="#7b6692" stroke-width="0.9" stroke-linejoin="round"/>
<polygon points="1164.4,406.7 1184.6,389.8 1186.8,388.2 1166.7,405.1" fill="#b9bad2" stroke="#b9bad2" stroke-width="0.9" stroke-linejoin="round"/>
<polygon points="1157.7,414.4 1204.1,423.4 1204.1,424.8 1157.7,415.8" fill="#bf838c" stroke="#bf838c" stroke-width="0.9" stroke-linejoin="round"/>
<polygon points="1160.8,400.4 1207.3,409.1 1206.7,409.5 1160.1,400.8" fill="#a993c9" stroke="#a993c9" stroke-width="0.9" stroke-linejoin="round"/>
<polygon points="1162.9,398.3 1209.3,406.9 1204.7,410.5 1158.0,401.7" fill="#c58992" stroke="#c58992" stroke-width="0.9" stroke-linejoin="round"/>
<polygon points="1161.3,402.7 1181.4,385.7 1184.6,389.8 1164.4,406.7" fill="#c2c3dc" stroke="#c2c3dc" stroke-width="0.9" stroke-linejoin="round"/>
<polygon points="1304.4,536.2 1305.9,519.7 1301.3,524.8 1299.8,541.4" fill="#7a5862" stroke="#7a5862" stroke-width="0.9" stroke-linejoin="round"/>
<polygon points="1126.1,341.1 1161.1,327.8 1159.6,328.7 1124.6,342.0" fill="#a993c9" stroke="#a993c9" stroke-width="0.9" stroke-linejoin="round"/>
<polygon points="1210.5,373.2 1232.6,357.3 1233.3,344.1 1211.1,359.6" fill="#9a9c84" stroke="#9a9c84" stroke-width="0.9" stroke-linejoin="round"/>
<polygon points="1124.6,342.0 1159.6,328.7 1163.3,337.8 1128.3,350.9" fill="#7b6692" stroke="#7b6692" stroke-width="0.9" stroke-linejoin="round"/>
<polygon points="958.2,483.7 965.6,478.9 965.2,471.4 957.7,476.1" fill="#9a9c84" stroke="#9a9c84" stroke-width="0.9" stroke-linejoin="round"/>
<polygon points="1211.1,359.6 1233.3,344.1 1229.7,343.5 1207.4,359.0" fill="#e7e7c5" stroke="#e7e7c5" stroke-width="0.9" stroke-linejoin="round"/>
<polygon points="957.7,476.1 965.2,471.4 962.2,470.7 954.7,475.4" fill="#e7e7c5" stroke="#e7e7c5" stroke-width="0.9" stroke-linejoin="round"/>
<polygon points="939.3,555.8 946.9,550.5 946.4,543.2 938.8,548.5" fill="#9a9c84" stroke="#9a9c84" stroke-width="0.9" stroke-linejoin="round"/>
<polygon points="1158.0,401.7 1204.7,410.5 1204.6,411.9 1158.0,403.1" fill="#bf838c" stroke="#bf838c" stroke-width="0.9" stroke-linejoin="round"/>
<polygon points="1304.4,492.9 1309.1,488.0 1309.7,481.2 1305.0,486.1" fill="#9a9c84" stroke="#9a9c84" stroke-width="0.9" stroke-linejoin="round"/>
<polygon points="938.8,548.5 946.4,543.2 943.4,542.4 935.8,547.7" fill="#e7e7c5" stroke="#e7e7c5" stroke-width="0.9" stroke-linejoin="round"/>
<polygon points="1299.8,541.4 1301.3,524.8 1288.9,522.0 1287.5,538.6" fill="#83616a" stroke="#83616a" stroke-width="0.9" stroke-linejoin="round"/>
<polygon points="1090.9,370.6 1116.9,354.9 1117.0,346.1 1090.9,361.6" fill="#9a9c84" stroke="#9a9c84" stroke-width="0.9" stroke-linejoin="round"/>
<polygon points="1305.0,486.1 1309.7,481.2 1306.2,480.5 1301.5,485.4" fill="#e7e7c5" stroke="#e7e7c5" stroke-width="0.9" stroke-linejoin="round"/>
<polygon points="1090.9,361.6 1117.0,346.1 1114.7,345.7 1088.6,361.2" fill="#e7e7c5" stroke="#e7e7c5" stroke-width="0.9" stroke-linejoin="round"/>
<polygon points="1165.5,338.1 1164.7,370.1 1162.4,371.7 1163.2,339.6" fill="#eceef8" stroke="#eceef8" stroke-width="0.9" stroke-linejoin="round"/>
<polygon points="1286.9,562.5 1291.8,557.0 1292.3,550.5 1287.5,555.9" fill="#9a9c84" stroke="#9a9c84" stroke-width="0.9" stroke-linejoin="round"/>
<polygon points="1163.2,339.6 1162.4,371.7 1157.7,370.8 1158.5,338.8" fill="#c2c3dc" stroke="#c2c3dc" stroke-width="0.9" stroke-linejoin="round"/>
<polygon points="1287.5,555.9 1292.3,550.5 1288.8,549.7 1284.0,555.1" fill="#e7e7c5" stroke="#e7e7c5" stroke-width="0.9" stroke-linejoin="round"/>
<polygon points="1305.9,519.7 1307.4,503.0 1302.8,508.0 1301.3,524.8" fill="#7a5862" stroke="#7a5862" stroke-width="0.9" stroke-linejoin="round"/>
<polygon points="1165.5,338.1 1163.2,339.6 1158.5,338.8 1160.8,337.4" fill="#d0d0e6" stroke="#d0d0e6" stroke-width="0.9" stroke-linejoin="round"/>
<polygon points="1257.8,405.2 1278.5,388.1 1279.2,378.5 1258.4,395.3" fill="#9a9c84" stroke="#9a9c84" stroke-width="0.9" stroke-linejoin="round"/>
<polygon points="1258.4,395.3 1279.2,378.5 1276.2,378.0 1255.4,394.8" fill="#e7e7c5" stroke="#e7e7c5" stroke-width="0.9" stroke-linejoin="round"/>
<polygon points="1161.1,327.8 1159.6,328.7 1163.3,337.8 1164.8,336.9" fill="#8c77a6" stroke="#8c77a6" stroke-width="0.9" stroke-linejoin="round"/>
<polygon points="950.6,488.5 958.2,483.7 957.7,476.1 950.1,480.9" fill="#9a9c84" stroke="#9a9c84" stroke-width="0.9" stroke-linejoin="round"/>
<polygon points="1301.3,524.8 1302.8,508.0 1290.4,505.3 1288.9,522.0" fill="#83616a" stroke="#83616a" stroke-width="0.9" stroke-linejoin="round"/>
<polygon points="931.6,561.3 939.3,555.8 938.8,548.5 931.1,553.9" fill="#9a9c84" stroke="#9a9c84" stroke-width="0.9" stroke-linejoin="round"/>
<polygon points="950.1,480.9 957.7,476.1 954.7,475.4 947.1,480.2" fill="#e7e7c5" stroke="#e7e7c5" stroke-width="0.9" stroke-linejoin="round"/>
<polygon points="1208.7,419.8 1256.7,429.0 1252.3,432.7 1204.1,423.4" fill="#c58992" stroke="#c58992" stroke-width="0.9" stroke-linejoin="round"/>
<polygon points="1184.6,389.8 1205.5,372.3 1207.7,370.8 1186.8,388.2" fill="#b9bad2" stroke="#b9bad2" stroke-width="0.9" stroke-linejoin="round"/>
<polygon points="931.1,553.9 938.8,548.5 935.8,547.7 928.1,553.1" fill="#e7e7c5" stroke="#e7e7c5" stroke-width="0.9" stroke-linejoin="round"/>
<polygon points="1181.4,385.7 1202.2,368.2 1205.5,372.3 1184.6,389.8" fill="#c2c3dc" stroke="#c2c3dc" stroke-width="0.9" stroke-linejoin="round"/>
<polygon points="1017.9,404.0 1046.5,387.1 1046.3,378.4 1017.6,395.1" fill="#9a9c84" stroke="#9a9c84" stroke-width="0.9" stroke-linejoin="round"/>
<polygon points="1206.7,409.5 1255.1,418.6 1254.2,431.9 1206.1,422.6" fill="#7b6692" stroke="#7b6692" stroke-width="0.9" stroke-linejoin="round"/>
<polygon points="1017.6,395.1 1046.3,378.4 1044.1,378.0 1015.3,394.6" fill="#e7e7c5" stroke="#e7e7c5" stroke-width="0.9" stroke-linejoin="round"/>
<polygon points="1307.4,503.0 1309.0,486.0 1304.3,490.9 1302.8,508.0" fill="#7a5862" stroke="#7a5862" stroke-width="0.9" stroke-linejoin="round"/>
<polygon points="1306.1,439.7 1325.4,421.3 1326.3,411.7 1307.0,429.9" fill="#9a9c84" stroke="#9a9c84" stroke-width="0.9" stroke-linejoin="round"/>
<polygon points="1282.1,568.0 1286.9,562.5 1287.5,555.9 1282.6,561.4" fill="#9a9c84" stroke="#9a9c84" stroke-width="0.9" stroke-linejoin="round"/>
<polygon points="1204.1,423.4 1252.3,432.7 1252.3,434.1 1204.1,424.8" fill="#bf838c" stroke="#bf838c" stroke-width="0.9" stroke-linejoin="round"/>
<polygon points="1163.5,329.3 1198.7,354.3 1194.3,362.1 1159.4,337.2" fill="#7b6692" stroke="#7b6692" stroke-width="0.9" stroke-linejoin="round"/>
<polygon points="1207.3,409.1 1255.6,418.1 1255.1,418.6 1206.7,409.5" fill="#a993c9" stroke="#a993c9" stroke-width="0.9" stroke-linejoin="round"/>
<polygon points="1209.3,406.9 1257.6,415.9 1253.2,419.6 1204.7,410.5" fill="#c58992" stroke="#c58992" stroke-width="0.9" stroke-linejoin="round"/>
<polygon points="1307.0,429.9 1326.3,411.7 1323.3,411.2 1303.9,429.3" fill="#e7e7c5" stroke="#e7e7c5" stroke-width="0.9" stroke-linejoin="round"/>
<polygon points="1165.0,328.4 1200.1,353.3 1198.7,354.3 1163.5,329.3" fill="#a993c9" stroke="#a993c9" stroke-width="0.9" stroke-linejoin="round"/>
<polygon points="1282.6,561.4 1287.5,555.9 1284.0,555.1 1279.1,560.6" fill="#e7e7c5" stroke="#e7e7c5" stroke-width="0.9" stroke-linejoin="round"/>
<line x1="1272.2" y1="591.6" x2="1283.3" y2="596.9" stroke="#6f5c58" stroke-width="3.2" stroke-linecap="round"/>
<polygon points="1302.8,508.0 1304.3,490.9 1291.8,488.2 1290.4,505.3" fill="#83616a" stroke="#83616a" stroke-width="0.9" stroke-linejoin="round"/>
<polygon points="1204.4,366.6 1202.2,368.2 1205.5,372.3 1207.7,370.8" fill="#d0d0e6" stroke="#d0d0e6" stroke-width="0.9" stroke-linejoin="round"/>
<polygon points="1214.4,370.0 1231.7,413.5 1229.6,415.2 1212.3,371.6" fill="#eceef8" stroke="#eceef8" stroke-width="0.9" stroke-linejoin="round"/>
<polygon points="944.2,437.8 975.4,419.6 974.9,411.0 943.6,428.9" fill="#9a9c84" stroke="#9a9c84" stroke-width="0.9" stroke-linejoin="round"/>
<polygon points="943.0,493.4 950.6,488.5 950.1,480.9 942.4,485.8" fill="#9a9c84" stroke="#9a9c84" stroke-width="0.9" stroke-linejoin="round"/>
<polygon points="923.8,566.8 931.6,561.3 931.1,553.9 923.2,559.4" fill="#9a9c84" stroke="#9a9c84" stroke-width="0.9" stroke-linejoin="round"/>
<polygon points="1212.3,371.6 1229.6,415.2 1225.2,416.6 1207.8,373.1" fill="#c2c3dc" stroke="#c2c3dc" stroke-width="0.9" stroke-linejoin="round"/>
<polygon points="942.4,485.8 950.1,480.9 947.1,480.2 939.4,485.0" fill="#e7e7c5" stroke="#e7e7c5" stroke-width="0.9" stroke-linejoin="round"/>
<polygon points="943.6,428.9 974.9,411.0 972.8,410.5 941.4,428.4" fill="#e7e7c5" stroke="#e7e7c5" stroke-width="0.9" stroke-linejoin="round"/>
<polygon points="1296.6,501.1 1301.4,496.0 1302.0,489.2 1297.2,494.2" fill="#9a9c84" stroke="#9a9c84" stroke-width="0.9" stroke-linejoin="round"/>
<polygon points="1204.7,410.5 1253.2,419.6 1253.1,421.0 1204.6,411.9" fill="#bf838c" stroke="#bf838c" stroke-width="0.9" stroke-linejoin="round"/>
<polygon points="923.2,559.4 931.1,553.9 928.1,553.1 920.2,558.5" fill="#e7e7c5" stroke="#e7e7c5" stroke-width="0.9" stroke-linejoin="round"/>
<polygon points="1214.4,370.0 1212.3,371.6 1207.8,373.1 1210.0,371.6" fill="#d0d0e6" stroke="#d0d0e6" stroke-width="0.9" stroke-linejoin="round"/>
<polygon points="1297.2,494.2 1302.0,489.2 1298.5,488.5 1293.6,493.4" fill="#e7e7c5" stroke="#e7e7c5" stroke-width="0.9" stroke-linejoin="round"/>
<polygon points="1309.0,486.0 1310.6,468.8 1305.9,473.5 1304.3,490.9" fill="#7a5862" stroke="#7a5862" stroke-width="0.9" stroke-linejoin="round"/>
<polygon points="1234.0,414.3 1251.8,400.4 1249.7,402.0 1231.9,416.0" fill="#eceef8" stroke="#eceef8" stroke-width="0.9" stroke-linejoin="round"/>
<polygon points="1198.7,354.3 1234.3,379.6 1229.7,387.3 1194.3,362.1" fill="#7b6692" stroke="#7b6692" stroke-width="0.9" stroke-linejoin="round"/>
<polygon points="1231.9,416.0 1249.7,402.0 1253.0,406.2 1235.2,420.1" fill="#c2c3dc" stroke="#c2c3dc" stroke-width="0.9" stroke-linejoin="round"/>
<polygon points="1200.1,353.3 1235.6,378.6 1234.3,379.6 1198.7,354.3" fill="#a993c9" stroke="#a993c9" stroke-width="0.9" stroke-linejoin="round"/>
<polygon points="1304.3,490.9 1305.9,473.5 1293.2,470.9 1291.8,488.2" fill="#83616a" stroke="#83616a" stroke-width="0.9" stroke-linejoin="round"/>
<polygon points="1277.1,573.7 1282.1,568.0 1282.6,561.4 1277.6,567.0" fill="#9a9c84" stroke="#9a9c84" stroke-width="0.9" stroke-linejoin="round"/>
<polygon points="1277.6,567.0 1282.6,561.4 1279.1,560.6 1274.1,566.2" fill="#e7e7c5" stroke="#e7e7c5" stroke-width="0.9" stroke-linejoin="round"/>
<polygon points="1256.7,429.0 1306.5,438.5 1302.5,442.4 1252.3,432.7" fill="#c58992" stroke="#c58992" stroke-width="0.9" stroke-linejoin="round"/>
<polygon points="1251.8,400.4 1249.7,402.0 1253.0,406.2 1255.1,404.5" fill="#d0d0e6" stroke="#d0d0e6" stroke-width="0.9" stroke-linejoin="round"/>
<polygon points="915.9,572.4 923.8,566.8 923.2,559.4 915.2,565.0" fill="#9a9c84" stroke="#9a9c84" stroke-width="0.9" stroke-linejoin="round"/>
<polygon points="935.2,498.4 943.0,493.4 942.4,485.8 934.6,490.7" fill="#9a9c84" stroke="#9a9c84" stroke-width="0.9" stroke-linejoin="round"/>
<polygon points="1310.6,468.8 1312.2,451.3 1307.5,455.9 1305.9,473.5" fill="#7a5862" stroke="#7a5862" stroke-width="0.9" stroke-linejoin="round"/>
<polygon points="915.2,565.0 923.2,559.4 920.2,558.5 912.2,564.1" fill="#e7e7c5" stroke="#e7e7c5" stroke-width="0.9" stroke-linejoin="round"/>
<polygon points="934.6,490.7 942.4,485.8 939.4,485.0 931.5,490.0" fill="#e7e7c5" stroke="#e7e7c5" stroke-width="0.9" stroke-linejoin="round"/>
<polygon points="1255.1,418.6 1305.3,428.0 1304.2,441.5 1254.2,431.9" fill="#7b6692" stroke="#7b6692" stroke-width="0.9" stroke-linejoin="round"/>
<polygon points="1234.3,379.6 1270.4,405.3 1265.6,412.9 1229.7,387.3" fill="#7b6692" stroke="#7b6692" stroke-width="0.9" stroke-linejoin="round"/>
<polygon points="1291.7,506.2 1296.6,501.1 1297.2,494.2 1292.3,499.3" fill="#9a9c84" stroke="#9a9c84" stroke-width="0.9" stroke-linejoin="round"/>
<polygon points="1235.6,378.6 1271.6,404.2 1270.4,405.3 1234.3,379.6" fill="#a993c9" stroke="#a993c9" stroke-width="0.9" stroke-linejoin="round"/>
<polygon points="1252.3,432.7 1302.5,442.4 1302.3,443.8 1252.3,434.1" fill="#bf838c" stroke="#bf838c" stroke-width="0.9" stroke-linejoin="round"/>
<polygon points="1292.3,499.3 1297.2,494.2 1293.6,493.4 1288.7,498.5" fill="#e7e7c5" stroke="#e7e7c5" stroke-width="0.9" stroke-linejoin="round"/>
<polygon points="1255.6,418.1 1305.9,427.5 1305.3,428.0 1255.1,418.6" fill="#a993c9" stroke="#a993c9" stroke-width="0.9" stroke-linejoin="round"/>
<polygon points="1138.1,353.1 1163.2,337.5 1163.5,328.4 1138.2,343.8" fill="#9a9c84" stroke="#9a9c84" stroke-width="0.9" stroke-linejoin="round"/>
<polygon points="1257.6,415.9 1307.7,425.2 1303.6,429.1 1253.2,419.6" fill="#c58992" stroke="#c58992" stroke-width="0.9" stroke-linejoin="round"/>
<polygon points="1305.9,473.5 1307.5,455.9 1294.7,453.4 1293.2,470.9" fill="#83616a" stroke="#83616a" stroke-width="0.9" stroke-linejoin="round"/>
<polygon points="1138.2,343.8 1163.5,328.4 1161.1,328.0 1135.8,343.4" fill="#e7e7c5" stroke="#e7e7c5" stroke-width="0.9" stroke-linejoin="round"/>
<polygon points="1306.5,438.5 1302.5,442.4 1302.3,443.8 1306.4,439.9" fill="#bf838c" stroke="#bf838c" stroke-width="0.9" stroke-linejoin="round"/>
<polygon points="1312.2,451.3 1313.8,433.5 1309.1,438.0 1307.5,455.9" fill="#7a5862" stroke="#7a5862" stroke-width="0.9" stroke-linejoin="round"/>
<polygon points="1272.0,579.4 1277.1,573.7 1277.6,567.0 1272.6,572.8" fill="#9a9c84" stroke="#9a9c84" stroke-width="0.9" stroke-linejoin="round"/>
<polygon points="1270.4,405.3 1306.9,431.3 1301.9,438.9 1265.6,412.9" fill="#7b6692" stroke="#7b6692" stroke-width="0.9" stroke-linejoin="round"/>
<polygon points="1253.2,419.6 1303.6,429.1 1303.5,430.5 1253.1,421.0" fill="#bf838c" stroke="#bf838c" stroke-width="0.9" stroke-linejoin="round"/>
<polygon points="907.8,578.1 915.9,572.4 915.2,565.0 907.1,570.6" fill="#9a9c84" stroke="#9a9c84" stroke-width="0.9" stroke-linejoin="round"/>
<polygon points="1271.6,404.2 1308.1,430.2 1306.9,431.3 1270.4,405.3" fill="#a993c9" stroke="#a993c9" stroke-width="0.9" stroke-linejoin="round"/>
<polygon points="1313.8,433.5 1309.1,438.0 1296.2,435.6 1301.0,431.1" fill="#8a6670" stroke="#8a6670" stroke-width="0.9" stroke-linejoin="round"/>
<polygon points="1308.1,430.2 1306.9,431.3 1301.9,438.9 1303.1,437.7" fill="#8c77a6" stroke="#8c77a6" stroke-width="0.9" stroke-linejoin="round"/>
<polygon points="1305.9,427.5 1305.3,428.0 1304.2,441.5 1304.7,441.0" fill="#8c77a6" stroke="#8c77a6" stroke-width="0.9" stroke-linejoin="round"/>
<polygon points="927.2,503.5 935.2,498.4 934.6,490.7 926.6,495.8" fill="#9a9c84" stroke="#9a9c84" stroke-width="0.9" stroke-linejoin="round"/>
<polygon points="1272.6,572.8 1277.6,567.0 1274.1,566.2 1269.0,571.9" fill="#e7e7c5" stroke="#e7e7c5" stroke-width="0.9" stroke-linejoin="round"/>
<polygon points="907.1,570.6 915.2,565.0 912.2,564.1 904.0,569.7" fill="#e7e7c5" stroke="#e7e7c5" stroke-width="0.9" stroke-linejoin="round"/>
<polygon points="926.6,495.8 934.6,490.7 931.5,490.0 923.6,495.0" fill="#e7e7c5" stroke="#e7e7c5" stroke-width="0.9" stroke-linejoin="round"/>
<polygon points="1307.5,455.9 1309.1,438.0 1296.2,435.6 1294.7,453.4" fill="#83616a" stroke="#83616a" stroke-width="0.9" stroke-linejoin="round"/>
<polygon points="899.0,645.6 897.4,629.4 889.3,635.6 890.9,651.8" fill="#7a5862" stroke="#7a5862" stroke-width="0.9" stroke-linejoin="round"/>
<polygon points="1307.7,425.2 1303.6,429.1 1303.5,430.5 1307.6,426.7" fill="#bf838c" stroke="#bf838c" stroke-width="0.9" stroke-linejoin="round"/>
<polygon points="890.9,651.8 889.3,635.6 878.6,632.2 880.3,648.3" fill="#83616a" stroke="#83616a" stroke-width="0.9" stroke-linejoin="round"/>
<polygon points="1286.8,511.4 1291.7,506.2 1292.3,499.3 1287.3,504.5" fill="#9a9c84" stroke="#9a9c84" stroke-width="0.9" stroke-linejoin="round"/>
<polygon points="1287.3,504.5 1292.3,499.3 1288.7,498.5 1283.7,503.7" fill="#e7e7c5" stroke="#e7e7c5" stroke-width="0.9" stroke-linejoin="round"/>
<polygon points="1186.8,390.2 1210.5,373.2 1211.1,359.6 1187.3,376.2" fill="#9a9c84" stroke="#9a9c84" stroke-width="0.9" stroke-linejoin="round"/>
<polygon points="899.5,583.9 907.8,578.1 907.1,570.6 898.8,576.4" fill="#9a9c84" stroke="#9a9c84" stroke-width="0.9" stroke-linejoin="round"/>
<polygon points="1063.0,387.5 1090.9,370.6 1090.9,361.6 1062.9,378.2" fill="#9a9c84" stroke="#9a9c84" stroke-width="0.9" stroke-linejoin="round"/>
<polygon points="1187.3,376.2 1211.1,359.6 1207.4,359.0 1183.5,375.6" fill="#e7e7c5" stroke="#e7e7c5" stroke-width="0.9" stroke-linejoin="round"/>
<polygon points="898.8,576.4 907.1,570.6 904.0,569.7 895.8,575.5" fill="#e7e7c5" stroke="#e7e7c5" stroke-width="0.9" stroke-linejoin="round"/>
<polygon points="919.2,508.7 927.2,503.5 926.6,495.8 918.5,500.9" fill="#9a9c84" stroke="#9a9c84" stroke-width="0.9" stroke-linejoin="round"/>
<polygon points="1062.9,378.2 1090.9,361.6 1088.6,361.2 1060.5,377.8" fill="#e7e7c5" stroke="#e7e7c5" stroke-width="0.9" stroke-linejoin="round"/>
<polygon points="1266.9,585.3 1272.0,579.4 1272.6,572.8 1267.4,578.6" fill="#9a9c84" stroke="#9a9c84" stroke-width="0.9" stroke-linejoin="round"/>
<polygon points="918.5,500.9 926.6,495.8 923.6,495.0 915.4,500.1" fill="#e7e7c5" stroke="#e7e7c5" stroke-width="0.9" stroke-linejoin="round"/>
<polygon points="1267.4,578.6 1272.6,572.8 1269.0,571.9 1263.8,577.7" fill="#e7e7c5" stroke="#e7e7c5" stroke-width="0.9" stroke-linejoin="round"/>
<line x1="1308.7" y1="435.2" x2="1294.0" y2="470.0" stroke="#c9a9a3" stroke-width="2.8" stroke-linecap="round"/>
<polygon points="897.4,629.4 895.9,613.1 887.6,619.1 889.3,635.6" fill="#7a5862" stroke="#7a5862" stroke-width="0.9" stroke-linejoin="round"/>
<polygon points="889.3,635.6 887.6,619.1 876.9,615.8 878.6,632.2" fill="#83616a" stroke="#83616a" stroke-width="0.9" stroke-linejoin="round"/>
<polygon points="1281.7,516.7 1286.8,511.4 1287.3,504.5 1282.3,509.7" fill="#9a9c84" stroke="#9a9c84" stroke-width="0.9" stroke-linejoin="round"/>
<polygon points="1282.3,509.7 1287.3,504.5 1283.7,503.7 1278.6,508.9" fill="#e7e7c5" stroke="#e7e7c5" stroke-width="0.9" stroke-linejoin="round"/>
<polygon points="1235.6,423.6 1257.8,405.2 1258.4,395.3 1236.1,413.4" fill="#9a9c84" stroke="#9a9c84" stroke-width="0.9" stroke-linejoin="round"/>
<polygon points="891.2,589.8 899.5,583.9 898.8,576.4 890.4,582.2" fill="#9a9c84" stroke="#9a9c84" stroke-width="0.9" stroke-linejoin="round"/>
<polygon points="987.2,422.2 1017.9,404.0 1017.6,395.1 986.8,413.0" fill="#9a9c84" stroke="#9a9c84" stroke-width="0.9" stroke-linejoin="round"/>
<polygon points="890.4,582.2 898.8,576.4 895.8,575.5 887.3,581.3" fill="#e7e7c5" stroke="#e7e7c5" stroke-width="0.9" stroke-linejoin="round"/>
<polygon points="1236.1,413.4 1258.4,395.3 1255.4,394.8 1233.0,412.8" fill="#e7e7c5" stroke="#e7e7c5" stroke-width="0.9" stroke-linejoin="round"/>
<polygon points="986.8,413.0 1017.6,395.1 1015.3,394.6 984.5,412.5" fill="#e7e7c5" stroke="#e7e7c5" stroke-width="0.9" stroke-linejoin="round"/>
<line x1="1260.3" y1="585.9" x2="1272.2" y2="591.6" stroke="#6f5c58" stroke-width="3.2" stroke-linecap="round"/>
<polygon points="911.0,514.0 919.2,508.7 918.5,500.9 910.3,506.1" fill="#9a9c84" stroke="#9a9c84" stroke-width="0.9" stroke-linejoin="round"/>
<polygon points="910.3,506.1 918.5,500.9 915.4,500.1 907.2,505.3" fill="#e7e7c5" stroke="#e7e7c5" stroke-width="0.9" stroke-linejoin="round"/>
<polygon points="1261.7,591.2 1266.9,585.3 1267.4,578.6 1262.2,584.5" fill="#9a9c84" stroke="#9a9c84" stroke-width="0.9" stroke-linejoin="round"/>
<polygon points="895.9,613.1 894.3,596.4 886.0,602.4 887.6,619.1" fill="#7a5862" stroke="#7a5862" stroke-width="0.9" stroke-linejoin="round"/>
<polygon points="910.7,457.2 944.2,437.8 943.6,428.9 909.9,448.1" fill="#9a9c84" stroke="#9a9c84" stroke-width="0.9" stroke-linejoin="round"/>
<polygon points="887.6,619.1 886.0,602.4 875.1,599.1 876.9,615.8" fill="#83616a" stroke="#83616a" stroke-width="0.9" stroke-linejoin="round"/>
<polygon points="1262.2,584.5 1267.4,578.6 1263.8,577.7 1258.5,583.6" fill="#e7e7c5" stroke="#e7e7c5" stroke-width="0.9" stroke-linejoin="round"/>
<polygon points="909.9,448.1 943.6,428.9 941.4,428.4 907.7,447.6" fill="#e7e7c5" stroke="#e7e7c5" stroke-width="0.9" stroke-linejoin="round"/>
<polygon points="1285.5,459.5 1306.1,439.7 1307.0,429.9 1286.3,449.4" fill="#9a9c84" stroke="#9a9c84" stroke-width="0.9" stroke-linejoin="round"/>
<polygon points="1286.3,449.4 1307.0,429.9 1303.9,429.3 1283.1,448.7" fill="#e7e7c5" stroke="#e7e7c5" stroke-width="0.9" stroke-linejoin="round"/>
<polygon points="1276.6,522.1 1281.7,516.7 1282.3,509.7 1277.1,515.1" fill="#9a9c84" stroke="#9a9c84" stroke-width="0.9" stroke-linejoin="round"/>
<polygon points="1277.1,515.1 1282.3,509.7 1278.6,508.9 1273.4,514.3" fill="#e7e7c5" stroke="#e7e7c5" stroke-width="0.9" stroke-linejoin="round"/>
<polygon points="902.6,519.3 911.0,514.0 910.3,506.1 901.9,511.4" fill="#9a9c84" stroke="#9a9c84" stroke-width="0.9" stroke-linejoin="round"/>
<polygon points="901.9,511.4 910.3,506.1 907.2,505.3 898.8,510.6" fill="#e7e7c5" stroke="#e7e7c5" stroke-width="0.9" stroke-linejoin="round"/>
<polygon points="894.3,596.4 892.7,579.5 884.3,585.4 886.0,602.4" fill="#7a5862" stroke="#7a5862" stroke-width="0.9" stroke-linejoin="round"/>
<polygon points="886.0,602.4 884.3,585.4 873.4,582.2 875.1,599.1" fill="#83616a" stroke="#83616a" stroke-width="0.9" stroke-linejoin="round"/>
<polygon points="1256.3,597.3 1261.7,591.2 1262.2,584.5 1256.8,590.5" fill="#9a9c84" stroke="#9a9c84" stroke-width="0.9" stroke-linejoin="round"/>
<line x1="1294.0" y1="470.0" x2="1279.0" y2="505.7" stroke="#c9a9a3" stroke-width="2.8" stroke-linecap="round"/>
<polygon points="877.2,599.7 885.8,593.6 885.1,586.0 876.4,592.0" fill="#9a9c84" stroke="#9a9c84" stroke-width="0.9" stroke-linejoin="round"/>
<polygon points="876.4,592.0 885.1,586.0 882.0,585.1 873.3,591.1" fill="#e7e7c5" stroke="#e7e7c5" stroke-width="0.9" stroke-linejoin="round"/>
<polygon points="1256.8,590.5 1262.2,584.5 1258.5,583.6 1253.2,589.5" fill="#e7e7c5" stroke="#e7e7c5" stroke-width="0.9" stroke-linejoin="round"/>
<polygon points="894.1,524.8 902.6,519.3 901.9,511.4 893.4,516.8" fill="#9a9c84" stroke="#9a9c84" stroke-width="0.9" stroke-linejoin="round"/>
<polygon points="893.4,516.8 901.9,511.4 898.8,510.6 890.2,516.0" fill="#e7e7c5" stroke="#e7e7c5" stroke-width="0.9" stroke-linejoin="round"/>
<polygon points="1271.3,527.6 1276.6,522.1 1277.1,515.1 1271.9,520.5" fill="#9a9c84" stroke="#9a9c84" stroke-width="0.9" stroke-linejoin="round"/>
<polygon points="892.7,579.5 891.1,562.4 882.6,568.1 884.3,585.4" fill="#7a5862" stroke="#7a5862" stroke-width="0.9" stroke-linejoin="round"/>
<polygon points="1271.9,520.5 1277.1,515.1 1273.4,514.3 1268.1,519.7" fill="#e7e7c5" stroke="#e7e7c5" stroke-width="0.9" stroke-linejoin="round"/>
<polygon points="884.3,585.4 882.6,568.1 871.6,565.0 873.4,582.2" fill="#83616a" stroke="#83616a" stroke-width="0.9" stroke-linejoin="round"/>
<polygon points="868.4,605.9 877.2,599.7 876.4,592.0 867.6,598.2" fill="#9a9c84" stroke="#9a9c84" stroke-width="0.9" stroke-linejoin="round"/>
<polygon points="1111.0,369.9 1138.1,353.1 1138.2,343.8 1111.1,360.2" fill="#9a9c84" stroke="#9a9c84" stroke-width="0.9" stroke-linejoin="round"/>
<polygon points="867.6,598.2 876.4,592.0 873.3,591.1 864.5,597.2" fill="#e7e7c5" stroke="#e7e7c5" stroke-width="0.9" stroke-linejoin="round"/>
<polygon points="1111.1,360.2 1138.2,343.8 1135.8,343.4 1108.6,359.8" fill="#e7e7c5" stroke="#e7e7c5" stroke-width="0.9" stroke-linejoin="round"/>
<polygon points="1250.9,603.4 1256.3,597.3 1256.8,590.5 1251.4,596.6" fill="#9a9c84" stroke="#9a9c84" stroke-width="0.9" stroke-linejoin="round"/>
<polygon points="1251.4,596.6 1256.8,590.5 1253.2,589.5 1247.7,595.6" fill="#e7e7c5" stroke="#e7e7c5" stroke-width="0.9" stroke-linejoin="round"/>
<polygon points="885.5,530.3 894.1,524.8 893.4,516.8 884.7,522.3" fill="#9a9c84" stroke="#9a9c84" stroke-width="0.9" stroke-linejoin="round"/>
<polygon points="884.7,522.3 893.4,516.8 890.2,516.0 881.5,521.5" fill="#e7e7c5" stroke="#e7e7c5" stroke-width="0.9" stroke-linejoin="round"/>
<polygon points="891.1,562.4 889.4,545.0 880.8,550.6 882.6,568.1" fill="#7a5862" stroke="#7a5862" stroke-width="0.9" stroke-linejoin="round"/>
<polygon points="882.6,568.1 880.8,550.6 869.8,547.5 871.6,565.0" fill="#83616a" stroke="#83616a" stroke-width="0.9" stroke-linejoin="round"/>
<polygon points="859.5,612.2 868.4,605.9 867.6,598.2 858.7,604.4" fill="#9a9c84" stroke="#9a9c84" stroke-width="0.9" stroke-linejoin="round"/>
<polygon points="1266.0,533.2 1271.3,527.6 1271.9,520.5 1266.5,526.1" fill="#9a9c84" stroke="#9a9c84" stroke-width="0.9" stroke-linejoin="round"/>
<polygon points="858.7,604.4 867.6,598.2 864.5,597.2 855.5,603.4" fill="#e7e7c5" stroke="#e7e7c5" stroke-width="0.9" stroke-linejoin="round"/>
<polygon points="1266.5,526.1 1271.9,520.5 1268.1,519.7 1262.8,525.2" fill="#e7e7c5" stroke="#e7e7c5" stroke-width="0.9" stroke-linejoin="round"/>
<line x1="1279.0" y1="505.7" x2="1263.5" y2="542.3" stroke="#c9a9a3" stroke-width="2.8" stroke-linecap="round"/>
<polygon points="1033.1,405.6 1063.0,387.5 1062.9,378.2 1032.8,396.0" fill="#9a9c84" stroke="#9a9c84" stroke-width="0.9" stroke-linejoin="round"/>
<polygon points="1245.4,609.7 1250.9,603.4 1251.4,596.6 1245.9,602.8" fill="#9a9c84" stroke="#9a9c84" stroke-width="0.9" stroke-linejoin="round"/>
<polygon points="1032.8,396.0 1062.9,378.2 1060.5,377.8 1030.4,395.6" fill="#e7e7c5" stroke="#e7e7c5" stroke-width="0.9" stroke-linejoin="round"/>
<polygon points="1161.3,408.5 1186.8,390.2 1187.3,376.2 1161.7,394.1" fill="#9a9c84" stroke="#9a9c84" stroke-width="0.9" stroke-linejoin="round"/>
<polygon points="1245.9,602.8 1251.4,596.6 1247.7,595.6 1242.2,601.9" fill="#e7e7c5" stroke="#e7e7c5" stroke-width="0.9" stroke-linejoin="round"/>
<polygon points="1161.7,394.1 1187.3,376.2 1183.5,375.6 1157.9,393.4" fill="#e7e7c5" stroke="#e7e7c5" stroke-width="0.9" stroke-linejoin="round"/>
<polygon points="889.4,545.0 887.7,527.3 879.1,532.8 880.8,550.6" fill="#7a5862" stroke="#7a5862" stroke-width="0.9" stroke-linejoin="round"/>
<polygon points="880.8,550.6 879.1,532.8 867.9,529.8 869.8,547.5" fill="#83616a" stroke="#83616a" stroke-width="0.9" stroke-linejoin="round"/>
<polygon points="850.4,618.6 859.5,612.2 858.7,604.4 849.5,610.8" fill="#9a9c84" stroke="#9a9c84" stroke-width="0.9" stroke-linejoin="round"/>
<line x1="1247.7" y1="579.9" x2="1260.3" y2="585.9" stroke="#6f5c58" stroke-width="3.2" stroke-linecap="round"/>
<polygon points="849.5,610.8 858.7,604.4 855.5,603.4 846.4,609.8" fill="#e7e7c5" stroke="#e7e7c5" stroke-width="0.9" stroke-linejoin="round"/>
<polygon points="954.3,441.7 987.2,422.2 986.8,413.0 953.7,432.2" fill="#9a9c84" stroke="#9a9c84" stroke-width="0.9" stroke-linejoin="round"/>
<polygon points="953.7,432.2 986.8,413.0 984.5,412.5 951.4,431.7" fill="#e7e7c5" stroke="#e7e7c5" stroke-width="0.9" stroke-linejoin="round"/>
<polygon points="874.7,478.2 910.7,457.2 909.9,448.1 873.8,468.8" fill="#9a9c84" stroke="#9a9c84" stroke-width="0.9" stroke-linejoin="round"/>
<polygon points="1260.6,538.9 1266.0,533.2 1266.5,526.1 1261.1,531.7" fill="#9a9c84" stroke="#9a9c84" stroke-width="0.9" stroke-linejoin="round"/>
<polygon points="871.0,539.6 879.9,533.8 879.1,525.8 870.2,531.5" fill="#9a9c84" stroke="#9a9c84" stroke-width="0.9" stroke-linejoin="round"/>
<polygon points="873.8,468.8 909.9,448.1 907.7,447.6 871.5,468.2" fill="#e7e7c5" stroke="#e7e7c5" stroke-width="0.9" stroke-linejoin="round"/>
<polygon points="1261.1,531.7 1266.5,526.1 1262.8,525.2 1257.3,530.9" fill="#e7e7c5" stroke="#e7e7c5" stroke-width="0.9" stroke-linejoin="round"/>
<polygon points="870.2,531.5 879.1,525.8 876.0,525.0 867.0,530.6" fill="#e7e7c5" stroke="#e7e7c5" stroke-width="0.9" stroke-linejoin="round"/>
<polygon points="1239.8,616.1 1245.4,609.7 1245.9,602.8 1240.3,609.2" fill="#9a9c84" stroke="#9a9c84" stroke-width="0.9" stroke-linejoin="round"/>
<polygon points="1211.7,443.3 1235.6,423.6 1236.1,413.4 1212.2,432.8" fill="#9a9c84" stroke="#9a9c84" stroke-width="0.9" stroke-linejoin="round"/>
<polygon points="887.7,527.3 886.0,509.3 877.3,514.7 879.1,532.8" fill="#7a5862" stroke="#7a5862" stroke-width="0.9" stroke-linejoin="round"/>
<polygon points="879.1,532.8 877.3,514.7 866.1,511.7 867.9,529.8" fill="#83616a" stroke="#83616a" stroke-width="0.9" stroke-linejoin="round"/>
<polygon points="1240.3,609.2 1245.9,602.8 1242.2,601.9 1236.5,608.2" fill="#e7e7c5" stroke="#e7e7c5" stroke-width="0.9" stroke-linejoin="round"/>
<polygon points="1212.2,432.8 1236.1,413.4 1233.0,412.8 1209.0,432.2" fill="#e7e7c5" stroke="#e7e7c5" stroke-width="0.9" stroke-linejoin="round"/>
<polygon points="841.2,625.1 850.4,618.6 849.5,610.8 840.3,617.2" fill="#9a9c84" stroke="#9a9c84" stroke-width="0.9" stroke-linejoin="round"/>
<polygon points="840.3,617.2 849.5,610.8 846.4,609.8 837.1,616.2" fill="#e7e7c5" stroke="#e7e7c5" stroke-width="0.9" stroke-linejoin="round"/>
<line x1="1263.5" y1="542.3" x2="1247.7" y2="579.9" stroke="#c9a9a3" stroke-width="2.8" stroke-linecap="round"/>
<polygon points="862.0,545.4 871.0,539.6 870.2,531.5 861.1,537.2" fill="#9a9c84" stroke="#9a9c84" stroke-width="0.9" stroke-linejoin="round"/>
<polygon points="861.1,537.2 870.2,531.5 867.0,530.6 857.9,536.3" fill="#e7e7c5" stroke="#e7e7c5" stroke-width="0.9" stroke-linejoin="round"/>
<polygon points="1263.3,480.8 1285.5,459.5 1286.3,449.4 1264.1,470.4" fill="#9a9c84" stroke="#9a9c84" stroke-width="0.9" stroke-linejoin="round"/>
<polygon points="1255.0,544.7 1260.6,538.9 1261.1,531.7 1255.5,537.5" fill="#9a9c84" stroke="#9a9c84" stroke-width="0.9" stroke-linejoin="round"/>
<polygon points="886.0,509.3 884.3,491.0 875.5,496.3 877.3,514.7" fill="#7a5862" stroke="#7a5862" stroke-width="0.9" stroke-linejoin="round"/>
<polygon points="877.3,514.7 875.5,496.3 864.2,493.4 866.1,511.7" fill="#83616a" stroke="#83616a" stroke-width="0.9" stroke-linejoin="round"/>
<polygon points="1255.5,537.5 1261.1,531.7 1257.3,530.9 1251.7,536.6" fill="#e7e7c5" stroke="#e7e7c5" stroke-width="0.9" stroke-linejoin="round"/>
<polygon points="1264.1,470.4 1286.3,449.4 1283.1,448.7 1260.8,469.7" fill="#e7e7c5" stroke="#e7e7c5" stroke-width="0.9" stroke-linejoin="round"/>
<polygon points="831.8,631.7 841.2,625.1 840.3,617.2 830.8,623.8" fill="#9a9c84" stroke="#9a9c84" stroke-width="0.9" stroke-linejoin="round"/>
<polygon points="1234.1,622.6 1239.8,616.1 1240.3,609.2 1234.5,615.6" fill="#9a9c84" stroke="#9a9c84" stroke-width="0.9" stroke-linejoin="round"/>
<polygon points="830.8,623.8 840.3,617.2 837.1,616.2 827.6,622.8" fill="#e7e7c5" stroke="#e7e7c5" stroke-width="0.9" stroke-linejoin="round"/>
<polygon points="1234.5,615.6 1240.3,609.2 1236.5,608.2 1230.8,614.6" fill="#e7e7c5" stroke="#e7e7c5" stroke-width="0.9" stroke-linejoin="round"/>
<polygon points="852.7,551.3 862.0,545.4 861.1,537.2 851.8,543.1" fill="#9a9c84" stroke="#9a9c84" stroke-width="0.9" stroke-linejoin="round"/>
<polygon points="882.5,472.4 873.6,477.6 862.2,474.8 871.2,469.7" fill="#8a6670" stroke="#8a6670" stroke-width="0.9" stroke-linejoin="round"/>
<polygon points="884.3,491.0 882.5,472.4 873.6,477.6 875.5,496.3" fill="#7a5862" stroke="#7a5862" stroke-width="0.9" stroke-linejoin="round"/>
<polygon points="851.8,543.1 861.1,537.2 857.9,536.3 848.6,542.2" fill="#e7e7c5" stroke="#e7e7c5" stroke-width="0.9" stroke-linejoin="round"/>
<polygon points="875.5,496.3 873.6,477.6 862.2,474.8 864.2,493.4" fill="#83616a" stroke="#83616a" stroke-width="0.9" stroke-linejoin="round"/>
<polygon points="1249.4,550.6 1255.0,544.7 1255.5,537.5 1249.9,543.3" fill="#9a9c84" stroke="#9a9c84" stroke-width="0.9" stroke-linejoin="round"/>
<polygon points="822.2,638.5 831.8,631.7 830.8,623.8 821.2,630.5" fill="#9a9c84" stroke="#9a9c84" stroke-width="0.9" stroke-linejoin="round"/>
<polygon points="821.2,630.5 830.8,623.8 827.6,622.8 818.0,629.5" fill="#e7e7c5" stroke="#e7e7c5" stroke-width="0.9" stroke-linejoin="round"/>
<polygon points="1249.9,543.3 1255.5,537.5 1251.7,536.6 1246.1,542.4" fill="#e7e7c5" stroke="#e7e7c5" stroke-width="0.9" stroke-linejoin="round"/>
<polygon points="1228.3,629.2 1234.1,622.6 1234.5,615.6 1228.7,622.2" fill="#9a9c84" stroke="#9a9c84" stroke-width="0.9" stroke-linejoin="round"/>
<line x1="1247.7" y1="579.9" x2="1231.4" y2="618.5" stroke="#c9a9a3" stroke-width="2.8" stroke-linecap="round"/>
<polygon points="1081.9,387.9 1111.0,369.9 1111.1,360.2 1081.8,378.0" fill="#9a9c84" stroke="#9a9c84" stroke-width="0.9" stroke-linejoin="round"/>
<polygon points="1228.7,622.2 1234.5,615.6 1230.8,614.6 1224.9,621.2" fill="#e7e7c5" stroke="#e7e7c5" stroke-width="0.9" stroke-linejoin="round"/>
<polygon points="1081.8,378.0 1111.1,360.2 1108.6,359.8 1079.3,377.5" fill="#e7e7c5" stroke="#e7e7c5" stroke-width="0.9" stroke-linejoin="round"/>
<polygon points="843.3,557.3 852.7,551.3 851.8,543.1 842.4,549.1" fill="#9a9c84" stroke="#9a9c84" stroke-width="0.9" stroke-linejoin="round"/>
<polygon points="842.4,549.1 851.8,543.1 848.6,542.2 839.1,548.1" fill="#e7e7c5" stroke="#e7e7c5" stroke-width="0.9" stroke-linejoin="round"/>
<polygon points="812.4,645.4 822.2,638.5 821.2,630.5 811.3,637.4" fill="#9a9c84" stroke="#9a9c84" stroke-width="0.9" stroke-linejoin="round"/>
<polygon points="811.3,637.4 821.2,630.5 818.0,629.5 808.1,636.3" fill="#e7e7c5" stroke="#e7e7c5" stroke-width="0.9" stroke-linejoin="round"/>
<polygon points="1243.7,556.6 1249.4,550.6 1249.9,543.3 1244.2,549.3" fill="#9a9c84" stroke="#9a9c84" stroke-width="0.9" stroke-linejoin="round"/>
<polygon points="1244.2,549.3 1249.9,543.3 1246.1,542.4 1240.3,548.4" fill="#e7e7c5" stroke="#e7e7c5" stroke-width="0.9" stroke-linejoin="round"/>
<polygon points="871.2,468.1 904.0,456.4 901.7,457.7 868.9,469.4" fill="#a993c9" stroke="#a993c9" stroke-width="0.9" stroke-linejoin="round"/>
<polygon points="1222.3,635.9 1228.3,629.2 1228.7,622.2 1222.8,628.9" fill="#9a9c84" stroke="#9a9c84" stroke-width="0.9" stroke-linejoin="round"/>
<polygon points="1000.8,425.1 1033.1,405.6 1032.8,396.0 1000.4,415.3" fill="#9a9c84" stroke="#9a9c84" stroke-width="0.9" stroke-linejoin="round"/>
<polygon points="870.8,469.4 917.2,480.7 918.0,490.6 871.7,479.1" fill="#7b6692" stroke="#7b6692" stroke-width="0.9" stroke-linejoin="round"/>
<polygon points="868.9,469.4 901.7,457.7 906.4,467.6 873.6,479.1" fill="#7b6692" stroke="#7b6692" stroke-width="0.9" stroke-linejoin="round"/>
<polygon points="873.1,468.1 919.4,479.3 917.2,480.7 870.8,469.4" fill="#a993c9" stroke="#a993c9" stroke-width="0.9" stroke-linejoin="round"/>
<polygon points="833.7,563.4 843.3,557.3 842.4,549.1 832.7,555.1" fill="#9a9c84" stroke="#9a9c84" stroke-width="0.9" stroke-linejoin="round"/>
<polygon points="1000.4,415.3 1032.8,396.0 1030.4,395.6 997.9,414.8" fill="#e7e7c5" stroke="#e7e7c5" stroke-width="0.9" stroke-linejoin="round"/>
<polygon points="1222.8,628.9 1228.7,622.2 1224.9,621.2 1218.9,627.8" fill="#e7e7c5" stroke="#e7e7c5" stroke-width="0.9" stroke-linejoin="round"/>
<line x1="1234.2" y1="573.4" x2="1247.7" y2="579.9" stroke="#6f5c58" stroke-width="3.2" stroke-linecap="round"/>
<polygon points="832.7,555.1 842.4,549.1 839.1,548.1 829.5,554.2" fill="#e7e7c5" stroke="#e7e7c5" stroke-width="0.9" stroke-linejoin="round"/>
<polygon points="835.9,500.7 874.7,478.2 873.8,468.8 834.8,491.1" fill="#9a9c84" stroke="#9a9c84" stroke-width="0.9" stroke-linejoin="round"/>
<polygon points="802.5,652.4 812.4,645.4 811.3,637.4 801.3,644.4" fill="#9a9c84" stroke="#9a9c84" stroke-width="0.9" stroke-linejoin="round"/>
<polygon points="834.8,491.1 873.8,468.8 871.5,468.2 832.5,490.5" fill="#e7e7c5" stroke="#e7e7c5" stroke-width="0.9" stroke-linejoin="round"/>
<polygon points="1133.9,428.2 1161.3,408.5 1161.7,394.1 1134.1,413.4" fill="#9a9c84" stroke="#9a9c84" stroke-width="0.9" stroke-linejoin="round"/>
<polygon points="918.8,462.7 954.3,441.7 953.7,432.2 918.0,453.0" fill="#9a9c84" stroke="#9a9c84" stroke-width="0.9" stroke-linejoin="round"/>
<polygon points="801.3,644.4 811.3,637.4 808.1,636.3 798.1,643.3" fill="#e7e7c5" stroke="#e7e7c5" stroke-width="0.9" stroke-linejoin="round"/>
<polygon points="918.0,453.0 953.7,432.2 951.4,431.7 915.6,452.4" fill="#e7e7c5" stroke="#e7e7c5" stroke-width="0.9" stroke-linejoin="round"/>
<line x1="1231.4" y1="618.5" x2="1214.7" y2="658.1" stroke="#c9a9a3" stroke-width="2.8" stroke-linecap="round"/>
<polygon points="1134.1,413.4 1161.7,394.1 1157.9,393.4 1130.2,412.6" fill="#e7e7c5" stroke="#e7e7c5" stroke-width="0.9" stroke-linejoin="round"/>
<polygon points="1237.8,562.8 1243.7,556.6 1244.2,549.3 1238.3,555.4" fill="#9a9c84" stroke="#9a9c84" stroke-width="0.9" stroke-linejoin="round"/>
<polygon points="824.0,569.7 833.7,563.4 832.7,555.1 822.9,561.3" fill="#9a9c84" stroke="#9a9c84" stroke-width="0.9" stroke-linejoin="round"/>
<polygon points="1238.3,555.4 1244.2,549.3 1240.3,548.4 1234.4,554.4" fill="#e7e7c5" stroke="#e7e7c5" stroke-width="0.9" stroke-linejoin="round"/>
<polygon points="1216.3,642.8 1222.3,635.9 1222.8,628.9 1216.7,635.7" fill="#9a9c84" stroke="#9a9c84" stroke-width="0.9" stroke-linejoin="round"/>
<polygon points="822.9,561.3 832.7,555.1 829.5,554.2 819.7,560.4" fill="#e7e7c5" stroke="#e7e7c5" stroke-width="0.9" stroke-linejoin="round"/>
<polygon points="792.3,659.5 802.5,652.4 801.3,644.4 791.2,651.5" fill="#9a9c84" stroke="#9a9c84" stroke-width="0.9" stroke-linejoin="round"/>
<polygon points="1216.7,635.7 1222.8,628.9 1218.9,627.8 1212.9,634.6" fill="#e7e7c5" stroke="#e7e7c5" stroke-width="0.9" stroke-linejoin="round"/>
<polygon points="791.2,651.5 801.3,644.4 798.1,643.3 787.9,650.4" fill="#e7e7c5" stroke="#e7e7c5" stroke-width="0.9" stroke-linejoin="round"/>
<polygon points="1185.9,464.6 1211.7,443.3 1212.2,432.8 1186.3,453.8" fill="#9a9c84" stroke="#9a9c84" stroke-width="0.9" stroke-linejoin="round"/>
<polygon points="1186.3,453.8 1212.2,432.8 1209.0,432.2 1183.1,453.1" fill="#e7e7c5" stroke="#e7e7c5" stroke-width="0.9" stroke-linejoin="round"/>
<polygon points="814.0,576.1 824.0,569.7 822.9,561.3 812.9,567.7" fill="#9a9c84" stroke="#9a9c84" stroke-width="0.9" stroke-linejoin="round"/>
<polygon points="812.9,567.7 822.9,561.3 819.7,560.4 809.7,566.7" fill="#e7e7c5" stroke="#e7e7c5" stroke-width="0.9" stroke-linejoin="round"/>
<polygon points="782.0,666.8 792.3,659.5 791.2,651.5 780.8,658.7" fill="#9a9c84" stroke="#9a9c84" stroke-width="0.9" stroke-linejoin="round"/>
<line x1="1214.7" y1="658.1" x2="1197.5" y2="698.8" stroke="#c9a9a3" stroke-width="2.8" stroke-linecap="round"/>
<polygon points="1231.9,569.0 1237.8,562.8 1238.3,555.4 1232.3,561.6" fill="#9a9c84" stroke="#9a9c84" stroke-width="0.9" stroke-linejoin="round"/>
<polygon points="780.8,658.7 791.2,651.5 787.9,650.4 777.5,657.6" fill="#e7e7c5" stroke="#e7e7c5" stroke-width="0.9" stroke-linejoin="round"/>
<polygon points="1210.2,649.8 1216.3,642.8 1216.7,635.7 1210.5,642.7" fill="#9a9c84" stroke="#9a9c84" stroke-width="0.9" stroke-linejoin="round"/>
<polygon points="1232.3,561.6 1238.3,555.4 1234.4,554.4 1228.4,560.6" fill="#e7e7c5" stroke="#e7e7c5" stroke-width="0.9" stroke-linejoin="round"/>
<polygon points="1210.5,642.7 1216.7,635.7 1212.9,634.6 1206.7,641.6" fill="#e7e7c5" stroke="#e7e7c5" stroke-width="0.9" stroke-linejoin="round"/>
<polygon points="1239.4,503.8 1263.3,480.8 1264.1,470.4 1240.0,493.0" fill="#9a9c84" stroke="#9a9c84" stroke-width="0.9" stroke-linejoin="round"/>
<polygon points="1240.0,493.0 1264.1,470.4 1260.8,469.7 1236.6,492.3" fill="#e7e7c5" stroke="#e7e7c5" stroke-width="0.9" stroke-linejoin="round"/>
<polygon points="803.9,582.6 814.0,576.1 812.9,567.7 802.8,574.1" fill="#9a9c84" stroke="#9a9c84" stroke-width="0.9" stroke-linejoin="round"/>
<polygon points="771.5,674.3 782.0,666.8 780.8,658.7 770.2,666.1" fill="#9a9c84" stroke="#9a9c84" stroke-width="0.9" stroke-linejoin="round"/>
<polygon points="802.8,574.1 812.9,567.7 809.7,566.7 799.5,573.1" fill="#e7e7c5" stroke="#e7e7c5" stroke-width="0.9" stroke-linejoin="round"/>
<polygon points="941.8,483.1 938.3,485.3 935.2,488.2 938.6,486.1" fill="#d0d0e6" stroke="#d0d0e6" stroke-width="0.9" stroke-linejoin="round"/>
<polygon points="770.2,666.1 780.8,658.7 777.5,657.6 766.9,664.9" fill="#e7e7c5" stroke="#e7e7c5" stroke-width="0.9" stroke-linejoin="round"/>
<polygon points="923.9,460.6 941.8,483.1 938.3,485.3 920.4,462.7" fill="#eceef8" stroke="#eceef8" stroke-width="0.9" stroke-linejoin="round"/>
<polygon points="920.4,462.7 938.3,485.3 935.2,488.2 917.3,465.7" fill="#c2c3dc" stroke="#c2c3dc" stroke-width="0.9" stroke-linejoin="round"/>
<polygon points="917.2,480.7 965.6,492.5 966.2,502.6 918.0,490.6" fill="#7b6692" stroke="#7b6692" stroke-width="0.9" stroke-linejoin="round"/>
<polygon points="904.0,456.4 938.5,444.0 936.2,445.3 901.7,457.7" fill="#a993c9" stroke="#a993c9" stroke-width="0.9" stroke-linejoin="round"/>
<polygon points="919.4,479.3 967.8,491.1 965.6,492.5 917.2,480.7" fill="#a993c9" stroke="#a993c9" stroke-width="0.9" stroke-linejoin="round"/>
<polygon points="901.7,457.7 936.2,445.3 941.0,455.5 906.4,467.6" fill="#7b6692" stroke="#7b6692" stroke-width="0.9" stroke-linejoin="round"/>
<polygon points="1225.8,575.4 1231.9,569.0 1232.3,561.6 1226.3,567.9" fill="#9a9c84" stroke="#9a9c84" stroke-width="0.9" stroke-linejoin="round"/>
<polygon points="1203.9,656.9 1210.2,649.8 1210.5,642.7 1204.3,649.7" fill="#9a9c84" stroke="#9a9c84" stroke-width="0.9" stroke-linejoin="round"/>
<polygon points="1226.3,567.9 1232.3,561.6 1228.4,560.6 1222.3,566.9" fill="#e7e7c5" stroke="#e7e7c5" stroke-width="0.9" stroke-linejoin="round"/>
<line x1="1197.5" y1="698.8" x2="1179.9" y2="740.7" stroke="#c9a9a3" stroke-width="2.8" stroke-linecap="round"/>
<polygon points="1204.3,649.7 1210.5,642.7 1206.7,641.6 1200.4,648.6" fill="#e7e7c5" stroke="#e7e7c5" stroke-width="0.9" stroke-linejoin="round"/>
<polygon points="760.7,681.8 771.5,674.3 770.2,666.1 759.4,673.6" fill="#9a9c84" stroke="#9a9c84" stroke-width="0.9" stroke-linejoin="round"/>
<polygon points="1050.5,407.4 1081.9,387.9 1081.8,378.0 1050.3,397.2" fill="#9a9c84" stroke="#9a9c84" stroke-width="0.9" stroke-linejoin="round"/>
<polygon points="793.6,589.2 803.9,582.6 802.8,574.1 792.4,580.7" fill="#9a9c84" stroke="#9a9c84" stroke-width="0.9" stroke-linejoin="round"/>
<polygon points="1050.3,397.2 1081.8,378.0 1079.3,377.5 1047.7,396.6" fill="#e7e7c5" stroke="#e7e7c5" stroke-width="0.9" stroke-linejoin="round"/>
<polygon points="759.4,673.6 770.2,666.1 766.9,664.9 756.1,672.4" fill="#e7e7c5" stroke="#e7e7c5" stroke-width="0.9" stroke-linejoin="round"/>
<polygon points="792.4,580.7 802.8,574.1 799.5,573.1 789.1,579.7" fill="#e7e7c5" stroke="#e7e7c5" stroke-width="0.9" stroke-linejoin="round"/>
<polygon points="794.0,525.1 835.9,500.7 834.8,491.1 792.6,515.2" fill="#9a9c84" stroke="#9a9c84" stroke-width="0.9" stroke-linejoin="round"/>
<line x1="1219.7" y1="566.5" x2="1234.2" y2="573.4" stroke="#6f5c58" stroke-width="3.2" stroke-linecap="round"/>
<polygon points="792.6,515.2 834.8,491.1 832.5,490.5 790.3,514.5" fill="#e7e7c5" stroke="#e7e7c5" stroke-width="0.9" stroke-linejoin="round"/>
<polygon points="1197.5,664.2 1203.9,656.9 1204.3,649.7 1197.8,657.0" fill="#9a9c84" stroke="#9a9c84" stroke-width="0.9" stroke-linejoin="round"/>
<polygon points="1219.7,581.8 1225.8,575.4 1226.3,567.9 1220.1,574.3" fill="#9a9c84" stroke="#9a9c84" stroke-width="0.9" stroke-linejoin="round"/>
<polygon points="749.8,689.6 760.7,681.8 759.4,673.6 748.4,681.3" fill="#9a9c84" stroke="#9a9c84" stroke-width="0.9" stroke-linejoin="round"/>
<polygon points="965.9,446.2 1000.8,425.1 1000.4,415.3 965.4,436.1" fill="#9a9c84" stroke="#9a9c84" stroke-width="0.9" stroke-linejoin="round"/>
<polygon points="1220.1,574.3 1226.3,567.9 1222.3,566.9 1216.1,573.3" fill="#e7e7c5" stroke="#e7e7c5" stroke-width="0.9" stroke-linejoin="round"/>
<polygon points="1197.8,657.0 1204.3,649.7 1200.4,648.6 1193.9,655.8" fill="#e7e7c5" stroke="#e7e7c5" stroke-width="0.9" stroke-linejoin="round"/>
<polygon points="783.0,595.9 793.6,589.2 792.4,580.7 781.8,587.4" fill="#9a9c84" stroke="#9a9c84" stroke-width="0.9" stroke-linejoin="round"/>
<polygon points="965.4,436.1 1000.4,415.3 997.9,414.8 962.8,435.5" fill="#e7e7c5" stroke="#e7e7c5" stroke-width="0.9" stroke-linejoin="round"/>
<polygon points="748.4,681.3 759.4,673.6 756.1,672.4 745.1,680.1" fill="#e7e7c5" stroke="#e7e7c5" stroke-width="0.9" stroke-linejoin="round"/>
<polygon points="880.4,485.4 918.8,462.7 918.0,453.0 879.5,475.4" fill="#9a9c84" stroke="#9a9c84" stroke-width="0.9" stroke-linejoin="round"/>
<polygon points="781.8,587.4 792.4,580.7 789.1,579.7 778.5,586.3" fill="#e7e7c5" stroke="#e7e7c5" stroke-width="0.9" stroke-linejoin="round"/>
<polygon points="1186.0,737.7 1186.8,720.3 1180.3,728.1 1179.6,745.6" fill="#7a5862" stroke="#7a5862" stroke-width="0.9" stroke-linejoin="round"/>
<polygon points="879.5,475.4 918.0,453.0 915.6,452.4 877.0,474.8" fill="#e7e7c5" stroke="#e7e7c5" stroke-width="0.9" stroke-linejoin="round"/>
<polygon points="962.1,449.2 945.1,488.9 948.6,486.7 965.6,447.1" fill="#b9bad2" stroke="#b9bad2" stroke-width="0.9" stroke-linejoin="round"/>
<polygon points="1179.6,745.6 1180.3,728.1 1166.6,723.7 1166.0,741.2" fill="#83616a" stroke="#83616a" stroke-width="0.9" stroke-linejoin="round"/>
<polygon points="957.5,445.7 940.6,485.4 945.1,488.9 962.1,449.2" fill="#c2c3dc" stroke="#c2c3dc" stroke-width="0.9" stroke-linejoin="round"/>
<polygon points="1104.3,449.5 1133.9,428.2 1134.1,413.4 1104.3,434.2" fill="#9a9c84" stroke="#9a9c84" stroke-width="0.9" stroke-linejoin="round"/>
<polygon points="738.6,697.5 749.8,689.6 748.4,681.3 737.1,689.1" fill="#9a9c84" stroke="#9a9c84" stroke-width="0.9" stroke-linejoin="round"/>
<polygon points="737.1,689.1 748.4,681.3 745.1,680.1 733.8,687.9" fill="#e7e7c5" stroke="#e7e7c5" stroke-width="0.9" stroke-linejoin="round"/>
<polygon points="1104.3,434.2 1134.1,413.4 1130.2,412.6 1100.3,433.4" fill="#e7e7c5" stroke="#e7e7c5" stroke-width="0.9" stroke-linejoin="round"/>
<polygon points="772.3,602.8 783.0,595.9 781.8,587.4 771.0,594.2" fill="#9a9c84" stroke="#9a9c84" stroke-width="0.9" stroke-linejoin="round"/>
<polygon points="1191.0,671.6 1197.5,664.2 1197.8,657.0 1191.3,664.3" fill="#9a9c84" stroke="#9a9c84" stroke-width="0.9" stroke-linejoin="round"/>
<polygon points="771.0,594.2 781.8,587.4 778.5,586.3 767.6,593.1" fill="#e7e7c5" stroke="#e7e7c5" stroke-width="0.9" stroke-linejoin="round"/>
<polygon points="1213.4,588.4 1219.7,581.8 1220.1,574.3 1213.8,580.9" fill="#9a9c84" stroke="#9a9c84" stroke-width="0.9" stroke-linejoin="round"/>
<polygon points="1191.3,664.3 1197.8,657.0 1193.9,655.8 1187.4,663.2" fill="#e7e7c5" stroke="#e7e7c5" stroke-width="0.9" stroke-linejoin="round"/>
<polygon points="1213.8,580.9 1220.1,574.3 1216.1,573.3 1209.8,579.9" fill="#e7e7c5" stroke="#e7e7c5" stroke-width="0.9" stroke-linejoin="round"/>
<polygon points="1186.8,720.3 1187.5,702.5 1181.0,710.2 1180.3,728.1" fill="#7a5862" stroke="#7a5862" stroke-width="0.9" stroke-linejoin="round"/>
<polygon points="965.6,492.5 1016.2,504.9 1016.5,515.1 966.2,502.6" fill="#7b6692" stroke="#7b6692" stroke-width="0.9" stroke-linejoin="round"/>
<polygon points="727.2,705.5 738.6,697.5 737.1,689.1 725.7,697.1" fill="#9a9c84" stroke="#9a9c84" stroke-width="0.9" stroke-linejoin="round"/>
<polygon points="967.8,491.1 1018.3,503.4 1016.2,504.9 965.6,492.5" fill="#a993c9" stroke="#a993c9" stroke-width="0.9" stroke-linejoin="round"/>
<polygon points="1180.3,728.1 1181.0,710.2 1167.1,705.9 1166.6,723.7" fill="#83616a" stroke="#83616a" stroke-width="0.9" stroke-linejoin="round"/>
<polygon points="725.7,697.1 737.1,689.1 733.8,687.9 722.3,695.9" fill="#e7e7c5" stroke="#e7e7c5" stroke-width="0.9" stroke-linejoin="round"/>
<polygon points="938.5,444.0 974.7,431.0 972.5,432.3 936.2,445.3" fill="#a993c9" stroke="#a993c9" stroke-width="0.9" stroke-linejoin="round"/>
<polygon points="761.3,609.8 772.3,602.8 771.0,594.2 760.0,601.2" fill="#9a9c84" stroke="#9a9c84" stroke-width="0.9" stroke-linejoin="round"/>
<polygon points="936.2,445.3 972.5,432.3 977.3,442.8 941.0,455.5" fill="#7b6692" stroke="#7b6692" stroke-width="0.9" stroke-linejoin="round"/>
<polygon points="960.9,443.6 957.5,445.7 962.1,449.2 965.6,447.1" fill="#d0d0e6" stroke="#d0d0e6" stroke-width="0.9" stroke-linejoin="round"/>
<polygon points="1158.1,487.6 1185.9,464.6 1186.3,453.8 1158.4,476.4" fill="#9a9c84" stroke="#9a9c84" stroke-width="0.9" stroke-linejoin="round"/>
<polygon points="760.0,601.2 771.0,594.2 767.6,593.1 756.6,600.1" fill="#e7e7c5" stroke="#e7e7c5" stroke-width="0.9" stroke-linejoin="round"/>
<polygon points="1158.4,476.4 1186.3,453.8 1183.1,453.1 1155.0,475.7" fill="#e7e7c5" stroke="#e7e7c5" stroke-width="0.9" stroke-linejoin="round"/>
<polygon points="1184.4,679.1 1191.0,671.6 1191.3,664.3 1184.7,671.8" fill="#9a9c84" stroke="#9a9c84" stroke-width="0.9" stroke-linejoin="round"/>
<polygon points="682.4,812.0 678.5,793.8 666.8,788.7 670.7,806.9" fill="#83616a" stroke="#83616a" stroke-width="0.9" stroke-linejoin="round"/>
<polygon points="1206.9,595.2 1213.4,588.4 1213.8,580.9 1207.3,587.6" fill="#9a9c84" stroke="#9a9c84" stroke-width="0.9" stroke-linejoin="round"/>
<polygon points="1184.7,671.8 1191.3,664.3 1187.4,663.2 1180.7,670.6" fill="#e7e7c5" stroke="#e7e7c5" stroke-width="0.9" stroke-linejoin="round"/>
<polygon points="694.3,802.9 690.5,784.8 678.5,793.8 682.4,812.0" fill="#7a5862" stroke="#7a5862" stroke-width="0.9" stroke-linejoin="round"/>
<polygon points="1207.3,587.6 1213.8,580.9 1209.8,579.9 1203.3,586.5" fill="#e7e7c5" stroke="#e7e7c5" stroke-width="0.9" stroke-linejoin="round"/>
<polygon points="715.6,713.7 727.2,705.5 725.7,697.1 714.0,705.3" fill="#9a9c84" stroke="#9a9c84" stroke-width="0.9" stroke-linejoin="round"/>
<polygon points="714.0,705.3 725.7,697.1 722.3,695.9 710.6,704.0" fill="#e7e7c5" stroke="#e7e7c5" stroke-width="0.9" stroke-linejoin="round"/>
<polygon points="1187.5,702.5 1188.3,684.4 1181.7,692.0 1181.0,710.2" fill="#7a5862" stroke="#7a5862" stroke-width="0.9" stroke-linejoin="round"/>
<polygon points="971.4,444.0 994.0,472.6 990.6,474.8 967.9,446.1" fill="#eceef8" stroke="#eceef8" stroke-width="0.9" stroke-linejoin="round"/>
<polygon points="967.9,446.1 990.6,474.8 987.2,477.9 964.5,449.3" fill="#c2c3dc" stroke="#c2c3dc" stroke-width="0.9" stroke-linejoin="round"/>
<polygon points="750.2,617.0 761.3,609.8 760.0,601.2 748.7,608.3" fill="#9a9c84" stroke="#9a9c84" stroke-width="0.9" stroke-linejoin="round"/>
<polygon points="748.7,608.3 760.0,601.2 756.6,600.1 745.4,607.2" fill="#e7e7c5" stroke="#e7e7c5" stroke-width="0.9" stroke-linejoin="round"/>
<polygon points="1213.4,528.6 1239.4,503.8 1240.0,493.0 1214.0,517.5" fill="#9a9c84" stroke="#9a9c84" stroke-width="0.9" stroke-linejoin="round"/>
<polygon points="1016.6,501.2 1013.3,503.5 1009.8,506.5 1013.1,504.2" fill="#d0d0e6" stroke="#d0d0e6" stroke-width="0.9" stroke-linejoin="round"/>
<polygon points="1181.0,710.2 1181.7,692.0 1167.7,687.8 1167.1,705.9" fill="#83616a" stroke="#83616a" stroke-width="0.9" stroke-linejoin="round"/>
<polygon points="994.0,472.6 1016.6,501.2 1013.3,503.5 990.6,474.8" fill="#eceef8" stroke="#eceef8" stroke-width="0.9" stroke-linejoin="round"/>
<polygon points="990.6,474.8 1013.3,503.5 1009.8,506.5 987.2,477.9" fill="#c2c3dc" stroke="#c2c3dc" stroke-width="0.9" stroke-linejoin="round"/>
<polygon points="1214.0,517.5 1240.0,493.0 1236.6,492.3 1210.5,516.7" fill="#e7e7c5" stroke="#e7e7c5" stroke-width="0.9" stroke-linejoin="round"/>
<polygon points="703.7,722.1 715.6,713.7 714.0,705.3 702.1,713.6" fill="#9a9c84" stroke="#9a9c84" stroke-width="0.9" stroke-linejoin="round"/>
<polygon points="702.1,713.6 714.0,705.3 710.6,704.0 698.7,712.3" fill="#e7e7c5" stroke="#e7e7c5" stroke-width="0.9" stroke-linejoin="round"/>
<polygon points="678.5,793.8 674.5,775.2 662.7,770.2 666.8,788.7" fill="#83616a" stroke="#83616a" stroke-width="0.9" stroke-linejoin="round"/>
<polygon points="1200.4,602.0 1206.9,595.2 1207.3,587.6 1200.8,594.4" fill="#9a9c84" stroke="#9a9c84" stroke-width="0.9" stroke-linejoin="round"/>
<polygon points="748.5,551.6 794.0,525.1 792.6,515.2 746.9,541.3" fill="#9a9c84" stroke="#9a9c84" stroke-width="0.9" stroke-linejoin="round"/>
<polygon points="690.5,784.8 686.7,766.3 674.5,775.2 678.5,793.8" fill="#7a5862" stroke="#7a5862" stroke-width="0.9" stroke-linejoin="round"/>
<polygon points="1200.8,594.4 1207.3,587.6 1203.3,586.5 1196.7,593.3" fill="#e7e7c5" stroke="#e7e7c5" stroke-width="0.9" stroke-linejoin="round"/>
<polygon points="738.8,624.3 750.2,617.0 748.7,608.3 737.3,615.5" fill="#9a9c84" stroke="#9a9c84" stroke-width="0.9" stroke-linejoin="round"/>
<polygon points="746.9,541.3 792.6,515.2 790.3,514.5 744.5,540.6" fill="#e7e7c5" stroke="#e7e7c5" stroke-width="0.9" stroke-linejoin="round"/>
<polygon points="737.3,615.5 748.7,608.3 745.4,607.2 733.9,614.4" fill="#e7e7c5" stroke="#e7e7c5" stroke-width="0.9" stroke-linejoin="round"/>
<polygon points="1188.3,684.4 1189.1,666.0 1182.4,673.5 1181.7,692.0" fill="#7a5862" stroke="#7a5862" stroke-width="0.9" stroke-linejoin="round"/>
<polygon points="1016.5,428.5 1050.5,407.4 1050.3,397.2 1016.1,417.9" fill="#9a9c84" stroke="#9a9c84" stroke-width="0.9" stroke-linejoin="round"/>
<polygon points="1173.3,691.8 1180.1,684.0 1180.4,676.6 1173.5,684.4" fill="#9a9c84" stroke="#9a9c84" stroke-width="0.9" stroke-linejoin="round"/>
<polygon points="691.6,730.6 703.7,722.1 702.1,713.6 689.9,722.1" fill="#9a9c84" stroke="#9a9c84" stroke-width="0.9" stroke-linejoin="round"/>
<line x1="1204.2" y1="559.0" x2="1219.7" y2="566.5" stroke="#6f5c58" stroke-width="3.2" stroke-linecap="round"/>
<polygon points="1181.7,692.0 1182.4,673.5 1168.3,669.4 1167.7,687.8" fill="#83616a" stroke="#83616a" stroke-width="0.9" stroke-linejoin="round"/>
<polygon points="1016.1,417.9 1050.3,397.2 1047.7,396.6 1013.4,417.4" fill="#e7e7c5" stroke="#e7e7c5" stroke-width="0.9" stroke-linejoin="round"/>
<polygon points="1020.1,466.6 1021.4,502.5 1018.1,504.9 1016.8,468.8" fill="#eceef8" stroke="#eceef8" stroke-width="0.9" stroke-linejoin="round"/>
<polygon points="689.9,722.1 702.1,713.6 698.7,712.3 686.5,720.7" fill="#e7e7c5" stroke="#e7e7c5" stroke-width="0.9" stroke-linejoin="round"/>
<polygon points="1173.5,684.4 1180.4,676.6 1176.4,675.4 1169.5,683.2" fill="#e7e7c5" stroke="#e7e7c5" stroke-width="0.9" stroke-linejoin="round"/>
<polygon points="1016.8,468.8 1018.1,504.9 1012.9,503.6 1011.6,467.6" fill="#c2c3dc" stroke="#c2c3dc" stroke-width="0.9" stroke-linejoin="round"/>
<polygon points="838.9,510.1 880.4,485.4 879.5,475.4 837.7,499.7" fill="#9a9c84" stroke="#9a9c84" stroke-width="0.9" stroke-linejoin="round"/>
<polygon points="1016.2,504.9 1069.1,517.8 1069.2,528.2 1016.5,515.1" fill="#7b6692" stroke="#7b6692" stroke-width="0.9" stroke-linejoin="round"/>
<polygon points="1021.6,509.4 1043.1,491.1 1046.3,488.8 1024.9,507.1" fill="#b9bad2" stroke="#b9bad2" stroke-width="0.9" stroke-linejoin="round"/>
<polygon points="727.1,631.8 738.8,624.3 737.3,615.5 725.6,622.9" fill="#9a9c84" stroke="#9a9c84" stroke-width="0.9" stroke-linejoin="round"/>
<polygon points="837.7,499.7 879.5,475.4 877.0,474.8 835.2,499.1" fill="#e7e7c5" stroke="#e7e7c5" stroke-width="0.9" stroke-linejoin="round"/>
<polygon points="1018.3,503.4 1071.1,516.2 1069.1,517.8 1016.2,504.9" fill="#a993c9" stroke="#a993c9" stroke-width="0.9" stroke-linejoin="round"/>
<polygon points="928.2,469.1 965.9,446.2 965.4,436.1 927.4,458.6" fill="#9a9c84" stroke="#9a9c84" stroke-width="0.9" stroke-linejoin="round"/>
<polygon points="725.6,622.9 737.3,615.5 733.9,614.4 722.2,621.8" fill="#e7e7c5" stroke="#e7e7c5" stroke-width="0.9" stroke-linejoin="round"/>
<polygon points="1193.7,609.0 1200.4,602.0 1200.8,594.4 1194.1,601.3" fill="#9a9c84" stroke="#9a9c84" stroke-width="0.9" stroke-linejoin="round"/>
<polygon points="674.5,775.2 670.5,756.3 658.6,751.4 662.7,770.2" fill="#83616a" stroke="#83616a" stroke-width="0.9" stroke-linejoin="round"/>
<polygon points="927.4,458.6 965.4,436.1 962.8,435.5 924.8,458.0" fill="#e7e7c5" stroke="#e7e7c5" stroke-width="0.9" stroke-linejoin="round"/>
<polygon points="1017.8,504.6 1039.2,486.2 1043.1,491.1 1021.6,509.4" fill="#c2c3dc" stroke="#c2c3dc" stroke-width="0.9" stroke-linejoin="round"/>
<polygon points="679.2,739.3 691.6,730.6 689.9,722.1 677.4,730.7" fill="#9a9c84" stroke="#9a9c84" stroke-width="0.9" stroke-linejoin="round"/>
<polygon points="686.7,766.3 682.8,747.5 670.5,756.3 674.5,775.2" fill="#7a5862" stroke="#7a5862" stroke-width="0.9" stroke-linejoin="round"/>
<polygon points="1194.1,601.3 1200.8,594.4 1196.7,593.3 1190.0,600.2" fill="#e7e7c5" stroke="#e7e7c5" stroke-width="0.9" stroke-linejoin="round"/>
<polygon points="677.4,730.7 689.9,722.1 686.5,720.7 674.0,729.4" fill="#e7e7c5" stroke="#e7e7c5" stroke-width="0.9" stroke-linejoin="round"/>
<polygon points="1189.1,666.0 1189.9,647.3 1183.2,654.7 1182.4,673.5" fill="#7a5862" stroke="#7a5862" stroke-width="0.9" stroke-linejoin="round"/>
<polygon points="974.7,431.0 1012.9,417.3 1010.7,418.6 972.5,432.3" fill="#a993c9" stroke="#a993c9" stroke-width="0.9" stroke-linejoin="round"/>
<polygon points="972.5,432.3 1010.7,418.6 1015.6,429.4 977.3,442.8" fill="#7b6692" stroke="#7b6692" stroke-width="0.9" stroke-linejoin="round"/>
<polygon points="1166.3,699.7 1173.3,691.8 1173.5,684.4 1166.5,692.3" fill="#9a9c84" stroke="#9a9c84" stroke-width="0.9" stroke-linejoin="round"/>
<polygon points="1182.4,673.5 1183.2,654.7 1168.9,650.6 1168.3,669.4" fill="#83616a" stroke="#83616a" stroke-width="0.9" stroke-linejoin="round"/>
<polygon points="1166.5,692.3 1173.5,684.4 1169.5,683.2 1162.5,691.0" fill="#e7e7c5" stroke="#e7e7c5" stroke-width="0.9" stroke-linejoin="round"/>
<polygon points="715.2,639.4 727.1,631.8 725.6,622.9 713.6,630.5" fill="#9a9c84" stroke="#9a9c84" stroke-width="0.9" stroke-linejoin="round"/>
<polygon points="713.6,630.5 725.6,622.9 722.2,621.8 710.2,629.3" fill="#e7e7c5" stroke="#e7e7c5" stroke-width="0.9" stroke-linejoin="round"/>
<polygon points="1018.9,429.5 1020.1,466.6 1016.8,468.8 1015.5,431.6" fill="#eceef8" stroke="#eceef8" stroke-width="0.9" stroke-linejoin="round"/>
<polygon points="1015.5,431.6 1016.8,468.8 1011.6,467.6 1010.1,430.5" fill="#c2c3dc" stroke="#c2c3dc" stroke-width="0.9" stroke-linejoin="round"/>
<polygon points="1072.2,472.6 1104.3,449.5 1104.3,434.2 1072.0,456.8" fill="#9a9c84" stroke="#9a9c84" stroke-width="0.9" stroke-linejoin="round"/>
<polygon points="1186.9,616.2 1193.7,609.0 1194.1,601.3 1187.2,608.4" fill="#9a9c84" stroke="#9a9c84" stroke-width="0.9" stroke-linejoin="round"/>
<polygon points="670.5,756.3 666.4,737.1 654.4,732.2 658.6,751.4" fill="#83616a" stroke="#83616a" stroke-width="0.9" stroke-linejoin="round"/>
<polygon points="1072.0,456.8 1104.3,434.2 1100.3,433.4 1067.8,455.9" fill="#e7e7c5" stroke="#e7e7c5" stroke-width="0.9" stroke-linejoin="round"/>
<polygon points="682.8,747.5 678.9,728.4 666.4,737.1 670.5,756.3" fill="#7a5862" stroke="#7a5862" stroke-width="0.9" stroke-linejoin="round"/>
<polygon points="1187.2,608.4 1194.1,601.3 1190.0,600.2 1183.1,607.3" fill="#e7e7c5" stroke="#e7e7c5" stroke-width="0.9" stroke-linejoin="round"/>
<polygon points="1189.9,647.3 1190.7,628.3 1183.9,635.5 1183.2,654.7" fill="#7a5862" stroke="#7a5862" stroke-width="0.9" stroke-linejoin="round"/>
<polygon points="1018.9,429.5 1015.5,431.6 1010.1,430.5 1013.5,428.4" fill="#d0d0e6" stroke="#d0d0e6" stroke-width="0.9" stroke-linejoin="round"/>
<polygon points="703.1,647.2 715.2,639.4 713.6,630.5 701.4,638.2" fill="#9a9c84" stroke="#9a9c84" stroke-width="0.9" stroke-linejoin="round"/>
<polygon points="1159.2,707.8 1166.3,699.7 1166.5,692.3 1159.4,700.3" fill="#9a9c84" stroke="#9a9c84" stroke-width="0.9" stroke-linejoin="round"/>
<polygon points="701.4,638.2 713.6,630.5 710.2,629.3 698.0,637.0" fill="#e7e7c5" stroke="#e7e7c5" stroke-width="0.9" stroke-linejoin="round"/>
<polygon points="1183.2,654.7 1183.9,635.5 1169.6,631.5 1168.9,650.6" fill="#83616a" stroke="#83616a" stroke-width="0.9" stroke-linejoin="round"/>
<polygon points="1159.4,700.3 1166.5,692.3 1162.5,691.0 1155.3,699.1" fill="#e7e7c5" stroke="#e7e7c5" stroke-width="0.9" stroke-linejoin="round"/>
<polygon points="1012.9,417.3 1010.7,418.6 1015.6,429.4 1017.8,428.1" fill="#8c77a6" stroke="#8c77a6" stroke-width="0.9" stroke-linejoin="round"/>
<polygon points="1043.1,491.1 1065.5,472.0 1068.7,469.7 1046.3,488.8" fill="#b9bad2" stroke="#b9bad2" stroke-width="0.9" stroke-linejoin="round"/>
<polygon points="1039.2,486.2 1061.5,467.0 1065.5,472.0 1043.1,491.1" fill="#c2c3dc" stroke="#c2c3dc" stroke-width="0.9" stroke-linejoin="round"/>
<polygon points="1127.9,512.5 1158.1,487.6 1158.4,476.4 1128.1,501.0" fill="#9a9c84" stroke="#9a9c84" stroke-width="0.9" stroke-linejoin="round"/>
<polygon points="666.4,737.1 662.2,717.4 650.1,712.7 654.4,732.2" fill="#83616a" stroke="#83616a" stroke-width="0.9" stroke-linejoin="round"/>
<polygon points="690.7,655.1 703.1,647.2 701.4,638.2 689.0,646.1" fill="#9a9c84" stroke="#9a9c84" stroke-width="0.9" stroke-linejoin="round"/>
<polygon points="1069.1,517.8 1124.4,531.3 1124.3,541.9 1069.2,528.2" fill="#7b6692" stroke="#7b6692" stroke-width="0.9" stroke-linejoin="round"/>
<polygon points="689.0,646.1 701.4,638.2 698.0,637.0 685.5,644.8" fill="#e7e7c5" stroke="#e7e7c5" stroke-width="0.9" stroke-linejoin="round"/>
<polygon points="1190.7,628.3 1191.5,608.9 1184.7,616.0 1183.9,635.5" fill="#7a5862" stroke="#7a5862" stroke-width="0.9" stroke-linejoin="round"/>
<polygon points="678.9,728.4 674.8,708.9 662.2,717.4 666.4,737.1" fill="#7a5862" stroke="#7a5862" stroke-width="0.9" stroke-linejoin="round"/>
<polygon points="1128.1,501.0 1158.4,476.4 1155.0,475.7 1124.6,500.2" fill="#e7e7c5" stroke="#e7e7c5" stroke-width="0.9" stroke-linejoin="round"/>
<polygon points="1071.1,516.2 1126.3,529.6 1124.4,531.3 1069.1,517.8" fill="#a993c9" stroke="#a993c9" stroke-width="0.9" stroke-linejoin="round"/>
<polygon points="1015.2,419.6 1056.6,450.6 1052.2,459.4 1011.1,428.5" fill="#7b6692" stroke="#7b6692" stroke-width="0.9" stroke-linejoin="round"/>
<polygon points="699.0,580.3 748.5,551.6 746.9,541.3 697.1,569.8" fill="#9a9c84" stroke="#9a9c84" stroke-width="0.9" stroke-linejoin="round"/>
<polygon points="1151.9,716.1 1159.2,707.8 1159.4,700.3 1152.1,708.6" fill="#9a9c84" stroke="#9a9c84" stroke-width="0.9" stroke-linejoin="round"/>
<polygon points="1017.4,418.2 1058.7,449.1 1056.6,450.6 1015.2,419.6" fill="#a993c9" stroke="#a993c9" stroke-width="0.9" stroke-linejoin="round"/>
<polygon points="697.1,569.8 746.9,541.3 744.5,540.6 694.6,569.0" fill="#e7e7c5" stroke="#e7e7c5" stroke-width="0.9" stroke-linejoin="round"/>
<polygon points="1183.9,635.5 1184.7,616.0 1170.2,612.0 1169.6,631.5" fill="#83616a" stroke="#83616a" stroke-width="0.9" stroke-linejoin="round"/>
<polygon points="1152.1,708.6 1159.4,700.3 1155.3,699.1 1148.0,707.3" fill="#e7e7c5" stroke="#e7e7c5" stroke-width="0.9" stroke-linejoin="round"/>
<polygon points="1064.7,464.7 1061.5,467.0 1065.5,472.0 1068.7,469.7" fill="#d0d0e6" stroke="#d0d0e6" stroke-width="0.9" stroke-linejoin="round"/>
<polygon points="1175.5,628.1 1182.6,620.8 1182.9,613.0 1175.8,620.3" fill="#9a9c84" stroke="#9a9c84" stroke-width="0.9" stroke-linejoin="round"/>
<polygon points="1076.3,469.3 1098.7,520.7 1095.6,523.1 1073.1,471.6" fill="#eceef8" stroke="#eceef8" stroke-width="0.9" stroke-linejoin="round"/>
<polygon points="1073.1,471.6 1095.6,523.1 1090.6,524.5 1068.1,473.1" fill="#c2c3dc" stroke="#c2c3dc" stroke-width="0.9" stroke-linejoin="round"/>
<polygon points="678.1,663.2 690.7,655.1 689.0,646.1 676.2,654.1" fill="#9a9c84" stroke="#9a9c84" stroke-width="0.9" stroke-linejoin="round"/>
<polygon points="1175.8,620.3 1182.9,613.0 1178.7,611.8 1171.7,619.1" fill="#e7e7c5" stroke="#e7e7c5" stroke-width="0.9" stroke-linejoin="round"/>
<polygon points="1185.3,555.6 1213.4,528.6 1214.0,517.5 1185.7,544.2" fill="#9a9c84" stroke="#9a9c84" stroke-width="0.9" stroke-linejoin="round"/>
<polygon points="676.2,654.1 689.0,646.1 685.5,644.8 672.8,652.8" fill="#e7e7c5" stroke="#e7e7c5" stroke-width="0.9" stroke-linejoin="round"/>
<polygon points="1076.3,469.3 1073.1,471.6 1068.1,473.1 1071.3,470.8" fill="#d0d0e6" stroke="#d0d0e6" stroke-width="0.9" stroke-linejoin="round"/>
<polygon points="1185.7,544.2 1214.0,517.5 1210.5,516.7 1182.1,543.3" fill="#e7e7c5" stroke="#e7e7c5" stroke-width="0.9" stroke-linejoin="round"/>
<polygon points="662.2,717.4 657.9,697.4 645.7,692.7 650.1,712.7" fill="#83616a" stroke="#83616a" stroke-width="0.9" stroke-linejoin="round"/>
<polygon points="1191.5,608.9 1192.3,589.1 1185.5,596.1 1184.7,616.0" fill="#7a5862" stroke="#7a5862" stroke-width="0.9" stroke-linejoin="round"/>
<polygon points="1101.3,521.8 1120.6,506.7 1117.6,509.1 1098.3,524.2" fill="#eceef8" stroke="#eceef8" stroke-width="0.9" stroke-linejoin="round"/>
<polygon points="674.8,708.9 670.7,689.0 657.9,697.4 662.2,717.4" fill="#7a5862" stroke="#7a5862" stroke-width="0.9" stroke-linejoin="round"/>
<line x1="1187.4" y1="551.0" x2="1204.2" y2="559.0" stroke="#6f5c58" stroke-width="3.2" stroke-linecap="round"/>
<polygon points="1144.4,724.5 1151.9,716.1 1152.1,708.6 1144.6,717.0" fill="#9a9c84" stroke="#9a9c84" stroke-width="0.9" stroke-linejoin="round"/>
<polygon points="1098.3,524.2 1117.6,509.1 1121.6,514.2 1102.2,529.2" fill="#c2c3dc" stroke="#c2c3dc" stroke-width="0.9" stroke-linejoin="round"/>
<polygon points="1056.6,450.6 1098.7,482.1 1094.0,490.8 1052.2,459.4" fill="#7b6692" stroke="#7b6692" stroke-width="0.9" stroke-linejoin="round"/>
<polygon points="1184.7,616.0 1185.5,596.1 1170.9,592.2 1170.2,612.0" fill="#83616a" stroke="#83616a" stroke-width="0.9" stroke-linejoin="round"/>
<polygon points="793.6,536.9 838.9,510.1 837.7,499.7 792.2,526.2" fill="#9a9c84" stroke="#9a9c84" stroke-width="0.9" stroke-linejoin="round"/>
<polygon points="1144.6,717.0 1152.1,708.6 1148.0,707.3 1140.5,715.6" fill="#e7e7c5" stroke="#e7e7c5" stroke-width="0.9" stroke-linejoin="round"/>
<polygon points="1058.7,449.1 1100.7,480.6 1098.7,482.1 1056.6,450.6" fill="#a993c9" stroke="#a993c9" stroke-width="0.9" stroke-linejoin="round"/>
<polygon points="665.1,671.5 678.1,663.2 676.2,654.1 663.2,662.3" fill="#9a9c84" stroke="#9a9c84" stroke-width="0.9" stroke-linejoin="round"/>
<polygon points="792.2,526.2 837.7,499.7 835.2,499.1 789.6,525.5" fill="#e7e7c5" stroke="#e7e7c5" stroke-width="0.9" stroke-linejoin="round"/>
<polygon points="663.2,662.3 676.2,654.1 672.8,652.8 659.7,661.0" fill="#e7e7c5" stroke="#e7e7c5" stroke-width="0.9" stroke-linejoin="round"/>
<polygon points="979.5,451.5 1016.5,428.5 1016.1,417.9 978.9,440.5" fill="#9a9c84" stroke="#9a9c84" stroke-width="0.9" stroke-linejoin="round"/>
<polygon points="978.9,440.5 1016.1,417.9 1013.4,417.4 976.1,439.9" fill="#e7e7c5" stroke="#e7e7c5" stroke-width="0.9" stroke-linejoin="round"/>
<polygon points="1168.3,635.7 1175.5,628.1 1175.8,620.3 1168.6,627.8" fill="#9a9c84" stroke="#9a9c84" stroke-width="0.9" stroke-linejoin="round"/>
<polygon points="887.1,493.9 928.2,469.1 927.4,458.6 886.1,483.1" fill="#9a9c84" stroke="#9a9c84" stroke-width="0.9" stroke-linejoin="round"/>
<polygon points="1168.6,627.8 1175.8,620.3 1171.7,619.1 1164.4,626.6" fill="#e7e7c5" stroke="#e7e7c5" stroke-width="0.9" stroke-linejoin="round"/>
<polygon points="1120.6,506.7 1117.6,509.1 1121.6,514.2 1124.6,511.7" fill="#d0d0e6" stroke="#d0d0e6" stroke-width="0.9" stroke-linejoin="round"/>
<polygon points="886.1,483.1 927.4,458.6 924.8,458.0 883.4,482.4" fill="#e7e7c5" stroke="#e7e7c5" stroke-width="0.9" stroke-linejoin="round"/>
<polygon points="1192.3,589.1 1193.2,569.0 1186.3,575.8 1185.5,596.1" fill="#7a5862" stroke="#7a5862" stroke-width="0.9" stroke-linejoin="round"/>
<polygon points="657.9,697.4 653.5,677.0 641.3,672.4 645.7,692.7" fill="#83616a" stroke="#83616a" stroke-width="0.9" stroke-linejoin="round"/>
<polygon points="670.7,689.0 666.5,668.7 653.5,677.0 657.9,697.4" fill="#7a5862" stroke="#7a5862" stroke-width="0.9" stroke-linejoin="round"/>
<polygon points="1098.7,482.1 1141.5,514.1 1136.5,522.6 1094.0,490.8" fill="#7b6692" stroke="#7b6692" stroke-width="0.9" stroke-linejoin="round"/>
<polygon points="1124.4,531.3 1182.4,545.4 1182.0,556.2 1124.3,541.9" fill="#7b6692" stroke="#7b6692" stroke-width="0.9" stroke-linejoin="round"/>
<polygon points="1136.9,733.2 1144.4,724.5 1144.6,717.0 1137.0,725.5" fill="#9a9c84" stroke="#9a9c84" stroke-width="0.9" stroke-linejoin="round"/>
<polygon points="1185.5,596.1 1186.3,575.8 1171.5,572.0 1170.9,592.2" fill="#83616a" stroke="#83616a" stroke-width="0.9" stroke-linejoin="round"/>
<polygon points="1126.3,529.6 1184.3,543.7 1182.4,545.4 1124.4,531.3" fill="#a993c9" stroke="#a993c9" stroke-width="0.9" stroke-linejoin="round"/>
<polygon points="1100.7,480.6 1143.4,512.5 1141.5,514.1 1098.7,482.1" fill="#a993c9" stroke="#a993c9" stroke-width="0.9" stroke-linejoin="round"/>
<polygon points="1137.0,725.5 1144.6,717.0 1140.5,715.6 1132.8,724.2" fill="#e7e7c5" stroke="#e7e7c5" stroke-width="0.9" stroke-linejoin="round"/>
<polygon points="1161.0,643.4 1168.3,635.7 1168.6,627.8 1161.2,635.4" fill="#9a9c84" stroke="#9a9c84" stroke-width="0.9" stroke-linejoin="round"/>
<polygon points="1161.2,635.4 1168.6,627.8 1164.4,626.6 1157.0,634.2" fill="#e7e7c5" stroke="#e7e7c5" stroke-width="0.9" stroke-linejoin="round"/>
<polygon points="1193.2,569.0 1194.1,548.5 1187.1,555.2 1186.3,575.8" fill="#7a5862" stroke="#7a5862" stroke-width="0.9" stroke-linejoin="round"/>
<polygon points="1141.5,514.1 1184.9,546.6 1179.6,555.0 1136.5,522.6" fill="#7b6692" stroke="#7b6692" stroke-width="0.9" stroke-linejoin="round"/>
<polygon points="653.5,677.0 649.1,656.2 636.7,651.6 641.3,672.4" fill="#83616a" stroke="#83616a" stroke-width="0.9" stroke-linejoin="round"/>
<polygon points="1143.4,512.5 1186.7,544.9 1184.9,546.6 1141.5,514.1" fill="#a993c9" stroke="#a993c9" stroke-width="0.9" stroke-linejoin="round"/>
<polygon points="1194.1,548.5 1187.1,555.2 1172.2,551.5 1179.3,544.9" fill="#8a6670" stroke="#8a6670" stroke-width="0.9" stroke-linejoin="round"/>
<polygon points="1186.7,544.9 1184.9,546.6 1179.6,555.0 1181.4,553.3" fill="#8c77a6" stroke="#8c77a6" stroke-width="0.9" stroke-linejoin="round"/>
<polygon points="1184.3,543.7 1182.4,545.4 1182.0,556.2 1183.8,554.5" fill="#8c77a6" stroke="#8c77a6" stroke-width="0.9" stroke-linejoin="round"/>
<polygon points="666.5,668.7 662.2,648.0 649.1,656.2 653.5,677.0" fill="#7a5862" stroke="#7a5862" stroke-width="0.9" stroke-linejoin="round"/>
<polygon points="1186.3,575.8 1187.1,555.2 1172.2,551.5 1171.5,572.0" fill="#83616a" stroke="#83616a" stroke-width="0.9" stroke-linejoin="round"/>
<polygon points="1037.3,497.7 1072.2,472.6 1072.0,456.8 1036.8,481.3" fill="#9a9c84" stroke="#9a9c84" stroke-width="0.9" stroke-linejoin="round"/>
<polygon points="1129.1,742.0 1136.9,733.2 1137.0,725.5 1129.2,734.3" fill="#9a9c84" stroke="#9a9c84" stroke-width="0.9" stroke-linejoin="round"/>
<polygon points="1036.8,481.3 1072.0,456.8 1067.8,455.9 1032.5,480.4" fill="#e7e7c5" stroke="#e7e7c5" stroke-width="0.9" stroke-linejoin="round"/>
<polygon points="1129.2,734.3 1137.0,725.5 1132.8,724.2 1125.0,732.9" fill="#e7e7c5" stroke="#e7e7c5" stroke-width="0.9" stroke-linejoin="round"/>
<polygon points="644.9,611.8 699.0,580.3 697.1,569.8 642.6,600.9" fill="#9a9c84" stroke="#9a9c84" stroke-width="0.9" stroke-linejoin="round"/>
<polygon points="642.6,600.9 697.1,569.8 694.6,569.0 640.1,600.1" fill="#e7e7c5" stroke="#e7e7c5" stroke-width="0.9" stroke-linejoin="round"/>
<polygon points="1153.5,651.2 1161.0,643.4 1161.2,635.4 1153.7,643.2" fill="#9a9c84" stroke="#9a9c84" stroke-width="0.9" stroke-linejoin="round"/>
<polygon points="1153.7,643.2 1161.2,635.4 1157.0,634.2 1149.5,642.0" fill="#e7e7c5" stroke="#e7e7c5" stroke-width="0.9" stroke-linejoin="round"/>
<polygon points="649.1,656.2 644.5,634.9 632.1,630.5 636.7,651.6" fill="#83616a" stroke="#83616a" stroke-width="0.9" stroke-linejoin="round"/>
<polygon points="662.2,648.0 657.9,626.9 644.5,634.9 649.1,656.2" fill="#7a5862" stroke="#7a5862" stroke-width="0.9" stroke-linejoin="round"/>
<polygon points="1121.2,751.0 1129.1,742.0 1129.2,734.3 1121.3,743.2" fill="#9a9c84" stroke="#9a9c84" stroke-width="0.9" stroke-linejoin="round"/>
<polygon points="1121.3,743.2 1129.2,734.3 1125.0,732.9 1117.1,741.8" fill="#e7e7c5" stroke="#e7e7c5" stroke-width="0.9" stroke-linejoin="round"/>
<polygon points="1095.1,539.7 1127.9,512.5 1128.1,501.0 1095.0,527.8" fill="#9a9c84" stroke="#9a9c84" stroke-width="0.9" stroke-linejoin="round"/>
<polygon points="1095.0,527.8 1128.1,501.0 1124.6,500.2 1091.4,526.9" fill="#e7e7c5" stroke="#e7e7c5" stroke-width="0.9" stroke-linejoin="round"/>
<polygon points="1145.9,659.3 1153.5,651.2 1153.7,643.2 1146.0,651.2" fill="#9a9c84" stroke="#9a9c84" stroke-width="0.9" stroke-linejoin="round"/>
<polygon points="644.5,634.9 639.9,613.3 627.4,608.9 632.1,630.5" fill="#83616a" stroke="#83616a" stroke-width="0.9" stroke-linejoin="round"/>
<polygon points="744.3,566.1 793.6,536.9 792.2,526.2 742.5,555.1" fill="#9a9c84" stroke="#9a9c84" stroke-width="0.9" stroke-linejoin="round"/>
<polygon points="1146.0,651.2 1153.7,643.2 1149.5,642.0 1141.8,649.9" fill="#e7e7c5" stroke="#e7e7c5" stroke-width="0.9" stroke-linejoin="round"/>
<polygon points="653.4,605.4 639.9,613.3 627.4,608.9 641.0,601.2" fill="#8a6670" stroke="#8a6670" stroke-width="0.9" stroke-linejoin="round"/>
<polygon points="657.9,626.9 653.4,605.4 639.9,613.3 644.5,634.9" fill="#7a5862" stroke="#7a5862" stroke-width="0.9" stroke-linejoin="round"/>
<polygon points="742.5,555.1 792.2,526.2 789.6,525.5 739.9,554.3" fill="#e7e7c5" stroke="#e7e7c5" stroke-width="0.9" stroke-linejoin="round"/>
<polygon points="1113.1,760.1 1121.2,751.0 1121.3,743.2 1113.2,752.4" fill="#9a9c84" stroke="#9a9c84" stroke-width="0.9" stroke-linejoin="round"/>
<polygon points="1154.6,585.0 1185.3,555.6 1185.7,544.2 1154.9,573.2" fill="#9a9c84" stroke="#9a9c84" stroke-width="0.9" stroke-linejoin="round"/>
<polygon points="1113.2,752.4 1121.3,743.2 1117.1,741.8 1108.9,750.9" fill="#e7e7c5" stroke="#e7e7c5" stroke-width="0.9" stroke-linejoin="round"/>
<polygon points="1154.9,573.2 1185.7,544.2 1182.1,543.3 1151.2,572.2" fill="#e7e7c5" stroke="#e7e7c5" stroke-width="0.9" stroke-linejoin="round"/>
<polygon points="842.3,521.0 887.1,493.9 886.1,483.1 841.0,509.8" fill="#9a9c84" stroke="#9a9c84" stroke-width="0.9" stroke-linejoin="round"/>
<polygon points="939.1,476.5 979.5,451.5 978.9,440.5 938.3,465.1" fill="#9a9c84" stroke="#9a9c84" stroke-width="0.9" stroke-linejoin="round"/>
<polygon points="841.0,509.8 886.1,483.1 883.4,482.4 838.3,509.1" fill="#e7e7c5" stroke="#e7e7c5" stroke-width="0.9" stroke-linejoin="round"/>
<polygon points="1138.1,667.5 1145.9,659.3 1146.0,651.2 1138.2,659.3" fill="#9a9c84" stroke="#9a9c84" stroke-width="0.9" stroke-linejoin="round"/>
<polygon points="938.3,465.1 978.9,440.5 976.1,439.9 935.5,464.5" fill="#e7e7c5" stroke="#e7e7c5" stroke-width="0.9" stroke-linejoin="round"/>
<polygon points="1138.2,659.3 1146.0,651.2 1141.8,649.9 1133.9,658.1" fill="#e7e7c5" stroke="#e7e7c5" stroke-width="0.9" stroke-linejoin="round"/>
<polygon points="1104.9,769.5 1113.1,760.1 1113.2,752.4 1104.9,761.7" fill="#9a9c84" stroke="#9a9c84" stroke-width="0.9" stroke-linejoin="round"/>
<polygon points="1104.9,761.7 1113.2,752.4 1108.9,750.9 1100.6,760.2" fill="#e7e7c5" stroke="#e7e7c5" stroke-width="0.9" stroke-linejoin="round"/>
<polygon points="1130.1,675.8 1138.1,667.5 1138.2,659.3 1130.2,667.6" fill="#9a9c84" stroke="#9a9c84" stroke-width="0.9" stroke-linejoin="round"/>
<polygon points="639.0,600.4 672.5,589.9 669.0,591.9 635.5,602.4" fill="#a993c9" stroke="#a993c9" stroke-width="0.9" stroke-linejoin="round"/>
<polygon points="637.5,602.5 688.8,620.0 691.0,631.6 639.9,613.8" fill="#7b6692" stroke="#7b6692" stroke-width="0.9" stroke-linejoin="round"/>
<polygon points="635.5,602.4 669.0,591.9 675.4,603.9 641.8,613.9" fill="#7b6692" stroke="#7b6692" stroke-width="0.9" stroke-linejoin="round"/>
<polygon points="1130.2,667.6 1138.2,659.3 1133.9,658.1 1125.9,666.3" fill="#e7e7c5" stroke="#e7e7c5" stroke-width="0.9" stroke-linejoin="round"/>
<polygon points="641.0,600.5 692.2,617.9 688.8,620.0 637.5,602.5" fill="#a993c9" stroke="#a993c9" stroke-width="0.9" stroke-linejoin="round"/>
<polygon points="1096.4,779.1 1104.9,769.5 1104.9,761.7 1096.4,771.3" fill="#9a9c84" stroke="#9a9c84" stroke-width="0.9" stroke-linejoin="round"/>
<polygon points="1096.4,771.3 1104.9,761.7 1100.6,760.2 1092.1,769.8" fill="#e7e7c5" stroke="#e7e7c5" stroke-width="0.9" stroke-linejoin="round"/>
<polygon points="999.1,525.0 1037.3,497.7 1036.8,481.3 998.4,508.2" fill="#9a9c84" stroke="#9a9c84" stroke-width="0.9" stroke-linejoin="round"/>
<polygon points="998.4,508.2 1036.8,481.3 1032.5,480.4 994.0,507.1" fill="#e7e7c5" stroke="#e7e7c5" stroke-width="0.9" stroke-linejoin="round"/>
<polygon points="1121.9,684.4 1130.1,675.8 1130.2,667.6 1122.0,676.2" fill="#9a9c84" stroke="#9a9c84" stroke-width="0.9" stroke-linejoin="round"/>
<polygon points="1087.8,788.9 1096.4,779.1 1096.4,771.3 1087.8,781.0" fill="#9a9c84" stroke="#9a9c84" stroke-width="0.9" stroke-linejoin="round"/>
<polygon points="1122.0,676.2 1130.2,667.6 1125.9,666.3 1117.6,674.8" fill="#e7e7c5" stroke="#e7e7c5" stroke-width="0.9" stroke-linejoin="round"/>
<polygon points="1087.8,781.0 1096.4,771.3 1092.1,769.8 1083.4,779.5" fill="#e7e7c5" stroke="#e7e7c5" stroke-width="0.9" stroke-linejoin="round"/>
<polygon points="690.1,598.2 744.3,566.1 742.5,555.1 688.0,586.8" fill="#9a9c84" stroke="#9a9c84" stroke-width="0.9" stroke-linejoin="round"/>
<polygon points="688.0,586.8 742.5,555.1 739.9,554.3 685.3,585.9" fill="#e7e7c5" stroke="#e7e7c5" stroke-width="0.9" stroke-linejoin="round"/>
<polygon points="1059.1,569.4 1095.1,539.7 1095.0,527.8 1058.9,557.1" fill="#9a9c84" stroke="#9a9c84" stroke-width="0.9" stroke-linejoin="round"/>
<polygon points="1113.6,693.1 1121.9,684.4 1122.0,676.2 1113.6,684.8" fill="#9a9c84" stroke="#9a9c84" stroke-width="0.9" stroke-linejoin="round"/>
<polygon points="1079.0,799.0 1087.8,788.9 1087.8,781.0 1078.9,791.0" fill="#9a9c84" stroke="#9a9c84" stroke-width="0.9" stroke-linejoin="round"/>
<polygon points="1058.9,557.1 1095.0,527.8 1091.4,526.9 1055.2,556.1" fill="#e7e7c5" stroke="#e7e7c5" stroke-width="0.9" stroke-linejoin="round"/>
<polygon points="1113.6,684.8 1122.0,676.2 1117.6,674.8 1109.2,683.5" fill="#e7e7c5" stroke="#e7e7c5" stroke-width="0.9" stroke-linejoin="round"/>
<polygon points="1078.9,791.0 1087.8,781.0 1083.4,779.5 1074.5,789.4" fill="#e7e7c5" stroke="#e7e7c5" stroke-width="0.9" stroke-linejoin="round"/>
<polygon points="793.2,550.7 842.3,521.0 841.0,509.8 791.6,539.1" fill="#9a9c84" stroke="#9a9c84" stroke-width="0.9" stroke-linejoin="round"/>
<polygon points="791.6,539.1 841.0,509.8 838.3,509.1 788.9,538.3" fill="#e7e7c5" stroke="#e7e7c5" stroke-width="0.9" stroke-linejoin="round"/>
<polygon points="1121.1,617.1 1154.6,585.0 1154.9,573.2 1121.2,605.0" fill="#9a9c84" stroke="#9a9c84" stroke-width="0.9" stroke-linejoin="round"/>
<polygon points="1070.0,809.2 1079.0,799.0 1078.9,791.0 1069.9,801.2" fill="#9a9c84" stroke="#9a9c84" stroke-width="0.9" stroke-linejoin="round"/>
<polygon points="1105.1,702.1 1113.6,693.1 1113.6,684.8 1105.1,693.7" fill="#9a9c84" stroke="#9a9c84" stroke-width="0.9" stroke-linejoin="round"/>
<polygon points="895.0,503.9 939.1,476.5 938.3,465.1 893.9,492.1" fill="#9a9c84" stroke="#9a9c84" stroke-width="0.9" stroke-linejoin="round"/>
<polygon points="1121.2,605.0 1154.9,573.2 1151.2,572.2 1117.3,603.9" fill="#e7e7c5" stroke="#e7e7c5" stroke-width="0.9" stroke-linejoin="round"/>
<polygon points="893.9,492.1 938.3,465.1 935.5,464.5 891.0,491.4" fill="#e7e7c5" stroke="#e7e7c5" stroke-width="0.9" stroke-linejoin="round"/>
<polygon points="1069.9,801.2 1078.9,791.0 1074.5,789.4 1065.4,799.6" fill="#e7e7c5" stroke="#e7e7c5" stroke-width="0.9" stroke-linejoin="round"/>
<polygon points="1105.1,693.7 1113.6,684.8 1109.2,683.5 1100.6,692.3" fill="#e7e7c5" stroke="#e7e7c5" stroke-width="0.9" stroke-linejoin="round"/>
<polygon points="689.5,599.7 711.9,627.6 708.9,630.8 686.6,602.9" fill="#c2c3dc" stroke="#c2c3dc" stroke-width="0.9" stroke-linejoin="round"/>
<polygon points="717.3,624.3 711.9,627.6 708.9,630.8 714.2,627.4" fill="#d0d0e6" stroke="#d0d0e6" stroke-width="0.9" stroke-linejoin="round"/>
<polygon points="694.9,596.5 717.3,624.3 711.9,627.6 689.5,599.7" fill="#eceef8" stroke="#eceef8" stroke-width="0.9" stroke-linejoin="round"/>
<polygon points="688.8,620.0 742.9,638.6 744.9,650.3 691.0,631.6" fill="#7b6692" stroke="#7b6692" stroke-width="0.9" stroke-linejoin="round"/>
<polygon points="672.5,589.9 708.1,578.7 704.6,580.8 669.0,591.9" fill="#a993c9" stroke="#a993c9" stroke-width="0.9" stroke-linejoin="round"/>
<polygon points="669.0,591.9 704.6,580.8 711.1,593.1 675.4,603.9" fill="#7b6692" stroke="#7b6692" stroke-width="0.9" stroke-linejoin="round"/>
<polygon points="692.2,617.9 746.3,636.3 742.9,638.6 688.8,620.0" fill="#a993c9" stroke="#a993c9" stroke-width="0.9" stroke-linejoin="round"/>
<polygon points="1060.8,819.7 1070.0,809.2 1069.9,801.2 1060.6,811.7" fill="#9a9c84" stroke="#9a9c84" stroke-width="0.9" stroke-linejoin="round"/>
<polygon points="1096.3,711.3 1105.1,702.1 1105.1,693.7 1096.3,702.8" fill="#9a9c84" stroke="#9a9c84" stroke-width="0.9" stroke-linejoin="round"/>
<polygon points="1060.6,811.7 1069.9,801.2 1065.4,799.6 1056.1,810.0" fill="#e7e7c5" stroke="#e7e7c5" stroke-width="0.9" stroke-linejoin="round"/>
<polygon points="1096.3,702.8 1105.1,693.7 1100.6,692.3 1091.8,701.4" fill="#e7e7c5" stroke="#e7e7c5" stroke-width="0.9" stroke-linejoin="round"/>
<polygon points="1051.3,830.5 1060.8,819.7 1060.6,811.7 1051.1,822.3" fill="#9a9c84" stroke="#9a9c84" stroke-width="0.9" stroke-linejoin="round"/>
<polygon points="957.4,555.1 999.1,525.0 998.4,508.2 956.2,537.6" fill="#9a9c84" stroke="#9a9c84" stroke-width="0.9" stroke-linejoin="round"/>
<polygon points="1051.1,822.3 1060.6,811.7 1056.1,810.0 1046.6,820.7" fill="#e7e7c5" stroke="#e7e7c5" stroke-width="0.9" stroke-linejoin="round"/>
<polygon points="1087.4,720.6 1096.3,711.3 1096.3,702.8 1087.4,712.1" fill="#9a9c84" stroke="#9a9c84" stroke-width="0.9" stroke-linejoin="round"/>
<polygon points="956.2,537.6 998.4,508.2 994.0,507.1 951.7,536.4" fill="#e7e7c5" stroke="#e7e7c5" stroke-width="0.9" stroke-linejoin="round"/>
<polygon points="1087.4,712.1 1096.3,702.8 1091.8,701.4 1082.8,710.7" fill="#e7e7c5" stroke="#e7e7c5" stroke-width="0.9" stroke-linejoin="round"/>
<polygon points="1018.4,943.2 1017.5,923.6 1007.4,935.8 1008.3,955.5" fill="#7a5862" stroke="#7a5862" stroke-width="0.9" stroke-linejoin="round"/>
<polygon points="1041.6,841.4 1051.3,830.5 1051.1,822.3 1041.4,833.3" fill="#9a9c84" stroke="#9a9c84" stroke-width="0.9" stroke-linejoin="round"/>
<polygon points="1008.3,955.5 1007.4,935.8 991.4,928.9 992.6,948.5" fill="#83616a" stroke="#83616a" stroke-width="0.9" stroke-linejoin="round"/>
<polygon points="733.1,587.9 719.8,632.5 725.1,629.1 738.5,584.7" fill="#b9bad2" stroke="#b9bad2" stroke-width="0.9" stroke-linejoin="round"/>
<polygon points="1041.4,833.3 1051.1,822.3 1046.6,820.7 1036.9,831.6" fill="#e7e7c5" stroke="#e7e7c5" stroke-width="0.9" stroke-linejoin="round"/>
<polygon points="727.5,583.3 714.5,628.0 719.8,632.5 733.1,587.9" fill="#c2c3dc" stroke="#c2c3dc" stroke-width="0.9" stroke-linejoin="round"/>
<polygon points="1078.3,730.2 1087.4,720.6 1087.4,712.1 1078.2,721.7" fill="#9a9c84" stroke="#9a9c84" stroke-width="0.9" stroke-linejoin="round"/>
<polygon points="1078.2,721.7 1087.4,712.1 1082.8,710.7 1073.6,720.2" fill="#e7e7c5" stroke="#e7e7c5" stroke-width="0.9" stroke-linejoin="round"/>
<polygon points="739.2,583.4 793.2,550.7 791.6,539.1 737.3,571.4" fill="#9a9c84" stroke="#9a9c84" stroke-width="0.9" stroke-linejoin="round"/>
<polygon points="1019.7,601.9 1059.1,569.4 1058.9,557.1 1019.3,589.3" fill="#9a9c84" stroke="#9a9c84" stroke-width="0.9" stroke-linejoin="round"/>
<polygon points="737.3,571.4 791.6,539.1 788.9,538.3 734.4,570.5" fill="#e7e7c5" stroke="#e7e7c5" stroke-width="0.9" stroke-linejoin="round"/>
<polygon points="1019.3,589.3 1058.9,557.1 1055.2,556.1 1015.4,588.2" fill="#e7e7c5" stroke="#e7e7c5" stroke-width="0.9" stroke-linejoin="round"/>
<polygon points="1031.7,852.7 1041.6,841.4 1041.4,833.3 1031.5,844.5" fill="#9a9c84" stroke="#9a9c84" stroke-width="0.9" stroke-linejoin="round"/>
<polygon points="1031.5,844.5 1041.4,833.3 1036.9,831.6 1026.9,842.7" fill="#e7e7c5" stroke="#e7e7c5" stroke-width="0.9" stroke-linejoin="round"/>
<polygon points="1068.9,740.0 1078.3,730.2 1078.2,721.7 1068.8,731.4" fill="#9a9c84" stroke="#9a9c84" stroke-width="0.9" stroke-linejoin="round"/>
<polygon points="1017.5,923.6 1016.6,903.6 1006.3,915.7 1007.4,935.8" fill="#7a5862" stroke="#7a5862" stroke-width="0.9" stroke-linejoin="round"/>
<polygon points="846.4,534.0 895.0,503.9 893.9,492.1 845.0,521.8" fill="#9a9c84" stroke="#9a9c84" stroke-width="0.9" stroke-linejoin="round"/>
<polygon points="1007.4,935.8 1006.3,915.7 990.3,908.9 991.4,928.9" fill="#83616a" stroke="#83616a" stroke-width="0.9" stroke-linejoin="round"/>
<polygon points="742.9,638.6 800.0,658.1 801.8,670.1 744.9,650.3" fill="#7b6692" stroke="#7b6692" stroke-width="0.9" stroke-linejoin="round"/>
<polygon points="1068.8,731.4 1078.2,721.7 1073.6,720.2 1064.2,729.9" fill="#e7e7c5" stroke="#e7e7c5" stroke-width="0.9" stroke-linejoin="round"/>
<polygon points="845.0,521.8 893.9,492.1 891.0,491.4 842.1,521.0" fill="#e7e7c5" stroke="#e7e7c5" stroke-width="0.9" stroke-linejoin="round"/>
<polygon points="1084.2,652.4 1121.1,617.1 1121.2,605.0 1084.1,639.9" fill="#9a9c84" stroke="#9a9c84" stroke-width="0.9" stroke-linejoin="round"/>
<polygon points="746.3,636.3 803.3,655.8 800.0,658.1 742.9,638.6" fill="#a993c9" stroke="#a993c9" stroke-width="0.9" stroke-linejoin="round"/>
<polygon points="708.1,578.7 746.1,566.8 742.6,568.9 704.6,580.8" fill="#a993c9" stroke="#a993c9" stroke-width="0.9" stroke-linejoin="round"/>
<polygon points="1084.1,639.9 1121.2,605.0 1117.3,603.9 1080.2,638.7" fill="#e7e7c5" stroke="#e7e7c5" stroke-width="0.9" stroke-linejoin="round"/>
<polygon points="704.6,580.8 742.6,568.9 749.2,581.7 711.1,593.1" fill="#7b6692" stroke="#7b6692" stroke-width="0.9" stroke-linejoin="round"/>
<polygon points="1021.6,864.2 1031.7,852.7 1031.5,844.5 1021.3,856.0" fill="#9a9c84" stroke="#9a9c84" stroke-width="0.9" stroke-linejoin="round"/>
<polygon points="732.9,580.1 727.5,583.3 733.1,587.9 738.5,584.7" fill="#d0d0e6" stroke="#d0d0e6" stroke-width="0.9" stroke-linejoin="round"/>
<polygon points="1021.3,856.0 1031.5,844.5 1026.9,842.7 1016.7,854.2" fill="#e7e7c5" stroke="#e7e7c5" stroke-width="0.9" stroke-linejoin="round"/>
<polygon points="1059.4,750.1 1068.9,740.0 1068.8,731.4 1059.2,741.4" fill="#9a9c84" stroke="#9a9c84" stroke-width="0.9" stroke-linejoin="round"/>
<polygon points="1059.2,741.4 1068.8,731.4 1064.2,729.9 1054.6,739.8" fill="#e7e7c5" stroke="#e7e7c5" stroke-width="0.9" stroke-linejoin="round"/>
<polygon points="1011.2,876.0 1021.6,864.2 1021.3,856.0 1010.8,867.7" fill="#9a9c84" stroke="#9a9c84" stroke-width="0.9" stroke-linejoin="round"/>
<polygon points="1016.6,903.6 1015.7,883.2 1005.3,895.1 1006.3,915.7" fill="#7a5862" stroke="#7a5862" stroke-width="0.9" stroke-linejoin="round"/>
<polygon points="739.0,584.8 767.7,620.7 764.3,624.0 735.7,588.3" fill="#c2c3dc" stroke="#c2c3dc" stroke-width="0.9" stroke-linejoin="round"/>
<polygon points="744.4,581.6 773.0,617.3 767.7,620.7 739.0,584.8" fill="#eceef8" stroke="#eceef8" stroke-width="0.9" stroke-linejoin="round"/>
<polygon points="1006.3,915.7 1005.3,895.1 989.0,888.4 990.3,908.9" fill="#83616a" stroke="#83616a" stroke-width="0.9" stroke-linejoin="round"/>
<polygon points="1010.8,867.7 1021.3,856.0 1016.7,854.2 1006.2,865.9" fill="#e7e7c5" stroke="#e7e7c5" stroke-width="0.9" stroke-linejoin="round"/>
<polygon points="801.5,652.9 796.4,656.5 792.9,659.6 798.0,656.0" fill="#d0d0e6" stroke="#d0d0e6" stroke-width="0.9" stroke-linejoin="round"/>
<polygon points="767.7,620.7 796.4,656.5 792.9,659.6 764.3,624.0" fill="#c2c3dc" stroke="#c2c3dc" stroke-width="0.9" stroke-linejoin="round"/>
<polygon points="773.0,617.3 801.5,652.9 796.4,656.5 767.7,620.7" fill="#eceef8" stroke="#eceef8" stroke-width="0.9" stroke-linejoin="round"/>
<polygon points="1049.5,760.3 1059.4,750.1 1059.2,741.4 1049.3,751.6" fill="#9a9c84" stroke="#9a9c84" stroke-width="0.9" stroke-linejoin="round"/>
<polygon points="911.4,588.1 957.4,555.1 956.2,537.6 909.8,570.0" fill="#9a9c84" stroke="#9a9c84" stroke-width="0.9" stroke-linejoin="round"/>
<polygon points="1049.3,751.6 1059.2,741.4 1054.6,739.8 1044.7,750.0" fill="#e7e7c5" stroke="#e7e7c5" stroke-width="0.9" stroke-linejoin="round"/>
<polygon points="909.8,570.0 956.2,537.6 951.7,536.4 905.2,568.7" fill="#e7e7c5" stroke="#e7e7c5" stroke-width="0.9" stroke-linejoin="round"/>
<polygon points="1015.7,883.2 1014.8,862.3 1004.2,874.1 1005.3,895.1" fill="#7a5862" stroke="#7a5862" stroke-width="0.9" stroke-linejoin="round"/>
<polygon points="1005.3,895.1 1004.2,874.1 987.8,867.5 989.0,888.4" fill="#83616a" stroke="#83616a" stroke-width="0.9" stroke-linejoin="round"/>
<polygon points="1039.5,770.9 1049.5,760.3 1049.3,751.6 1039.2,762.1" fill="#9a9c84" stroke="#9a9c84" stroke-width="0.9" stroke-linejoin="round"/>
<polygon points="1039.2,762.1 1049.3,751.6 1044.7,750.0 1034.6,760.5" fill="#e7e7c5" stroke="#e7e7c5" stroke-width="0.9" stroke-linejoin="round"/>
<polygon points="795.9,616.3 801.9,658.6 796.0,656.6 789.9,614.3" fill="#c2c3dc" stroke="#c2c3dc" stroke-width="0.9" stroke-linejoin="round"/>
<polygon points="801.2,612.8 807.0,654.9 801.9,658.6 795.9,616.3" fill="#eceef8" stroke="#eceef8" stroke-width="0.9" stroke-linejoin="round"/>
<polygon points="976.3,637.8 1019.7,601.9 1019.3,589.3 975.6,624.7" fill="#9a9c84" stroke="#9a9c84" stroke-width="0.9" stroke-linejoin="round"/>
<polygon points="800.0,658.1 860.5,678.8 861.9,691.0 801.8,670.1" fill="#7b6692" stroke="#7b6692" stroke-width="0.9" stroke-linejoin="round"/>
<polygon points="806.3,664.3 827.9,645.1 833.0,641.4 811.4,660.6" fill="#b9bad2" stroke="#b9bad2" stroke-width="0.9" stroke-linejoin="round"/>
<polygon points="975.6,624.7 1019.3,589.3 1015.4,588.2 971.6,623.5" fill="#e7e7c5" stroke="#e7e7c5" stroke-width="0.9" stroke-linejoin="round"/>
<polygon points="803.3,655.8 863.7,676.3 860.5,678.8 800.0,658.1" fill="#a993c9" stroke="#a993c9" stroke-width="0.9" stroke-linejoin="round"/>
<polygon points="801.5,658.3 823.0,638.9 827.9,645.1 806.3,664.3" fill="#c2c3dc" stroke="#c2c3dc" stroke-width="0.9" stroke-linejoin="round"/>
<polygon points="1029.2,781.7 1039.5,770.9 1039.2,762.1 1028.9,772.8" fill="#9a9c84" stroke="#9a9c84" stroke-width="0.9" stroke-linejoin="round"/>
<polygon points="792.8,567.2 846.4,534.0 845.0,521.8 791.0,554.6" fill="#9a9c84" stroke="#9a9c84" stroke-width="0.9" stroke-linejoin="round"/>
<polygon points="1028.9,772.8 1039.2,762.1 1034.6,760.5 1024.2,771.1" fill="#e7e7c5" stroke="#e7e7c5" stroke-width="0.9" stroke-linejoin="round"/>
<polygon points="791.0,554.6 845.0,521.8 842.1,521.0 787.9,553.7" fill="#e7e7c5" stroke="#e7e7c5" stroke-width="0.9" stroke-linejoin="round"/>
<polygon points="1014.8,862.3 1013.8,840.9 1003.1,852.6 1004.2,874.1" fill="#7a5862" stroke="#7a5862" stroke-width="0.9" stroke-linejoin="round"/>
<polygon points="746.1,566.8 786.6,554.1 783.1,556.2 742.6,568.9" fill="#a993c9" stroke="#a993c9" stroke-width="0.9" stroke-linejoin="round"/>
<polygon points="742.6,568.9 783.1,556.2 789.9,569.5 749.2,581.7" fill="#7b6692" stroke="#7b6692" stroke-width="0.9" stroke-linejoin="round"/>
<polygon points="1004.2,874.1 1003.1,852.6 986.5,846.1 987.8,867.5" fill="#83616a" stroke="#83616a" stroke-width="0.9" stroke-linejoin="round"/>
<polygon points="1043.6,691.4 1084.2,652.4 1084.1,639.9 1043.2,678.4" fill="#9a9c84" stroke="#9a9c84" stroke-width="0.9" stroke-linejoin="round"/>
<polygon points="1043.2,678.4 1084.1,639.9 1080.2,638.7 1039.1,677.1" fill="#e7e7c5" stroke="#e7e7c5" stroke-width="0.9" stroke-linejoin="round"/>
<polygon points="1018.7,792.7 1029.2,781.7 1028.9,772.8 1018.3,783.8" fill="#9a9c84" stroke="#9a9c84" stroke-width="0.9" stroke-linejoin="round"/>
<polygon points="789.7,572.2 795.9,616.3 789.9,614.3 783.6,570.4" fill="#c2c3dc" stroke="#c2c3dc" stroke-width="0.9" stroke-linejoin="round"/>
<polygon points="795.1,568.9 801.2,612.8 795.9,616.3 789.7,572.2" fill="#eceef8" stroke="#eceef8" stroke-width="0.9" stroke-linejoin="round"/>
<polygon points="1018.3,783.8 1028.9,772.8 1024.2,771.1 1013.5,782.1" fill="#e7e7c5" stroke="#e7e7c5" stroke-width="0.9" stroke-linejoin="round"/>
<polygon points="1013.8,840.9 1012.8,819.1 1002.0,830.6 1003.1,852.6" fill="#7a5862" stroke="#7a5862" stroke-width="0.9" stroke-linejoin="round"/>
<polygon points="1003.1,852.6 1002.0,830.6 985.2,824.1 986.5,846.1" fill="#83616a" stroke="#83616a" stroke-width="0.9" stroke-linejoin="round"/>
<polygon points="795.1,568.9 789.7,572.2 783.6,570.4 789.0,567.1" fill="#d0d0e6" stroke="#d0d0e6" stroke-width="0.9" stroke-linejoin="round"/>
<polygon points="1007.8,804.1 1018.7,792.7 1018.3,783.8 1007.4,795.1" fill="#9a9c84" stroke="#9a9c84" stroke-width="0.9" stroke-linejoin="round"/>
<polygon points="786.6,554.1 783.1,556.2 789.9,569.5 793.3,567.3" fill="#8c77a6" stroke="#8c77a6" stroke-width="0.9" stroke-linejoin="round"/>
<polygon points="1007.4,795.1 1018.3,783.8 1013.5,782.1 1002.6,793.4" fill="#e7e7c5" stroke="#e7e7c5" stroke-width="0.9" stroke-linejoin="round"/>
<polygon points="860.5,624.6 911.4,588.1 909.8,570.0 858.4,605.9" fill="#9a9c84" stroke="#9a9c84" stroke-width="0.9" stroke-linejoin="round"/>
<polygon points="827.9,645.1 850.7,624.9 855.8,621.3 833.0,641.4" fill="#b9bad2" stroke="#b9bad2" stroke-width="0.9" stroke-linejoin="round"/>
<polygon points="858.4,605.9 909.8,570.0 905.2,568.7 853.6,604.5" fill="#e7e7c5" stroke="#e7e7c5" stroke-width="0.9" stroke-linejoin="round"/>
<polygon points="823.0,638.9 845.6,618.6 850.7,624.9 827.9,645.1" fill="#c2c3dc" stroke="#c2c3dc" stroke-width="0.9" stroke-linejoin="round"/>
<polygon points="860.5,678.8 924.5,700.7 925.6,713.1 861.9,691.0" fill="#7b6692" stroke="#7b6692" stroke-width="0.9" stroke-linejoin="round"/>
<polygon points="1012.8,819.1 1011.8,796.7 1000.9,808.1 1002.0,830.6" fill="#7a5862" stroke="#7a5862" stroke-width="0.9" stroke-linejoin="round"/>
<polygon points="863.7,676.3 927.6,698.1 924.5,700.7 860.5,678.8" fill="#a993c9" stroke="#a993c9" stroke-width="0.9" stroke-linejoin="round"/>
<polygon points="788.2,557.7 838.4,598.4 834.6,608.4 784.8,568.0" fill="#7b6692" stroke="#7b6692" stroke-width="0.9" stroke-linejoin="round"/>
<polygon points="1002.0,830.6 1000.9,808.1 983.9,801.7 985.2,824.1" fill="#83616a" stroke="#83616a" stroke-width="0.9" stroke-linejoin="round"/>
<polygon points="791.7,555.6 841.8,596.2 838.4,598.4 788.2,557.7" fill="#a993c9" stroke="#a993c9" stroke-width="0.9" stroke-linejoin="round"/>
<polygon points="850.7,614.9 845.6,618.6 850.7,624.9 855.8,621.3" fill="#d0d0e6" stroke="#d0d0e6" stroke-width="0.9" stroke-linejoin="round"/>
<polygon points="859.2,625.2 890.6,688.2 885.2,689.2 853.8,626.4" fill="#c2c3dc" stroke="#c2c3dc" stroke-width="0.9" stroke-linejoin="round"/>
<polygon points="864.3,621.5 895.5,684.3 890.6,688.2 859.2,625.2" fill="#eceef8" stroke="#eceef8" stroke-width="0.9" stroke-linejoin="round"/>
<polygon points="928.2,677.5 976.3,637.8 975.6,624.7 927.1,664.0" fill="#9a9c84" stroke="#9a9c84" stroke-width="0.9" stroke-linejoin="round"/>
<polygon points="927.1,664.0 975.6,624.7 971.6,623.5 923.0,662.7" fill="#e7e7c5" stroke="#e7e7c5" stroke-width="0.9" stroke-linejoin="round"/>
<polygon points="864.3,621.5 859.2,625.2 853.8,626.4 858.9,622.8" fill="#d0d0e6" stroke="#d0d0e6" stroke-width="0.9" stroke-linejoin="round"/>
<polygon points="1011.8,796.7 1010.8,773.9 999.7,785.1 1000.9,808.1" fill="#7a5862" stroke="#7a5862" stroke-width="0.9" stroke-linejoin="round"/>
<polygon points="898.7,685.9 918.8,670.2 913.9,674.2 893.8,689.8" fill="#eceef8" stroke="#eceef8" stroke-width="0.9" stroke-linejoin="round"/>
<polygon points="1000.9,808.1 999.7,785.1 982.6,778.8 983.9,801.7" fill="#83616a" stroke="#83616a" stroke-width="0.9" stroke-linejoin="round"/>
<polygon points="893.8,689.8 913.9,674.2 919.1,680.6 898.8,696.1" fill="#c2c3dc" stroke="#c2c3dc" stroke-width="0.9" stroke-linejoin="round"/>
<polygon points="838.4,598.4 889.7,640.0 885.4,649.8 834.6,608.4" fill="#7b6692" stroke="#7b6692" stroke-width="0.9" stroke-linejoin="round"/>
<polygon points="841.8,596.2 892.9,637.5 889.7,640.0 838.4,598.4" fill="#a993c9" stroke="#a993c9" stroke-width="0.9" stroke-linejoin="round"/>
<polygon points="998.5,734.6 1043.6,691.4 1043.2,678.4 997.8,721.2" fill="#9a9c84" stroke="#9a9c84" stroke-width="0.9" stroke-linejoin="round"/>
<polygon points="997.8,721.2 1043.2,678.4 1039.1,677.1 993.6,719.8" fill="#e7e7c5" stroke="#e7e7c5" stroke-width="0.9" stroke-linejoin="round"/>
<polygon points="918.8,670.2 913.9,674.2 919.1,680.6 923.9,676.6" fill="#d0d0e6" stroke="#d0d0e6" stroke-width="0.9" stroke-linejoin="round"/>
<polygon points="1010.8,773.9 1009.7,750.5 998.5,761.5 999.7,785.1" fill="#7a5862" stroke="#7a5862" stroke-width="0.9" stroke-linejoin="round"/>
<polygon points="999.7,785.1 998.5,761.5 981.2,755.3 982.6,778.8" fill="#83616a" stroke="#83616a" stroke-width="0.9" stroke-linejoin="round"/>
<polygon points="889.7,640.0 942.0,682.4 937.3,691.9 885.4,649.8" fill="#7b6692" stroke="#7b6692" stroke-width="0.9" stroke-linejoin="round"/>
<polygon points="924.5,700.7 992.5,723.9 993.1,736.6 925.6,713.1" fill="#7b6692" stroke="#7b6692" stroke-width="0.9" stroke-linejoin="round"/>
<polygon points="927.6,698.1 995.4,721.2 992.5,723.9 924.5,700.7" fill="#a993c9" stroke="#a993c9" stroke-width="0.9" stroke-linejoin="round"/>
<polygon points="892.9,637.5 945.1,679.8 942.0,682.4 889.7,640.0" fill="#a993c9" stroke="#a993c9" stroke-width="0.9" stroke-linejoin="round"/>
<polygon points="1009.7,750.5 1008.7,726.5 997.3,737.4 998.5,761.5" fill="#7a5862" stroke="#7a5862" stroke-width="0.9" stroke-linejoin="round"/>
<polygon points="942.0,682.4 995.4,725.6 990.2,734.9 937.3,691.9" fill="#7b6692" stroke="#7b6692" stroke-width="0.9" stroke-linejoin="round"/>
<polygon points="998.5,761.5 997.3,737.4 979.8,731.3 981.2,755.3" fill="#83616a" stroke="#83616a" stroke-width="0.9" stroke-linejoin="round"/>
<polygon points="945.1,679.8 998.4,722.8 995.4,725.6 942.0,682.4" fill="#a993c9" stroke="#a993c9" stroke-width="0.9" stroke-linejoin="round"/>
<polygon points="1008.7,726.5 997.3,737.4 979.8,731.3 991.3,720.6" fill="#8a6670" stroke="#8a6670" stroke-width="0.9" stroke-linejoin="round"/>
<polygon points="998.4,722.8 995.4,725.6 990.2,734.9 993.1,732.1" fill="#8c77a6" stroke="#8c77a6" stroke-width="0.9" stroke-linejoin="round"/>
<polygon points="995.4,721.2 992.5,723.9 993.1,736.6 996.0,733.8" fill="#8c77a6" stroke="#8c77a6" stroke-width="0.9" stroke-linejoin="round"/>
<!-- axis triad -->
<line x1="408" y1="838" x2="408" y2="768" stroke="#2a9e22" stroke-width="3.8"/>
<path d="M401.5 772 L408 752.5 L414.5 772 Z" fill="#44cc33"/>
<line x1="408" y1="838" x2="480" y2="856" stroke="#e0401c" stroke-width="3.8"/>
<path d="M475 849.5 L492 861 L474 863 Z" fill="#e8502a"/>
<line x1="408" y1="838" x2="366" y2="874" stroke="#1c0e98" stroke-width="4.4"/>
<path d="M362 866 L353 886.5 L372 879 Z" fill="#2010c0"/>
<!-- watermark logo -->
<g transform="translate(293,936)"><path d="M10,44.5 C4,44.5 0,38 0.1,30.1 C0.3,22 6,16 13,16.2 C16,10 22,7 28.7,6.9 C29.5,8 29.5,12 31.1,18 C33,22 37,24 40.7,25.9 C49,28 50,34 44.3,36.1 C41,37 37,34 33.5,33.1 C30,34 28,37 29,38.5 C31,42 35,44 39.5,44.8 Z" fill="#333"/><path d="M40.1,9.6 C40,7 43,5.5 45.5,5.7 C49,5.8 51,7.5 53.9,7.8 C56,6 56.5,2 57.5,0.6 C62,4 64.5,9 65.3,16.8 C72,19 75,25 74.9,30.1 C75,38 69,44.5 61.1,44.8 L47.9,44.8 C55,42 58.7,37 58.7,30.1 C58.5,24 55,21 50.5,19.4 C45,17.5 40.5,14 40.1,9.6 Z" fill="#5294cc"/></g>
<text x="369" y="977" font-family="Liberation Sans, sans-serif" font-size="46" fill="#3a3a3a" letter-spacing="-1.5">SkyCiv</text>
<text x="333" y="999" font-family="Liberation Sans, sans-serif" font-size="11.3" font-weight="bold" fill="#5b9bd5" textLength="168" lengthAdjust="spacingAndGlyphs">CLOUD ENGINEERING SOFTWARE</text>
</svg>
</div>

<!-- right toolbar -->
<div class="abs" style="left:1859px;top:178px;width:70px;height:200px;background:#1f2331;border-radius:7px"></div>
<div class="tb" style="top:186px;height:22px"></div>
<svg class="abs" style="left:1881px;top:191px" width="15" height="12" viewBox="0 0 15 12"><path d="M0.5 6 C2.5 0.8 12.5 0.8 14.5 6 C12.5 11.2 2.5 11.2 0.5 6 Z" fill="#333"/><path d="M2 6 C3.8 2.6 11.2 2.6 13 6 C11.2 9.4 3.8 9.4 2 6 Z" fill="#f0f0f0"/><circle cx="7.5" cy="6" r="2.6" fill="#333"/><circle cx="6.6" cy="5.2" r="0.8" fill="#f0f0f0"/></svg>
<div class="tb" style="top:215px;height:23px;line-height:21px">Views</div>
<div class="tb" style="top:245px;height:22px;line-height:21px">Rotate</div>
<div class="tb" style="top:274px;height:23px"></div>
<svg class="abs" style="left:1882px;top:279px" width="15" height="13" viewBox="0 0 15 13"><path d="M0 3.5 Q0 2.5 1 2.5 H4 L5.2 0.5 H9.8 L11 2.5 H14 Q15 2.5 15 3.5 V12 Q15 13 14 13 H1 Q0 13 0 12 Z" fill="#333"/><circle cx="7.5" cy="7.5" r="3.2" fill="#f0f0f0"/><circle cx="7.5" cy="7.5" r="2" fill="#333"/></svg>
<div class="tb" style="top:304px;height:22px;background:#4f98cd"></div>
<svg class="abs" style="left:1882px;top:307px" width="14" height="16" viewBox="0 0 14 16"><path d="M7 1 L13 4 V11.5 L7 15 L1 11.5 V4 Z" fill="#fff"/><path d="M1.8 4.5 L7 7.3 L12.2 4.5 M7 7.3 V14" fill="none" stroke="#4f98cd" stroke-width="1.2"/></svg>
<div class="tb" style="top:333px;height:30px;background:#52b854"></div>
<svg class="abs" style="left:1882px;top:341px" width="14" height="14" viewBox="0 0 14 14"><circle cx="7" cy="7" r="6.5" fill="#fff"/><path d="M4.9 5.3 A2.2 2.2 0 1 1 7.8 7.4 C7.2 7.7 7 8 7 8.8" fill="none" stroke="#52b854" stroke-width="1.8"/><circle cx="7" cy="10.8" r="1" fill="#52b854"/></svg>

<!-- chat bubble -->
<div class="abs" style="left:1840px;top:912px;width:60px;height:60px;border-radius:50%;background:#5591d9;box-shadow:0 2px 10px rgba(0,0,0,0.18)"></div>
<svg class="abs" style="left:1856px;top:926px" width="28" height="33" viewBox="0 0 28 33"><path d="M3 0 H25 Q28 0 28 3 V32 L21 29 H3 Q0 29 0 26 V3 Q0 0 3 0 Z" fill="#fff"/><path d="M4 20 Q14 26 24 20" fill="none" stroke="#5591d9" stroke-width="1.6"/></svg>
<div class="abs" style="left:1880px;top:985px;font-size:12px;color:#59656f;line-height:14px;width:35px;text-align:right">v5.0.2</div>

<div id="status"></div>
<div class="abs" style="left:1802px;top:1004px;width:58px;height:28px;background:#232c47;color:#e4e4e4;font-size:14px;line-height:28px;text-align:center">Metric</div>
<div class="abs" style="left:1864px;top:1004px;width:56px;height:28px;background:#232c47;color:#e4e4e4;font-size:14px;line-height:28px;text-align:center">Barn*</div>
</body></html>
